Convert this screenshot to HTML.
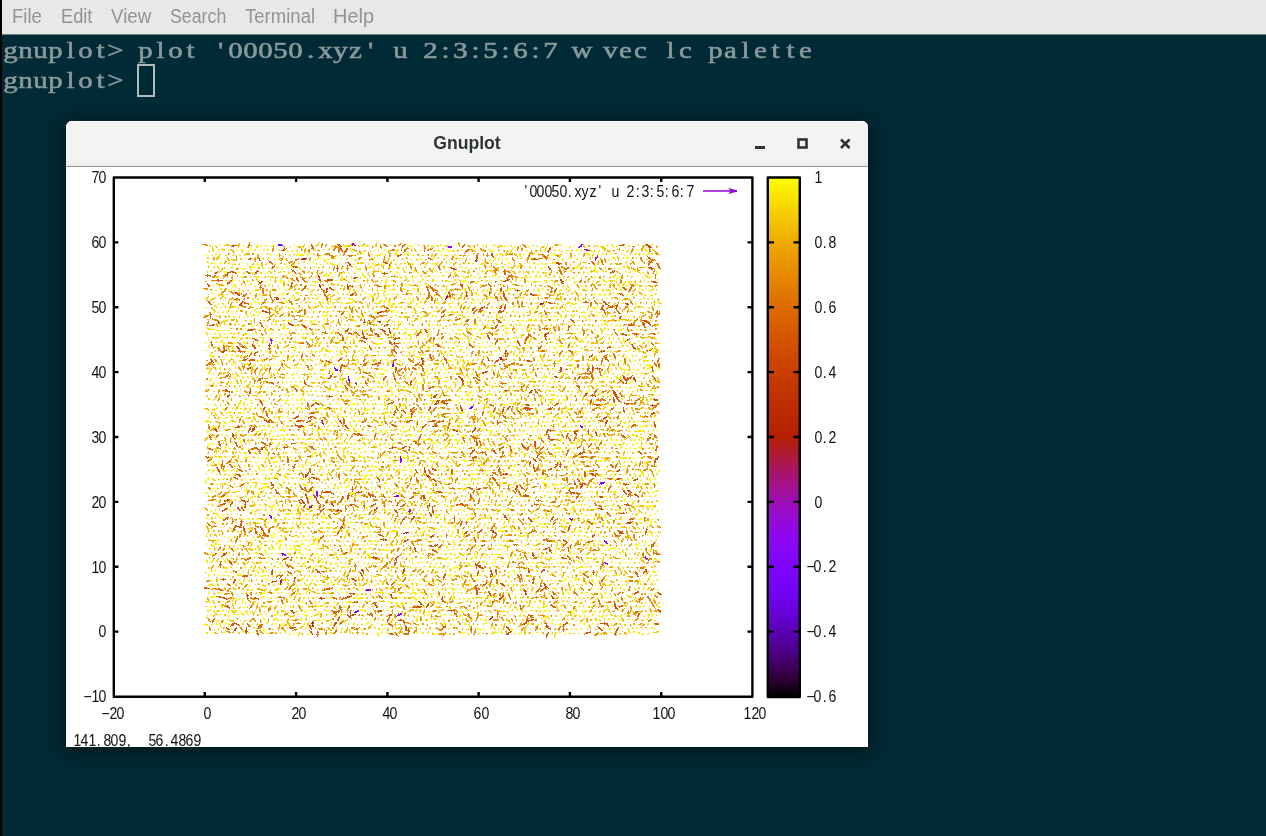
<!DOCTYPE html>
<html><head><meta charset="utf-8">
<style>
html,body{margin:0;padding:0;}
body{width:1266px;height:836px;overflow:hidden;position:relative;background:#002b36;font-family:"Liberation Sans", sans-serif;}
.abs{position:absolute;}
#strip{left:0;top:0;width:2px;height:836px;background:#000;}
#menubar{left:2px;top:0;width:1264px;height:34px;background:#e8e8e7;border-bottom:1px solid #6f8286;}
.mi{position:absolute;top:5px;font-size:20px;color:#939393;line-height:22px;white-space:pre;transform-origin:0 0;}
.term{position:absolute;left:3px;font-family:"Liberation Serif", serif;font-size:24px;line-height:30px;color:#8a999b;white-space:pre;-webkit-text-stroke:0.6px #8a999b;}
.term i{font-style:normal;display:inline-block;width:15px;text-align:center;transform:scaleX(1.2);}
#cursor{left:137px;top:64px;width:14px;height:29px;border:2px solid #b3bcb9;}
#win{left:66px;top:121px;width:802px;height:626px;background:#fff;border-radius:6px 6px 0 0;box-shadow:0 3px 22px 4px rgba(0,0,0,0.45);overflow:hidden;}
#title{position:absolute;left:0;top:0;width:802px;height:45px;background:linear-gradient(#f3f3f3 0,#f3f3f3 40px,#e9e9e8 45px);border-bottom:1px solid #98978f;box-shadow:inset 0 1px #fff;}
#ttext{position:absolute;left:0;top:12px;width:802px;text-align:center;line-height:20px;font-size:17.6px;font-weight:bold;color:#2e3436;}
.pl{position:absolute;font-size:16px;line-height:16px;color:#111;white-space:pre;}
.pl b{font-weight:normal;display:inline-block;width:7.47px;text-align:center;transform:scaleX(0.88);}
</style></head><body>
<div id="root" style="position:absolute;left:0;top:0;width:1266px;height:836px;will-change:transform">
<div id="strip" class="abs"></div>
<div id="menubar" class="abs"><div class="mi" style="left:9.69px;transform:scaleX(0.924)">File</div><div class="mi" style="left:58.52px;transform:scaleX(0.909)">Edit</div><div class="mi" style="left:109.00px;transform:scaleX(0.936)">View</div><div class="mi" style="left:167.73px;transform:scaleX(0.888)">Search</div><div class="mi" style="left:243.00px;transform:scaleX(0.927)">Terminal</div><div class="mi" style="left:331.20px;transform:scaleX(0.997)">Help</div></div>
<div class="term" style="top:35px"><i>g</i><i>n</i><i>u</i><i>p</i><i>l</i><i>o</i><i>t</i><i>&gt;</i><i> </i><i>p</i><i>l</i><i>o</i><i>t</i><i> </i><i>&#39;</i><i>0</i><i>0</i><i>0</i><i>5</i><i>0</i><i>.</i><i>x</i><i>y</i><i>z</i><i>&#39;</i><i> </i><i>u</i><i> </i><i>2</i><i>:</i><i>3</i><i>:</i><i>5</i><i>:</i><i>6</i><i>:</i><i>7</i><i> </i><i>w</i><i> </i><i>v</i><i>e</i><i>c</i><i> </i><i>l</i><i>c</i><i> </i><i>p</i><i>a</i><i>l</i><i>e</i><i>t</i><i>t</i><i>e</i></div>
<div class="term" style="top:65px"><i>g</i><i>n</i><i>u</i><i>p</i><i>l</i><i>o</i><i>t</i><i>&gt;</i><i> </i></div>
<div id="cursor" class="abs"></div>
<div id="win" class="abs">
<div id="title"><div id="ttext">Gnuplot</div>
<svg style="position:absolute;left:0;top:0" width="802" height="45" viewBox="66 121 802 45">
<rect x="755" y="146" width="10" height="3" fill="#2e3436"/>
<rect x="798.5" y="139.5" width="8" height="8" fill="none" stroke="#2e3436" stroke-width="2.6"/>
<path d="M841 139.5L849.5 148M849.5 139.5L841 148" stroke="#2e3436" stroke-width="2.6" fill="none"/>
</svg>
</div>
</div>
<svg class="abs" style="left:66px;top:167px" width="802" height="580" viewBox="66 167 802 580">
<defs><linearGradient id="cb" x1="0" y1="0" x2="0" y2="1"><stop offset="0.0000" stop-color="#ffff00"/><stop offset="0.0312" stop-color="#fbe800"/><stop offset="0.0625" stop-color="#f7d200"/><stop offset="0.0938" stop-color="#f3be00"/><stop offset="0.1250" stop-color="#efab00"/><stop offset="0.1562" stop-color="#ea9900"/><stop offset="0.1875" stop-color="#e68900"/><stop offset="0.2188" stop-color="#e17a00"/><stop offset="0.2500" stop-color="#dd6c00"/><stop offset="0.2812" stop-color="#d85f00"/><stop offset="0.3125" stop-color="#d35300"/><stop offset="0.3438" stop-color="#cf4800"/><stop offset="0.3750" stop-color="#ca3e00"/><stop offset="0.4062" stop-color="#c43500"/><stop offset="0.4375" stop-color="#bf2d00"/><stop offset="0.4688" stop-color="#ba2600"/><stop offset="0.5000" stop-color="#b42000"/><stop offset="0.5312" stop-color="#af1a32"/><stop offset="0.5625" stop-color="#a91562"/><stop offset="0.5938" stop-color="#a3118e"/><stop offset="0.6250" stop-color="#9c0db4"/><stop offset="0.6562" stop-color="#960ad4"/><stop offset="0.6875" stop-color="#8f08ec"/><stop offset="0.7188" stop-color="#8706fa"/><stop offset="0.7500" stop-color="#7f04ff"/><stop offset="0.7812" stop-color="#7703fa"/><stop offset="0.8125" stop-color="#6e02ec"/><stop offset="0.8438" stop-color="#6501d4"/><stop offset="0.8750" stop-color="#5a00b4"/><stop offset="0.9062" stop-color="#4e008e"/><stop offset="0.9375" stop-color="#400062"/><stop offset="0.9688" stop-color="#2d0032"/><stop offset="1.0000" stop-color="#000000"/></linearGradient></defs>
<g fill="none" stroke-width="15" stroke-linecap="butt" shape-rendering="crispEdges" transform="scale(.1)">
<path stroke="#7703fa" d="M3341 3673l29 29l-15 -4m15 4l-3 -15M4693 4092l30 -21l-6 13m6 -13l-14 1M5799 4257l23 18l-11 -1m11 1l-4 -11"/>
<path stroke="#7f04ff" d="M2782 2448l32 6l-11 4m11 -4l-9 -8M3485 3763l5 43l-10 -13m10 13l7 -15M4012 4625l-1 -39l8 12m-8 -12l-8 13M6047 4824l-42 12l11 -12m-11 12l15 4M2717 5193l-13 -33l11 8m-11 -8l-2 13M3587 6108l-29 10l7 -9m-7 9l11 2"/>
<path stroke="#8706fa" d="M3991 4958l-31 4l9 -7m-9 7l11 5M6038 5405l23 23l-12 -3m12 3l-3 -12"/>
<path stroke="#8f08ec" d="M4518 2471l-35 -3l12 -6m-12 6l11 8M3933 3622l-4 35l-6 -12m6 12l8 -10M3170 4911l0 40l-8 -13m8 13l8 -13M2860 5553l-39 -15l16 -3m-16 3l10 13M6082 5644l-31 -15l13 -1m-13 1l7 11"/>
<path stroke="#960ad4" d="M5783 2481l32 -27l-5 15m5 -15l-16 2"/>
<path stroke="#9c0db4" d="M2716 3439l-4 -42l10 13m-10 -13l-7 14M5690 5183l37 18l-16 1m16 -1l-8 -13M6448 5568l27 29l-14 -4m14 4l-3 -15M3706 5898l-38 3l12 -9m-12 9l13 6M4019 6137l-37 14l9 -12m-9 12l15 3"/>
<path stroke="#a3118e" d="M5846 2492l28 11l-11 2m11 -2l-7 -9M3126 5046l-26 28l3 -14m-3 14l14 -4M4103 5085l-10 39l-5 -15m5 15l11 -11"/>
<path stroke="#a91562" d="M3556 2455l-32 -13l13 -2m-13 2l8 11M5948 2606l20 -29l-1 13m1 -13l-12 5M5394 3047l33 -12l-8 10m8 -10l-13 -3M2819 5787l-13 38l-3 -15m3 15l12 -10"/>
<path stroke="#af1a32" d="M3067 2586l-40 7l12 -10m-12 10l14 6M4450 2998l18 -26l-1 12m1 -12l-11 5M3552 3823l18 18M3219 4198l7 29l-8 -8m8 8l4 -11M4091 5324l-35 3l11 -8m-11 8l12 6M4897 6200l21 -22l-2 11m2 -11l-11 3"/>
<path stroke="#b42000" d="M3194 2843l8 26l-8 -7m8 7l3 -10M5038 3605l-34 -26l16 2m-16 -2l6 15M3130 6268l-5 -44l10 13m-10 -13l-7 14"/>
<path stroke="#cf4800" d="M6457 2442l41 27l-16 0m16 0l-7 -14M5478 2523l28 -41l-1 16m1 -16l-15 6M4775 2574l-14 36l-3 -14m3 14l12 -9M3472 2618l33 38l-15 -5m15 5l-3 -16M5554 2625l39 13l-15 4m15 -4l-10 -12M4499 2673l50 21l-16 3m16 -3l-9 -13M3186 2750l12 50l-11 -11m11 11l5 -15M2227 2807l-49 -5l14 -7m-14 7l13 10M2630 2812l-30 17l6 -12m-6 12l13 0M5035 2818l48 -19l-10 13m10 -13l-16 -3M5606 2793l21 37l-14 -8m14 8l1 -16M3476 2844l5 38l-9 -11m9 11l6 -13M3270 2884l-5 32l-5 -11m5 11l8 -9M2398 2955l-42 -26l16 0m-16 0l7 14M5299 2932l33 23l-15 -1m15 1l-6 -14M2744 2969l35 19l-15 1m15 -1l-8 -13M2437 3012l-34 30l5 -15m-5 15l16 -3M6292 3050l-31 -17l13 -1m-13 1l7 12M4848 3072l-38 14l9 -12m-9 12l15 3M6160 3089l16 -35l2 14m-2 -14l-12 8M2619 3107l52 15l-15 4m15 -4l-11 -12M3771 3132l46 -12l-11 12m11 -12l-15 -5M3646 3194l-2 36l-7 -12m7 12l8 -11M3766 3212l33 8l-12 4m12 -4l-9 -9M6477 3223l-39 -18l16 -2m-16 2l9 13M2879 3226l45 29l-16 0m16 0l-7 -14M3807 3289l43 27l-16 0m16 0l-7 -14M3518 3342l-29 -13l12 -1m-12 1l7 10M5492 3329l-41 13l10 -12m-10 12l16 4M3673 3392l-42 -18l16 -2m-16 2l9 13M2364 3459l25 29l-14 -4m14 4l-2 -14M2555 3488l-25 -36l15 6m-15 -6l1 16M2692 3495l3 -46l8 14m-8 -14l-9 13M6316 3444l32 42l-15 -6m15 6l-2 -16M2271 3495l-42 23l8 -14m-8 14l16 1M5892 3572l26 -15l-5 10m5 -10l-11 0M3285 3790l32 -35l-3 16m3 -16l-15 4M4587 3763l39 38l-16 -4m16 4l-4 -16M6258 3807l-18 -37l13 8m-13 -8l-2 16M6240 3831l-32 -32l16 4m-16 -4l4 16M5331 3900l-30 24l5 -14m-5 14l15 -2M6125 3901l26 33l-15 -6m15 6l-2 -16M4399 4004l-30 9l8 -9m-8 9l11 3M2632 4055l-30 -45l15 7m-15 -7l1 16M3110 4062l25 -17l-5 10m5 -10l-11 0M4476 4042l-49 -17l16 -3m-16 3l10 12M6553 4054l-37 0l12 -7m-12 7l12 7M6551 4123l-35 22l7 -14m-7 14l16 0M2943 4186l34 -19l-7 13m7 -13l-15 0M6073 4166l-32 19l6 -13m-6 13l14 0M2952 4246l40 24l-16 0m16 0l-7 -14M2989 4255l37 9l-14 4m14 -4l-10 -10M4324 4264l37 -2l-12 8m12 -8l-12 -7M2175 4317l-30 -35l15 5m-15 -5l3 16M2519 4318l21 -35l0 16m0 -16l-14 7M4723 4325l30 -39l-2 16m2 -16l-15 6M5850 4521l-51 18l10 -12m-10 12l16 3M5305 4607l-8 31l-4 -12m4 12l9 -9M2168 4673l23 42l-14 -8m14 8l1 -16M3088 4721l-27 39l1 -16m-1 16l15 -6M4260 4747l30 21l-14 -1m14 1l-6 -13M5078 4741l-46 3l13 -9m-13 9l14 7M5739 4814l18 32l-12 -7m12 7l0 -14M4811 4886l-30 4l9 -7m-9 7l11 5M5765 4941l-34 -14l14 -2m-14 2l8 11M6320 4928l-32 -22l15 1m-15 -1l6 14M4238 4954l8 39l-10 -11m10 11l5 -14M5988 4964l31 7l-11 4m11 -4l-8 -8M2220 5111l43 -20l-9 13m9 -13l-16 -2M3419 5110l-47 -6l15 -6m-15 6l12 10M6035 5101l-32 -15l13 -2m-13 2l7 11M6264 5234l48 -10l-12 11m12 -11l-15 -5M3401 5301l17 -31l1 14m-1 -14l-12 7M4965 5338l-39 -26l16 1m-16 -1l7 15M6171 5302l38 27l-16 -1m16 1l-6 -15M4304 5374l31 -19l-6 12m6 -12l-14 0M2886 5568l-45 24l8 -14m-8 14l16 1M4835 5690l-43 -28l16 0m-16 0l7 14M4028 5737l18 -43l2 16m-2 -16l-13 9M5411 5722l28 -20l-5 12m5 -12l-13 1M3563 5812l-43 -27l16 0m-16 0l7 14M5261 5952l-8 -43l11 12m-11 -12l-6 15M2478 5988l-4 -38l9 12m-9 -12l-6 13M3246 5985l-43 0l14 -9m-14 9l14 8M3928 5992l-24 -45l14 8m-14 -8l-1 16M5040 5953l-40 37l4 -15m-4 15l16 -3M6140 6046l27 39l-15 -7m15 7l-1 -16M2944 6133l-32 -26l16 2m-16 -2l5 15M3558 6142l-38 13l10 -12m-10 12l15 3M3339 6264l19 -37l1 16m-1 -16l-14 8M2370 6277l-25 22l4 -12m-4 12l13 -2"/>
<path stroke="#d35300" d="M2366 2451l-33 6l10 -9m-10 9l12 5M4652 2443l-21 23l2 -12m-2 12l11 -3M3429 2521l-27 -43l14 7m-14 -7l0 16M3458 2521l10 -37l4 14m-4 -14l-10 10M4915 2527l10 30l-9 -8m9 8l3 -12M2586 2582l20 29l-12 -6m12 6l-1 -13M5381 2593l-49 -1l14 -8m-14 8l13 9M5472 2591l-26 -22l13 2m-13 -2l4 12M3885 2635l-34 -12l13 -3m-13 3l9 11M2979 2672l-48 -7l15 -6m-15 6l12 10M4401 2700l-14 -34l11 8m-11 -8l-2 14M5481 2663l18 29l-12 -6m12 6l0 -13M6476 2674l47 14l-15 4m15 -4l-11 -12M2370 2738l-45 -21l16 -2m-16 2l9 13M2582 2708l-27 22l4 -13m-4 13l13 -2M3879 2733l-40 0l13 -8m-13 8l13 8M6103 2732l35 -19l-7 13m7 -13l-15 -1M3576 2772l-30 8l8 -9m-8 9l11 3M3332 2800l-55 1l13 -9m-13 9l14 8M6515 2813l44 10l-15 5m15 -5l-11 -11M3339 2899l-43 -18l16 -3m-16 3l9 13M5010 2917l4 -33l5 11m-5 -11l-8 10M3496 2957l33 -16l-8 12m8 -12l-14 -1M5459 3020l50 13l-15 5m15 -5l-11 -12M6032 3012l35 33l-16 -3m16 3l-4 -15M4994 3092l21 -28l-1 13m1 -13l-12 5M5046 3096l9 -34l4 13m-4 -13l-10 9M6081 3077l53 -12l-12 11m12 -11l-15 -5M6059 3143l-24 -44l14 8m-14 -8l-1 16M4410 3175l30 -20l-6 12m6 -12l-14 1M6210 3160l-17 26l0 -12m0 12l11 -5M2166 3196l25 36l-15 -6m15 6l-1 -16M2089 3258l45 -7l-12 10m12 -10l-15 -6M3017 3241l40 34l-16 -2m16 2l-5 -15M6277 3248l49 0l-14 8m14 -8l-14 -8M2472 3303l46 -2l-13 9m13 -9l-14 -8M3891 3281l8 45l-11 -12m11 12l6 -15M4246 3286l21 32l-13 -6m13 6l0 -14M3636 3369l-9 -51l11 12m-11 -12l-6 15M3745 3326l38 35l-16 -3m16 3l-4 -15M4898 3396l-20 -43l13 9m-13 -9l-2 16M5460 3397l-10 -37l11 10m-11 -10l-4 14M5203 3457l-23 -41l14 8m-14 -8l-1 16M6068 3482l34 -13l-8 11m8 -11l-13 -2M2583 3515l-32 18l7 -12m-7 12l14 1M5062 3498l-8 48l-6 -15m6 15l11 -12M2103 3588l17 26l-11 -5m11 5l0 -12M3380 3612l32 -22l-6 14m6 -14l-15 1M4237 3630l-16 -47l12 10m-12 -10l-4 16M4990 3598l-30 19l6 -12m-6 12l13 0M5320 3617l-49 -9l15 -6m-15 6l12 11M3412 3647l40 18l-16 2m16 -2l-9 -13M3719 3652l43 -13l-11 12m11 -12l-16 -4M3964 3666l-7 44l-6 -15m6 15l10 -12M5609 3668l-2 46l-8 -14m8 14l9 -13M5927 3728l2 -55l8 14m-8 -14l-9 13M6006 3691l-37 -9l14 -4m-14 4l10 10M4818 3735l46 -15l-10 12m10 -12l-16 -4M5578 3778l-26 -14l11 -1m-11 1l6 10M5806 3758l-21 22l2 -11m-2 11l11 -3M6271 3802l40 -28l-6 15m6 -15l-16 1M6337 3766l10 33l-10 -9m10 9l3 -12M3040 3805l16 34l-12 -8m12 8l1 -14M4116 3802l-15 49l-4 -15m4 15l12 -11M6258 3841l16 -46l3 16m-3 -16l-12 10M2506 3884l-7 50l-7 -15m7 15l10 -12M2973 3914l-19 -25l11 4m-11 -4l1 12M2299 3942l-21 24l2 -12m-2 12l12 -4M4377 3944l-37 26l6 -15m-6 15l16 -1M5958 3959l-40 -7l14 -6m-14 6l12 10M6137 3936l31 32l-15 -4m15 4l-3 -16M6135 3971l7 41l-10 -12m10 12l6 -15M6583 3999l-46 -2l14 -8m-14 8l13 9M4393 4030l-30 7l8 -8m-8 8l11 4M5304 4055l-38 -8l14 -5m-14 5l11 10M2656 4069l-21 25l2 -12m-2 12l12 -4M4600 4054l21 51l-13 -9m13 9l2 -16M5105 4061l-32 34l3 -16m-3 16l15 -4M5286 4080l-40 1l13 -8m-13 8l13 8M5326 4081l-43 14l10 -12m-10 12l16 4M4137 4111l-18 39l-2 -16m2 16l13 -9M3077 4180l31 -8l-9 9m9 -9l-12 -4M2646 4202l40 17l-16 2m16 -2l-9 -13M2964 4213l38 -2l-12 8m12 -8l-12 -7M3417 4237l-17 -29l11 6m-11 -6l0 13M4287 4216l54 -6l-13 10m13 -10l-14 -7M6074 4198l-17 43l-3 -16m3 16l13 -10M2347 4279l49 -13l-11 12m11 -12l-15 -5M3488 4291l-37 -36l16 4m-16 -4l4 16M4585 4314l-48 -16l16 -4m-16 4l10 12M5487 4286l-18 39l-2 -16m2 16l13 -9M5888 4289l-4 36l-6 -12m6 12l8 -11M2325 4329l10 38l-11 -10m11 10l4 -14M5771 4354l-19 -25l11 4m-11 -4l1 12M5969 4359l-8 -33l9 9m-9 -9l-4 12M5544 4390l-38 15l9 -12m-9 12l15 3M5352 4415l-1 55l-8 -14m8 14l9 -13M2590 4499l-41 -26l16 0m-16 0l7 14M2648 4468l-36 21l7 -14m-7 14l16 0M2878 4472l-39 3l12 -9m-12 9l13 7M3973 4473l-53 4l13 -9m-13 9l14 7M4066 4461l-45 23l8 -14m-8 14l16 1M2505 4543l-16 -38l13 9m-13 -9l-2 15M4700 4547l38 -40l-3 16m3 -16l-15 4M4964 4544l-28 -37l15 6m-15 -6l2 16M6423 4545l-39 -30l16 2m-16 -2l6 15M6588 4565l-26 31l2 -15m-2 15l15 -5M5601 4675l5 -34l5 12m-5 -12l-9 10M4246 4675l2 43l-9 -13m9 13l8 -14M4319 4683l40 24l-16 0m16 0l-7 -14M5971 4703l-44 5l13 -10m-13 10l15 7M2411 4767l-30 -20l14 1m-14 -1l6 13M5960 4761l-40 -20l16 -1m-16 1l8 14M3169 4791l-31 -13l13 -2m-13 2l8 10M3801 4814l-25 -39l14 7m-14 -7l0 16M4327 4788l24 20l-12 -2m12 2l-4 -11M6215 4784l-39 9l11 -11m-11 11l15 5M6381 4788l-31 10l8 -10m-8 10l12 3M2709 4820l18 35l-13 -8m13 8l1 -15M6228 4838l38 8l-14 5m14 -5l-11 -10M5173 4853l-10 44l-5 -15m5 15l11 -11M5801 4887l19 -37l1 16m-1 -16l-13 8M3287 4918l-31 0l10 -6m-10 6l10 6M4433 4928l-53 -12l15 -5m-15 5l11 11M6268 4949l-29 -41l15 6m-15 -6l1 16M3055 4935l18 47l-13 -10m13 10l3 -16M3130 4944l28 34l-15 -5m15 5l-2 -16M3476 5001l9 -54l6 15m-6 -15l-11 12M3710 4976l-19 -40l13 9m-13 -9l-2 16M5288 4959l-43 -1l14 -8m-14 8l13 9M6388 4971l-28 -19l13 1m-13 -1l5 12M2240 5012l40 -11l-11 11m11 -11l-15 -4M2410 5001l44 14l-16 4m16 -4l-11 -12M3011 4991l28 42l-15 -7m15 7l-1 -16M2202 5046l37 -5l-11 9m11 -9l-13 -6M2449 5080l7 -37l5 13m-5 -13l-10 10M3340 5064l-22 -29l13 5m-13 -5l1 14M3534 5040l-32 13l8 -11m-8 11l13 2M3969 5059l10 -30l3 12m-3 -12l-9 8M4303 5035l-22 30l1 -14m-1 14l13 -5M2407 5113l-28 -35l15 5m-15 -5l2 16M4324 5081l9 48l-11 -12m11 12l6 -15M4294 5120l13 33l-11 -8m11 8l2 -13M6205 5134l35 -1l-11 7m11 -7l-12 -6M4145 5165l-30 35l3 -16m-3 16l15 -5M5072 5198l-23 -39l14 7m-14 -7l0 16M5277 5175l41 36l-16 -3m16 3l-5 -15M5542 5163l-27 30l3 -15m-3 15l15 -4M4619 5212l-10 37l-4 -14m4 14l11 -10M2361 5260l49 12l-15 5m15 -5l-11 -11M2433 5261l9 46l-11 -12m11 12l6 -15M2605 5262l17 33l-12 -7m12 7l1 -14M4675 5311l-23 26l2 -13m-2 13l13 -4M5952 5343l-24 22l3 -12m-3 12l12 -2M3871 5400l-44 -7l15 -6m-15 6l12 10M4087 5393l-39 19l8 -14m-8 14l16 1M4329 5467l-31 -12l12 -3m-12 3l8 10M4381 5451l-30 5l9 -8m-9 8l11 4M4159 5519l-8 -31l9 8m-9 -8l-3 12M5492 5476l13 39l-12 -10m12 10l4 -15M2274 5526l-43 25l8 -14m-8 14l16 0M5326 5524l10 38l-11 -11m11 11l5 -14M3779 5581l-53 -5l14 -7m-14 7l13 10M3986 5561l-32 33l4 -16m-4 16l16 -4M5666 5587l-45 -9l15 -6m-15 6l12 11M2282 5595l30 43l-15 -6m15 6l-1 -16M2724 5692l-4 53l-7 -14m7 14l9 -13M3641 5734l-19 -35l13 8m-13 -8l-1 15M4905 5699l17 47l-12 -10m12 10l3 -16M5291 5726l-5 -31l8 9m-8 -9l-4 11M6432 5737l31 -37l-2 16m2 -16l-15 5M3625 5768l-18 -39l13 9m-13 -9l-2 16M2263 5796l-38 -1l13 -7m-13 7l12 8M2767 5811l-32 5l9 -8m-9 8l11 5M6052 5776l-38 39l4 -16m-4 16l16 -4M5051 5865l-32 -23l15 1m-15 -1l6 14M5436 5830l31 42l-15 -6m15 6l-1 -16M5927 5856l-22 -26l12 4m-12 -4l2 13M3554 5938l-54 -1l14 -8m-14 8l13 9M4771 5947l-3 -43l9 13m-9 -13l-7 14M6392 5914l-43 23l8 -14m-8 14l16 1M6571 5924l39 23l-16 0m16 0l-8 -14M2279 5995l-44 -19l16 -2m-16 2l9 13M2592 5991l-48 -11l15 -5m-15 5l11 11M3519 5961l-49 14l11 -12m-11 12l15 4M5509 5953l30 29l-16 -3m16 3l-4 -15M3749 6043l22 27l-13 -5m13 5l-2 -13M4150 6074l54 -6l-13 10m13 -10l-14 -7M4264 6076l21 -32l0 15m0 -15l-13 6M3822 6109l-43 5l13 -10m-13 10l14 7M4547 6108l-39 -5l14 -6m-14 6l12 9M6580 6090l21 29l-13 -5m13 5l-1 -14M3468 6145l35 31l-16 -3m16 3l-5 -15M3732 6163l-22 -24l12 3m-12 -3l2 12M3923 6148l-37 8l10 -10m-10 10l13 5M4043 6205l-39 -4l14 -6m-14 6l12 9M5274 6212l53 -12l-11 11m11 -11l-15 -5M2398 6260l-25 -17l12 1m-12 -1l5 10M2633 6243l-35 16l8 -12m-8 12l15 2M5271 6225l-41 18l9 -13m-9 13l16 2M5451 6223l25 39l-14 -7m14 7l0 -16M5996 6236l52 -1l-13 9m13 -9l-14 -8M6087 6269l-16 -30l11 7m-11 -7l-1 13M2464 6271l-2 52l-8 -14m8 14l9 -13M5096 6305l-22 -29l13 5m-13 -5l1 14M6028 6310l-40 -35l16 3m-16 -3l5 15M5116 6312l-45 30l7 -15m-7 15l16 -1M5909 6319l-44 13l11 -12m-11 12l15 4"/>
<path stroke="#d85f00" d="M3112 2437l17 51l-12 -10m12 10l4 -16M3421 2467l-32 -16l13 -1m-13 1l7 11M6194 2458l40 -8l-11 10m11 -10l-14 -5M2813 2508l41 -14l-10 12m10 -12l-16 -3M4016 2546l-39 16l9 -13m-9 13l16 3M2521 2585l-32 8l9 -9m-9 9l12 4M4279 2580l33 14l-13 2m13 -2l-8 -11M6523 2613l-36 -39l15 4m-15 -4l3 16M3378 2647l-5 46l-7 -15m7 15l10 -13M3890 2689l9 -31l3 12m-3 -12l-9 8M2185 2715l-30 16l6 -11m-6 11l13 1M2313 2714l-37 23l7 -14m-7 14l16 0M2113 2760l-43 -8l15 -6m-15 6l12 11M2158 2752l-26 17l5 -11m-5 11l12 0M2320 2802l-41 31l6 -15m-6 15l16 -2M2986 2823l-13 -38l12 10m-12 -10l-3 15M2096 2866l-23 -25l12 4m-12 -4l2 13M2922 2822l-10 48l-5 -15m5 15l11 -12M4631 2884l-19 -38l14 8m-14 -8l-1 16M3018 2908l32 -39l-2 16m2 -16l-15 5M5566 2885l-19 33l0 -14m0 14l13 -7M4490 2915l7 54l-10 -12m10 12l6 -15M4670 2968l-7 -48l10 12m-10 -12l-6 15M5041 2974l-5 -48l10 13m-10 -13l-7 14M6237 2956l-28 -16l12 0m-12 0l6 11M5078 3011l-28 -32l15 5m-15 -5l3 16M2113 3048l-27 -34l15 6m-15 -6l2 16M2487 3040l-36 -10l13 -4m-13 4l10 10M5888 3027l-32 -5l11 -5m-11 5l9 8M4756 3070l-33 30l4 -15m-4 15l16 -3M6004 3100l31 -42l-1 16m1 -16l-15 6M2696 3090l0 45l-8 -14m8 14l8 -14M5005 3097l-21 28l1 -13m-1 13l12 -5M5042 3111l-31 8l8 -9m-8 9l12 4M3698 3144l39 33l-16 -2m16 2l-5 -15M3690 3199l14 36l-12 -9m12 9l3 -15M4652 3218l31 -15l-7 11m7 -11l-13 -1M5706 3191l28 28l-15 -3m15 3l-4 -15M3838 3262l36 -11l-10 11m10 -11l-14 -4M4978 3242l-21 35l0 -15m0 15l14 -7M6451 3278l-19 -46l13 9m-13 -9l-2 16M6506 3258l-23 -37l14 7m-14 -7l0 16M3489 3281l-28 34l2 -16m-2 16l15 -5M4211 3319l-38 32l5 -15m-5 15l16 -2M6268 3352l-46 -11l15 -5m-15 5l11 11M6320 3332l50 14l-15 4m15 -4l-11 -12M2523 3379l46 24l-16 1m16 -1l-8 -14M3430 3414l-3 -44l9 13m-9 -13l-7 14M3996 3379l-47 9l12 -11m-12 11l15 6M5251 3404l28 -35l-2 16m2 -16l-15 5M3987 3433l-46 4l13 -10m-13 10l14 7M4948 3446l26 -43l0 16m0 -16l-14 7M2406 3460l30 15l-12 1m12 -1l-7 -11M4410 3470l-35 -19l15 -1m-15 1l8 13M4733 3479l-39 -38l16 3m-16 -3l4 15M3973 3533l-43 -34l16 2m-16 -2l5 15M6047 3511l-37 5l11 -9m-11 9l13 6M6466 3512l43 -16l-10 13m10 -13l-16 -3M4295 3537l13 43l-12 -11m12 11l4 -15M2418 3608l40 -12l-10 12m10 -12l-15 -4M2548 3598l-45 4l13 -10m-13 10l14 7M4471 3633l-19 -46l13 10m-13 -10l-3 16M4894 3611l-18 -32l12 7m-12 -7l0 14M6088 3615l-32 -36l15 5m-15 -5l3 16M3678 3624l-38 26l7 -15m-7 15l16 -1M2471 3694l35 -15l-8 12m8 -12l-14 -2M6518 3663l12 50l-11 -11m11 11l5 -15M3863 3762l-22 27l2 -13m-2 13l13 -4M2741 3844l-31 -21l14 0m-14 0l6 13M4628 3804l-1 45l-8 -14m8 14l9 -14M5802 3883l-23 -24l12 3m-12 -3l3 12M2299 3919l-47 -16l16 -3m-16 3l10 12M5101 3906l-49 1l13 -9m-13 9l14 8M3333 3966l-42 -2l14 -8m-14 8l13 9M5829 3973l39 -32l-5 15m5 -15l-16 2M5915 3986l-9 46l-6 -15m6 15l11 -12M6161 3977l37 38l-16 -4m16 4l-4 -16M3196 4045l-41 -13l16 -4m-16 4l10 12M3874 4044l51 -18l-10 12m10 -12l-16 -3M5541 4055l33 -13l-8 11m8 -11l-13 -2M6008 4053l-49 -7l15 -6m-15 6l12 10M6243 4028l30 13l-12 2m12 -2l-7 -10M3269 4077l33 10l-13 4m13 -4l-9 -10M4142 4069l-35 41l2 -16m-2 16l15 -5M4280 4107l24 -29l-2 14m2 -14l-14 5M5044 4066l-18 48l-3 -16m3 16l13 -10M5471 4096l45 -12l-11 12m11 -12l-15 -5M6144 4076l-29 17l6 -11m-6 11l13 0M6234 4073l5 36l-9 -11m9 11l5 -13M2660 4107l14 49l-12 -11m12 11l4 -15M3092 4136l52 -10l-12 11m12 -11l-15 -6M3938 4155l19 -42l2 16m-2 -16l-13 9M4060 4131l-26 -19l12 1m-12 -1l5 11M4124 4200l-51 18l10 -12m-10 12l16 3M4977 4196l-1 41l-8 -13m8 13l9 -13M3714 4271l-29 -18l13 0m-13 0l6 12M3915 4242l39 20l-16 1m16 -1l-8 -14M6554 4284l-6 -45l10 12m-10 -12l-6 15M5548 4307l-50 0l14 -8m-14 8l14 8M5735 4319l38 -12l-10 11m10 -11l-15 -4M3629 4357l-43 -17l16 -3m-16 3l10 13M5683 4327l-18 44l-3 -16m3 16l13 -9M6213 4347l37 29l-16 -2m16 2l-5 -15M2186 4407l12 46l-12 -11m12 11l5 -15M2376 4467l-20 -39l14 8m-14 -8l-1 16M4191 4454l-39 -33l16 2m-16 -2l5 15M4768 4463l0 -41l8 13m-8 -13l-8 13M5212 4433l19 30l-12 -6m12 6l0 -14M5041 4463l-43 31l6 -15m-6 15l16 -1M5238 4468l25 26l-13 -3m13 3l-3 -13M5769 4480l29 -11l-7 9m7 -9l-12 -2M3067 4563l47 3l-14 7m14 -7l-13 -9M4717 4585l41 -13l-11 12m11 -12l-16 -4M2223 4601l0 49l-8 -14m8 14l8 -14M5364 4621l-20 -26l12 5m-12 -5l1 12M6543 4650l10 -50l5 15m-5 -15l-11 12M5332 4638l10 53l-11 -12m11 12l6 -15M5551 4680l21 -36l0 16m0 -16l-14 7M2425 4717l-34 -24l16 1m-16 -1l6 15M4152 4692l14 28l-10 -6m10 6l1 -12M5478 4703l32 -12l-8 10m8 -10l-13 -2M6201 4695l-29 16l6 -11m-6 11l13 0M5424 4757l9 -31l3 12m-3 -12l-9 8M5852 4712l-3 49l-8 -14m8 14l9 -13M2381 4793l-30 -17l13 0m-13 0l6 11M4960 4811l-30 -32l15 4m-15 -4l3 16M5771 4779l19 31l-12 -6m12 6l0 -14M5822 4829l31 15l-13 1m13 -1l-7 -11M2993 4847l31 45l-15 -6m15 6l-1 -16M3127 4866l-27 38l1 -16m-1 16l15 -6M4733 4895l-40 -17l16 -2m-16 2l9 13M5196 4853l29 31l-15 -4m15 4l-3 -16M2748 4894l32 39l-15 -5m15 5l-2 -16M3620 4922l-46 4l13 -9m-13 9l14 7M5718 4944l-27 -47l14 8m-14 -8l0 16M2208 4978l41 -33l-5 15m5 -15l-16 2M4098 4990l39 -27l-6 15m6 -15l-16 1M4712 5000l-4 -52l9 13m-9 -13l-7 14M6276 4971l22 -30l-1 14m1 -14l-13 5M2983 4999l22 31l-13 -6m13 6l-1 -14M3072 4994l7 31l-8 -8m8 8l4 -11M3161 4992l23 35l-14 -7m14 7l0 -16M3762 5035l-44 26l7 -14m-7 14l16 0M4004 5072l42 -27l-7 14m7 -14l-16 0M4559 5053l52 -12l-11 11m11 -11l-15 -5M4607 5030l27 27l-14 -3m14 3l-3 -14M5343 5040l29 8l-11 3m11 -3l-8 -8M6021 5074l-27 -17l12 0m-12 0l5 11M6311 5058l-47 -12l15 -5m-15 5l11 12M3248 5079l-40 36l5 -15m-5 15l16 -3M3777 5071l-30 37l2 -16m-2 16l15 -5M3940 5091l24 28l-13 -4m13 4l-2 -14M2233 5204l43 -24l-8 14m8 -14l-16 -1M4066 5166l-36 30l5 -15m-5 15l16 -2M4543 5160l1 34l-7 -11m7 11l6 -11M2410 5258l5 -49l7 14m-7 -14l-10 13M3429 5201l10 52l-11 -12m11 12l6 -15M5555 5216l-20 23l2 -11m-2 11l11 -3M5926 5244l-40 -24l16 0m-16 0l7 14M5702 5249l-18 51l-3 -16m3 16l12 -10M2551 5282l14 52l-12 -11m12 11l5 -15M3399 5303l-24 35l1 -16m-1 16l15 -7M4776 5331l41 -29l-6 15m6 -15l-16 1M6472 5286l-17 47l-3 -16m3 16l12 -10M3238 5359l-30 21l6 -13m-6 13l14 -1M3841 5369l-43 -23l16 -1m-16 1l8 14M5629 5392l29 26l-14 -3m14 3l-4 -14M4850 5450l-33 6l10 -8m-10 8l12 5M4319 5492l36 25l-16 -1m16 1l-6 -15M5434 5497l31 -10l-8 9m8 -9l-12 -3M5681 5471l11 43l-11 -11m11 11l5 -15M2168 5532l-29 18l6 -12m-6 12l13 0M3437 5542l29 -11l-7 9m7 -9l-12 -2M3971 5606l-23 34l1 -15m-1 15l14 -6M4769 5693l-9 -48l11 12m-11 -12l-6 15M3157 5691l34 33l-16 -4m16 4l-4 -16M4787 5703l-11 36l-4 -14m4 14l11 -10M5935 5697l-1 33l-6 -11m6 11l7 -11M2484 5758l-48 5l13 -10m-13 10l14 7M4458 5733l-20 44l-2 -16m2 16l13 -9M5175 5744l14 34l-11 -8m11 8l2 -14M6382 5767l-19 -39l13 9m-13 -9l-2 16M2355 5792l-21 37l-1 -16m1 16l14 -8M2940 5819l11 -42l5 15m-5 -15l-12 11M5329 5839l10 -51l6 15m-6 -15l-11 12M2099 5887l-46 -8l15 -6m-15 6l12 11M4887 5913l23 49l-13 -9m13 9l2 -16M3469 5979l-36 7l10 -9m-10 9l13 5M4428 5959l-7 39l-6 -14m6 14l10 -11M3583 6021l-40 3l12 -9m-12 9l13 7M4182 6011l37 34l-16 -3m16 3l-4 -15M2302 6083l-29 -21l13 1m-13 -1l5 12M3395 6047l11 40l-11 -11m11 11l4 -15M3497 6053l-13 29l-2 -12m2 12l10 -7M5200 6050l13 45l-12 -11m12 11l4 -15M5505 6047l45 25l-16 1m16 -1l-8 -14M6186 6072l45 -17l-10 13m10 -13l-16 -3M3348 6124l43 -14l-10 12m10 -12l-16 -4M5276 6145l39 23l-16 0m16 0l-7 -14M2355 6227l-36 22l7 -14m-7 14l16 0M3928 6262l-39 -27l16 1m-16 -1l6 15M4051 6246l-13 -28l10 6m-10 -6l-1 12M5676 6226l-41 28l7 -15m-7 15l16 -1M6593 6237l-51 6l13 -10m-13 10l14 7M2895 6280l40 -1l-13 8m13 -8l-13 -8M3117 6300l-17 -40l13 9m-13 -9l-2 16M4063 6314l-7 -53l10 13m-10 -13l-7 15M4415 6296l36 -31l-5 15m5 -15l-16 3M5507 6293l-37 -25l16 1m-16 -1l7 15M6187 6272l-20 37l-1 -16m1 16l14 -8M3128 6347l-21 -30l13 6m-13 -6l1 14M4080 6353l7 -51l6 15m-6 -15l-10 12M5485 6325l-15 29l-1 -12m1 12l11 -7"/>
<path stroke="#dd6c00" d="M4052 2441l-23 21l3 -11m-3 11l12 -2M4269 2506l51 -18l-10 12m10 -12l-16 -3M4693 2490l-32 25l6 -15m-6 15l15 -2M6499 2523l-4 -30l7 9m-7 -9l-5 10M4780 2532l-14 32l-2 -13m2 13l11 -8M2733 2645l-36 -31l16 3m-16 -3l5 15M6484 2660l15 -48l4 15m-4 -15l-12 11M2714 2691l24 -24l-3 13m3 -13l-13 3M6601 2690l-22 -41l14 8m-14 -8l-1 16M2461 2714l35 20l-15 1m15 -1l-7 -13M2963 2740l-38 -37l16 4m-16 -4l4 16M5051 2752l-5 -48l10 13m-10 -13l-7 14M2285 2763l-32 -10l12 -3m-12 3l8 10M2177 2802l-32 3l10 -8m-10 8l11 5M4746 2809l-33 16l7 -12m-7 12l14 1M4913 2867l-21 -25l12 4m-12 -4l2 12M4281 2909l-8 -42l11 12m-11 -12l-6 15M4342 2915l-32 -41l15 6m-15 -6l2 16M5202 2906l-32 -1l11 -6m-11 6l10 7M6263 2903l-24 -23l12 3m-12 -3l3 12M6291 2919l21 -44l2 16m-2 -16l-13 9M2471 2939l-36 21l7 -14m-7 14l16 0M3238 2920l16 42l-13 -10m13 10l3 -16M4397 2966l-35 -36l15 4m-15 -4l3 16M4893 2959l7 -34l4 12m-4 -12l-9 10M2403 2999l-41 -6l15 -6m-15 6l12 10M3270 2958l4 39l-9 -12m9 12l7 -14M4318 3012l3 -31l5 11m-5 -11l-7 9M4985 3011l-24 -41l14 8m-14 -8l0 16M3832 3064l44 23l-16 1m16 -1l-8 -14M4833 3104l-39 12l10 -12m-10 12l15 4M2107 3190l-2 -53l9 13m-9 -13l-8 14M4963 3191l37 28l-16 -1m16 1l-6 -15M2601 3221l23 43l-14 -8m14 8l1 -16M3091 3284l27 14l-11 1m11 -1l-6 -10M5476 3289l-36 -4l12 -6m-12 6l11 8M5682 3309l8 -43l6 15m-6 -15l-11 12M3412 3351l-42 -24l16 0m-16 0l8 14M4928 3363l-16 -31l11 7m-11 -7l-1 13M5279 3333l24 25l-13 -3m13 3l-3 -13M6497 3332l52 10l-15 6m15 -6l-12 -11M6303 3385l-32 16l7 -12m-7 12l14 1M2108 3416l12 42l-12 -11m12 11l4 -15M3061 3419l28 29l-15 -4m15 4l-3 -15M3892 3403l16 34l-12 -8m12 8l2 -14M2239 3449l2 32l-7 -10m7 10l6 -11M3690 3457l23 35l-14 -7m14 7l0 -16M3983 3478l-22 -23l12 3m-12 -3l2 12M5418 3457l-28 28l4 -15m-4 15l15 -3M2376 3507l37 8l-13 5m13 -5l-10 -10M5401 3511l37 1l-12 7m12 -7l-12 -8M3026 3535l-9 32l-4 -12m4 12l9 -9M6132 3531l21 46l-13 -9m13 9l2 -16M3253 3603l40 19l-16 2m16 -2l-9 -13M3972 3592l-47 17l10 -12m-10 12l16 3M6594 3579l-18 37l-2 -16m2 16l13 -8M2486 3660l20 -26l-1 12m1 -12l-12 4M3772 3667l28 -45l0 16m0 -16l-14 7M4144 3661l40 -26l-7 14m7 -14l-16 0M4198 3661l37 -32l-5 15m5 -15l-16 3M5781 3640l-4 30l-5 -11m5 11l7 -9M6589 3626l4 43l-10 -13m10 13l7 -14M2576 3675l-23 23l3 -12m-3 12l12 -3M2705 3670l-8 30l-4 -11m4 11l8 -8M3091 3700l-15 -37l12 9m-12 -9l-2 15M3412 3661l-7 51l-7 -15m7 15l10 -12M4121 3675l39 21l-16 1m16 -1l-8 -14M5873 3722l14 -42l4 16m-4 -16l-12 10M5897 3739l-51 -6l15 -7m-15 7l13 10M5930 3756l-23 -33l14 6m-14 -6l1 15M2234 3782l43 -27l-7 14m7 -14l-16 0M2633 3776l-42 24l8 -14m-8 14l16 1M3937 3752l13 43l-12 -11m12 11l4 -15M5939 3797l-20 -35l13 7m-13 -7l0 15M3653 3804l14 41l-12 -10m12 10l3 -16M4047 3808l24 27l-13 -4m13 4l-2 -13M4352 3865l-52 13l11 -11m-11 11l15 5M5345 3891l21 32l-13 -6m13 6l-1 -15M5972 3891l-24 38l0 -16m0 16l14 -7M4466 4005l-42 9l11 -11m-11 11l15 5M4511 3999l-53 6l13 -10m-13 10l15 7M6350 4013l45 -26l-8 14m8 -14l-16 0M4938 4064l-33 -21l15 0m-15 0l7 13M4367 4071l-34 35l3 -16m-3 16l15 -4M4824 4156l7 -32l4 12m-4 -12l-9 9M5177 4104l31 31l-16 -4m16 4l-4 -16M2584 4162l30 10l-12 3m12 -3l-8 -9M5027 4153l25 24l-13 -3m13 3l-3 -13M6480 4171l-32 -9l12 -3m-12 3l9 9M2692 4194l37 30l-16 -2m16 2l-5 -15M3058 4227l47 -21l-9 13m9 -13l-16 -2M3442 4244l-3 -54l9 13m-9 -13l-8 14M4440 4210l-50 9l12 -11m-12 11l15 6M4268 4243l-42 34l5 -15m-5 15l16 -2M6307 4275l42 -27l-7 14m7 -14l-16 0M2478 4325l27 -43l0 16m0 -16l-14 7M3593 4356l-47 -16l16 -3m-16 3l10 12M3762 4330l-14 41l-3 -16m3 16l12 -10M4209 4342l-12 35l-3 -14m3 14l11 -9M4706 4352l23 20l-12 -2m12 2l-3 -11M5480 4338l14 47l-12 -11m12 11l4 -15M2113 4404l-11 -34l10 9m-10 -9l-3 13M4796 4388l-38 -6l13 -6m-13 6l11 9M5684 4372l19 37l-13 -8m13 8l1 -16M6506 4375l-29 25l4 -14m-4 14l15 -2M2611 4416l43 32l-16 -1m16 1l-6 -15M2688 4466l19 -35l1 15m-1 -15l-13 8M2913 4438l31 -2l-10 7m10 -7l-11 -6M5919 4437l-24 22l4 -12m-4 12l12 -2M2133 4500l-37 -12l14 -3m-14 3l10 11M2561 4480l-51 15l11 -12m-11 12l15 4M3154 4501l-45 -29l16 0m-16 0l7 14M5101 4457l10 54l-11 -12m11 12l6 -15M6558 4508l14 -43l4 16m-4 -16l-12 10M4800 4526l32 0l-10 6m10 -6l-10 -6M4848 4516l12 33l-10 -8m10 8l3 -13M5658 4555l26 -47l1 16m-1 -16l-14 8M2052 4565l33 12l-13 3m13 -3l-8 -10M4999 4574l34 -9l-9 9m9 -9l-13 -4M5366 4584l23 -48l2 16m-2 -16l-13 9M5865 4563l-49 10l12 -11m-12 11l15 5M2070 4618l42 -26l-7 14m7 -14l-16 0M2878 4629l1 -44l8 14m-8 -14l-9 13M4694 4607l52 -3l-13 9m13 -9l-14 -8M2215 4642l1 33l-7 -10m7 10l6 -11M2293 4640l27 30l-15 -4m15 4l-3 -15M2954 4638l-21 42l-1 -16m1 16l14 -8M3103 4675l-2 36l-7 -12m7 12l8 -11M4284 4695l20 34l-13 -7m13 7l0 -15M4518 4693l0 34l-7 -11m7 11l7 -11M4982 4723l14 -36l3 14m-3 -14l-12 9M5346 4719l33 -29l-5 15m5 -15l-16 3M6074 4787l42 2l-14 8m14 -8l-13 -9M3525 4864l1 39l-8 -13m8 13l8 -13M4552 4889l-35 -6l13 -5m-13 5l10 9M6113 4854l-27 46l0 -16m0 16l14 -8M3341 4946l-44 -32l16 1m-16 -1l6 15M5181 4904l26 44l-14 -7m14 7l0 -16M3194 4946l22 27l-13 -4m13 4l-2 -13M3764 4976l-42 -24l16 0m-16 0l8 14M3857 4983l-31 -34l15 4m-15 -4l3 16M5795 4942l-27 36l1 -16m-1 16l15 -6M3400 5031l22 -45l2 16m-2 -16l-13 9M2301 5063l21 -36l0 16m0 -16l-14 8M3059 5044l-23 28l2 -13m-2 13l13 -4M2447 5113l-36 -39l15 5m-15 -5l3 16M5082 5091l44 10l-15 5m15 -5l-11 -11M5446 5098l40 15l-16 3m16 -3l-10 -13M6111 5162l-36 -31l16 3m-16 -3l5 15M6291 5193l39 -2l-12 9m12 -9l-13 -7M4666 5253l-2 -35l8 11m-8 -11l-6 12M2356 5255l-16 45l-3 -16m3 16l12 -10M2634 5311l12 36l-11 -9m11 9l3 -14M2686 5335l7 -43l6 15m-6 -15l-11 12M5608 5308l30 16l-13 1m13 -1l-6 -11M6216 5308l13 31l-10 -8m10 8l2 -13M2694 5363l-52 -9l15 -6m-15 6l12 11M4968 5348l-26 23l4 -13m-4 13l13 -2M6150 5335l19 33l-13 -7m13 7l1 -15M4762 5422l-22 -44l14 8m-14 -8l-1 16M5433 5400l35 -6l-10 9m10 -9l-12 -5M5473 5410l54 0l-14 8m14 -8l-14 -8M4423 5447l-32 30l4 -15m-4 15l16 -3M5666 5430l-29 26l4 -14m-4 14l15 -3M6555 5423l-36 39l3 -16m-3 16l15 -4M6609 5547l-51 -13l15 -5m-15 5l11 12M2508 5576l-28 14l6 -10m-6 10l12 1M5674 5553l25 40l-14 -7m14 7l0 -16M2209 5614l-6 41l-6 -14m6 14l10 -12M2886 5676l-15 -27l10 6m-10 -6l0 12M2332 5709l31 11l-12 3m12 -3l-8 -10M2874 5711l26 21l-13 -2m13 2l-4 -12M3209 5716l33 1l-11 6m11 -6l-10 -7M4958 5689l2 37l-8 -12m8 12l7 -12M2831 5744l-25 24l3 -13m-3 13l13 -3M4907 5740l0 30l-6 -10m6 10l6 -10M2269 5836l26 18l-12 0m12 0l-5 -11M3910 5853l43 -34l-5 15m5 -15l-16 2M4877 5823l-44 32l6 -15m-6 15l16 -1M5405 5835l7 31l-8 -9m8 9l4 -11M2183 5886l40 21l-16 1m16 -1l-8 -14M3283 5886l-44 12l11 -12m-11 12l15 4M3331 5880l-42 11l11 -12m-11 12l15 5M4802 5894l-51 -13l15 -5m-15 5l11 12M5404 5883l-33 32l4 -15m-4 15l16 -3M5458 5876l-44 26l8 -14m-8 14l16 0M2911 5949l35 -24l-7 15m7 -15l-16 1M4950 5931l-13 27l-1 -12m1 12l10 -6M2236 5980l-47 -15l16 -4m-16 4l10 12M3369 5990l-35 -14l14 -2m-14 2l9 12M3825 5994l-25 -31l14 5m-14 -5l2 15M6475 5963l30 46l-14 -7m14 7l0 -16M2830 6043l-7 -38l10 11m-10 -11l-5 14M3775 6025l-42 9l12 -11m-12 11l15 5M4951 5996l-22 31l1 -14m-1 14l13 -6M6141 6009l7 32l-9 -9m9 9l4 -12M4117 6076l41 -10l-11 11m11 -11l-15 -5M3309 6101l40 28l-16 -1m16 1l-6 -15M3510 6099l-7 34l-4 -12m4 12l9 -10M4678 6135l17 36l-13 -8m13 8l2 -15M6396 6128l-19 42l-2 -16m2 16l13 -9M2148 6181l-19 35l-1 -15m1 15l13 -8M3374 6211l19 -35l1 15m-1 -15l-13 8M3897 6175l-17 30l0 -13m0 13l11 -6M5271 6219l3 -43l7 14m-7 -14l-9 13M2470 6237l25 25l-13 -3m13 3l-3 -13M2259 6276l28 20l-13 -1m13 1l-5 -12M4709 6259l3 52l-9 -13m9 13l8 -14M5634 6264l0 37l-8 -12m8 12l7 -12M3180 6315l-5 36l-6 -13m6 13l9 -11M3341 6339l22 -34l0 16m0 -16l-14 7M3878 6334l47 9l-15 6m15 -6l-12 -11M4028 6335l50 8l-15 6m15 -6l-12 -10M6167 6304l-15 43l-3 -16m3 16l12 -10"/>
<path stroke="#e17a00" d="M2477 2483l19 -43l2 16m-2 -16l-13 9M3876 2472l-33 -27l16 2m-16 -2l5 15M3950 2501l-31 1l10 -7m-10 7l10 6M4084 2476l-38 34l5 -15m-5 15l16 -3M3285 2546l44 19l-16 2m16 -2l-9 -13M3472 2553l32 7l-12 4m12 -4l-9 -9M5305 2524l-16 37l-2 -15m2 15l13 -9M5550 2550l36 8l-13 5m13 -5l-10 -10M5914 2608l24 33l-14 -6m14 6l-1 -15M6029 2649l-15 -50l12 11m-12 -11l-4 15M4932 2667l35 33l-16 -3m16 3l-4 -15M5700 2672l-46 19l9 -13m-9 13l16 2M5588 2696l28 44l-14 -7m14 7l0 -16M4485 2776l17 -25l-1 12m1 -12l-11 5M5065 2790l36 -30l-5 15m5 -15l-16 2M5124 2796l-4 -39l9 12m-9 -12l-6 14M6550 2785l13 -42l4 16m-4 -16l-12 11M3058 2830l-29 -45l14 7m-14 -7l0 16M6211 2835l-3 -30l7 9m-7 -9l-5 10M2612 2849l-9 30l-3 -11m3 11l9 -8M3493 2857l35 11l-13 3m13 -3l-9 -11M3816 2867l-45 -9l15 -5m-15 5l12 11M2632 2880l-4 54l-7 -14m7 14l9 -13M3207 2885l35 35l-16 -4m16 4l-4 -16M4000 2876l14 31l-11 -7m11 7l2 -13M4378 2914l-30 -21l14 1m-14 -1l5 13M5524 2868l-13 52l-5 -15m5 15l11 -11M4296 2971l-11 -51l11 12m-11 -12l-5 15M4259 2998l36 -31l-5 15m5 -15l-16 3M2656 3021l-29 14l7 -10m-7 10l12 1M5224 3010l-9 39l-5 -14m5 14l11 -11M5910 3016l-2 40l-7 -13m7 13l8 -13M2460 3074l-43 -18l16 -3m-16 3l9 13M3048 3152l4 -53l7 14m-7 -14l-9 13M3445 3110l-28 39l1 -16m-1 16l15 -6M3829 3121l32 -10l-8 10m8 -10l-13 -3M4409 3133l41 -26l-7 14m7 -14l-16 0M4771 3090l-35 42l2 -16m-2 16l15 -5M5445 3105l19 37l-14 -8m14 8l1 -16M6157 3094l39 37l-16 -3m16 3l-4 -15M6549 3146l26 -35l-1 16m1 -16l-15 6M6562 3178l28 -45l0 16m0 -16l-14 7M4547 3202l39 -8l-11 10m11 -10l-14 -5M4753 3191l-4 41l-7 -14m7 14l9 -12M3704 3275l13 34l-11 -9m11 9l3 -14M4964 3286l-50 -2l14 -8m-14 8l13 9M3278 3338l-35 -13l14 -3m-14 3l9 11M3596 3363l-38 -36l16 3m-16 -3l4 15M4712 3349l-37 -32l16 3m-16 -3l5 15M6179 3356l-26 -25l13 3m-13 -3l3 13M4345 3366l-9 32l-4 -12m4 12l9 -9M5953 3383l26 -17l-5 11m5 -11l-12 0M3042 3431l-38 2l12 -8m-12 8l13 7M3659 3427l-43 -19l16 -2m-16 2l9 13M5245 3445l13 -46l4 15m-4 -15l-12 11M5622 3439l-29 -33l15 5m-15 -5l3 16M6512 3420l18 28l-12 -5m12 5l0 -13M2417 3519l33 -3l-10 7m10 -7l-11 -5M5627 3501l-29 46l0 -16m0 16l14 -7M5686 3500l41 31l-16 -1m16 1l-6 -15M2678 3583l-39 18l9 -13m-9 13l16 2M5073 3585l-41 19l9 -13m-9 13l16 2M6030 3583l-13 36l-3 -14m3 14l11 -9M2058 3657l47 -25l-8 14m8 -14l-16 -1M4771 3634l-33 4l10 -8m-10 8l11 5M4858 3672l-19 -33l13 7m-13 -7l0 15M5543 3671l2 -46l8 14m-8 -14l-9 13M6539 3623l23 37l-14 -7m14 7l0 -16M4029 3684l-42 24l8 -14m-8 14l16 0M4221 3661l13 48l-12 -11m12 11l5 -15M5044 3692l31 -25l-5 14m5 -14l-15 2M3631 3718l41 17l-16 3m16 -3l-9 -13M4753 3713l26 47l-14 -8m14 8l1 -16M6011 3762l-11 -47l11 11m-11 -11l-5 15M4752 3770l43 33l-16 -2m16 2l-6 -15M6523 3750l28 45l-14 -7m14 7l0 -16M2698 3830l-33 -11l13 -3m-13 3l9 10M3460 3808l30 43l-15 -6m15 6l-1 -16M5072 3835l-54 -3l14 -8m-14 8l13 9M3448 3852l19 39l-13 -9m13 9l2 -16M5254 3845l-37 33l5 -15m-5 15l16 -3M6074 3903l-48 20l9 -13m-9 13l16 2M6012 4012l-38 -19l16 -1m-16 1l9 14M6064 4008l-51 -16l16 -4m-16 4l11 12M3075 4021l11 48l-11 -11m11 11l5 -15M6282 4033l44 5l-14 7m14 -7l-13 -10M6595 4030l-44 31l6 -15m-6 15l16 -1M2278 4070l-22 21l3 -11m-3 11l11 -2M3982 4111l-25 -46l14 8m-14 -8l-1 16M4173 4084l-42 27l7 -14m-7 14l16 0M4958 4071l-18 43l-3 -16m3 16l13 -9M5825 4073l-18 41l-2 -16m2 16l13 -9M6553 4067l-22 21l3 -11m-3 11l11 -3M4451 4180l-25 -28l14 4m-14 -4l2 14M3618 4229l39 -29l-6 15m6 -15l-16 2M3842 4197l18 35l-13 -8m13 8l1 -15M4174 4213l-1 31l-6 -10m6 10l6 -10M6044 4216l-42 -11l15 -5m-15 5l11 11M2188 4341l-19 25l1 -12m-1 12l11 -4M6537 4344l23 29l-13 -5m13 5l-2 -14M4646 4425l-14 -47l12 11m-12 -11l-4 15M4749 4421l-9 -51l11 12m-11 -12l-6 15M5409 4381l16 30l-11 -7m11 7l1 -13M4815 4464l-15 -52l12 11m-12 -11l-4 15M5991 4454l22 -26l-2 13m2 -13l-12 4M4102 4466l-12 32l-3 -13m3 13l10 -8M5289 4462l-15 33l-2 -14m2 14l11 -8M5439 4463l-35 37l3 -16m-3 16l15 -4M5837 4468l-1 37l-7 -12m7 12l8 -12M5996 4504l-25 -26l13 3m-13 -3l3 13M2598 4543l-2 -38l8 12m-8 -12l-7 13M5025 4549l6 -31l4 11m-4 -11l-8 9M5480 4514l32 27l-16 -3m16 3l-5 -15M5776 4550l-39 24l7 -14m-7 14l16 0M5956 4561l-44 16l10 -13m-10 13l16 3M6475 4558l28 22l-13 -1m13 1l-5 -13M2266 4638l37 -28l-6 15m6 -15l-16 2M4873 4601l-35 40l3 -16m-3 16l15 -5M5907 4665l-38 -5l13 -6m-13 6l11 9M5997 4680l-25 -31l14 5m-14 -5l2 15M6137 4677l-26 -27l14 4m-14 -4l3 14M6175 4633l-16 33l-1 -14m1 14l12 -7M4795 4702l37 2l-12 7m12 -7l-12 -8M3393 4727l-1 50l-8 -14m8 14l9 -14M4981 4757l-41 -29l16 1m-16 -1l6 15M4163 4773l14 45l-12 -11m12 11l4 -15M5668 4770l5 40l-9 -12m9 12l6 -14M5941 4781l-42 28l7 -15m-7 15l16 -1M2446 4833l-37 22l8 -14m-8 14l16 0M2860 4873l41 29l-16 -1m16 1l-6 -15M3044 4866l18 44l-13 -10m13 10l3 -16M4125 4926l35 10l-13 4m13 -4l-9 -10M5806 4934l-42 0l14 -8m-14 8l14 8M4042 4979l-39 -34l16 3m-16 -3l5 15M4222 4948l-10 39l-5 -15m5 15l11 -11M2082 5006l55 -6l-13 10m13 -10l-14 -7M3277 4996l-15 29l-1 -12m1 12l11 -6M4779 5042l13 -42l4 16m-4 -16l-12 10M5358 5003l31 3l-10 5m10 -5l-9 -7M5505 5026l47 -10l-12 11m12 -11l-15 -5M3207 5036l-13 44l-4 -15m4 15l12 -11M3648 5034l-6 30l-4 -11m4 11l8 -9M4359 5052l-27 15l6 -10m-6 10l12 1M6008 5171l16 26l-10 -5m10 5l0 -12M2322 5239l6 -31l4 11m-4 -11l-8 9M6130 5235l10 -29l3 12m-3 -12l-9 7M2550 5261l32 9l-12 4m12 -4l-9 -9M4910 5292l35 -41l-3 16m3 -16l-15 5M5286 5337l47 -28l-7 14m7 -14l-16 0M4697 5346l-35 17l8 -12m-8 12l15 2M2353 5427l21 -46l2 16m-2 -16l-13 9M4866 5421l-40 -16l16 -3m-16 3l10 13M5140 5417l-43 -12l15 -5m-15 5l11 12M5927 5411l-52 13l11 -11m-11 11l15 5M5135 5448l31 -1l-10 6m10 -6l-10 -6M2339 5512l-25 -25l13 3m-13 -3l3 13M2920 5570l-9 32l-3 -12m3 12l9 -9M5041 5588l-29 -10l11 -3m-11 3l8 9M5329 5588l37 -11l-10 11m10 -11l-14 -4M4764 5648l25 -25l-3 13m3 -13l-13 3M6032 5615l-5 40l-6 -14m6 14l9 -12M3554 5699l1 -46l8 14m-8 -14l-9 13M5208 5667l42 17l-16 3m16 -3l-10 -13M6400 5680l43 -3l-13 9m13 -9l-14 -8M2804 5744l-36 23l7 -14m-7 14l16 0M5210 5741l7 53l-10 -13m10 13l7 -15M5886 5774l-43 -32l16 1m-16 -1l6 15M4030 5820l20 -32l0 14m0 -14l-13 6M4716 5782l32 29l-16 -3m16 3l-4 -15M4973 5788l-4 42l-7 -14m7 14l10 -13M3886 5853l-17 -30l11 6m-11 -6l-1 13M4280 5835l36 16l-15 2m15 -2l-8 -12M4782 5847l-29 16l6 -11m-6 11l13 1M2883 5901l25 -29l-2 15m2 -15l-14 5M4016 5871l-31 30l4 -15m-4 15l16 -3M2685 5918l28 12l-12 2m12 -2l-7 -10M5524 5914l27 31l-15 -5m15 5l-3 -15M5781 5953l-33 -25l16 2m-16 -2l6 15M6207 5923l-25 17l5 -11m-5 11l11 -1M2833 5978l-41 -6l14 -6m-14 6l12 10M5110 5994l-24 -49l14 9m-14 -9l-1 16M6213 5962l9 31l-9 -8m9 8l3 -12M6406 5966l-11 42l-5 -15m5 15l12 -11M3092 6005l23 28l-13 -5m13 5l-2 -14M4419 6003l39 21l-16 1m16 -1l-8 -14M6004 6050l-15 -43l12 10m-12 -10l-3 16M2534 6043l-29 30l3 -15m-3 15l15 -4M4372 6105l-34 6l10 -9m-10 9l12 5M6386 6111l-35 18l8 -13m-8 13l15 1M3672 6140l31 7l-11 4m11 -4l-8 -8M4573 6171l-21 -37l14 8m-14 -8l-1 16M4973 6181l6 -49l7 14m-7 -14l-10 13M3014 6236l-30 -3l10 -5m-10 5l9 7M3392 6244l29 -23l-5 13m5 -13l-14 2M3544 6298l32 -11l-8 10m8 -10l-13 -3M5353 6313l16 -42l3 16m-3 -16l-13 10M5608 6263l-23 34l1 -15m-1 15l14 -6M2568 6299l10 43l-11 -11m11 11l5 -15"/>
<path stroke="#e68900" d="M2077 2456l-27 -9l10 -2m-10 2l7 8M3214 2478l7 -32l4 12m-4 -12l-9 9M3940 2463l20 -4M5225 2442l27 25l-14 -3m14 3l-4 -13M6327 2472l24 -7M3091 2490l3 29l-7 -9m7 9l5 -10M3335 2510l15 -31l1 13m-1 -13l-11 7M3386 2529l6 -53l7 15m-7 -15l-10 13M4246 2523l3 -52l8 14m-8 -14l-9 13M4859 2514l-29 -13l12 -1m-12 1l7 10M5173 2510l9 -31l3 12m-3 -12l-9 8M5223 2484l-11 24M6332 2487l-19 30l0 -13m0 13l12 -6M2283 2527l9 18M3174 2527l13 38l-12 -10m12 10l3 -15M3245 2539l36 1l-12 7m12 -7l-12 -7M3436 2556l12 -35l3 14m-3 -14l-11 9M3683 2525l7 27l-7 -7m7 7l3 -10M4192 2553l-17 -11M4268 2544l20 6M4615 2550l-21 11M4873 2530l2 29l-6 -9m6 9l5 -10M5132 2538l-37 0l12 -8m-12 8l12 7M5449 2556l-27 -11l11 -2m-11 2l7 9M2987 2588l-30 15l7 -11m-7 11l13 1M3691 2600l31 -10l-8 9m8 -9l-12 -3M5119 2576l14 22l-9 -4m9 4l0 -10M5427 2581l-32 5l10 -8m-10 8l11 5M5525 2597l20 0M6407 2572l8 25l-8 -7m8 7l2 -10M2887 2632l26 -11l-6 9m6 -9l-11 -2M4254 2623l-33 10l9 -10m-9 10l13 3M6304 2647l6 -18M6437 2632l16 -9M6590 2649l-13 -16M3105 2669l2 19M3349 2664l-14 28l-1 -12m1 12l10 -6M3476 2651l-3 39l-7 -13m7 13l9 -12M4118 2698l-8 -30l8 8m-8 -8l-3 11M5581 2659l23 45l-14 -8m14 8l1 -16M6077 2690l27 -2l-8 6m8 -6l-9 -5M3048 2742l-14 -26l10 5m-10 -5l0 11M4091 2729l24 -5M4227 2710l25 21l-12 -2m12 2l-4 -12M4732 2707l15 13M4964 2742l-16 -28l11 6m-11 -6l-1 12M5113 2728l-35 -15l14 -2m-14 2l8 12M3745 2774l-7 -25l7 7m-7 -7l-3 10M2534 2814l-9 -21M3283 2825l-28 -19l13 1m-13 -1l5 12M4970 2813l-18 11M5795 2826l18 -20l-2 10m2 -10l-10 3M3012 2843l0 19M4870 2851l-48 13l11 -12m-11 12l15 5M4946 2846l-2 23M5029 2856l18 10M5185 2861l-31 -14l13 -2m-13 2l7 11M5507 2873l-25 -18l12 1m-12 -1l5 11M6303 2842l34 16l-14 2m14 -2l-8 -12M4546 2889l33 7l-12 4m12 -4l-9 -9M5920 2908l7 -24M2339 2944l-26 -23l13 2m-13 -2l4 13M2864 2953l17 -21l-2 10m2 -10l-10 3M3077 2953l-23 0M4090 2933l-27 8l7 -8m-7 8l10 3M4554 2949l-39 -4l14 -7m-14 7l12 9M5381 2959l-31 -15l13 -1m-13 1l7 11M2450 2988l-14 16M2490 2975l-18 8M2725 3002l-15 -30l11 7m-11 -7l-1 13M5445 2982l34 -7l-10 9m10 -9l-13 -4M5651 2977l1 24M2713 3030l23 -20l-3 11m3 -11l-11 2M2929 3051l-28 -37l15 6m-15 -6l2 16M5132 3015l0 33l-6 -11m6 11l7 -11M5543 3019l9 19M5945 3005l21 30l-13 -6m13 6l-1 -14M6328 3051l-25 -40l14 7m-14 -7l0 16M2483 3091l15 -21M4868 3072l5 18M6061 3096l25 -25l-3 13m3 -13l-13 3M6234 3102l37 -35l-4 15m4 -15l-16 3M3023 3099l-36 20l8 -14m-8 14l16 1M3517 3132l6 -44l6 15m-6 -15l-10 12M2089 3155l-42 13l11 -12m-11 12l15 4M2791 3168l29 -17l-6 11m6 -11l-13 0M3523 3172l17 -11M3787 3157l39 3l-13 7m13 -7l-12 -9M4816 3152l24 4M5107 3175l1 -25M5272 3154l24 -1M2119 3190l46 14l-15 4m15 -4l-11 -12M2944 3202l20 -11M3384 3190l4 40l-9 -12m9 12l7 -14M3596 3198l26 0M4079 3214l-6 -28l8 8m-8 -8l-4 10M5484 3194l23 8M5818 3204l16 18M5970 3219l-16 -14M6381 3188l-31 21l6 -13m-6 13l14 -1M2477 3242l26 -5l-8 7m8 -7l-9 -4M3607 3257l-35 7l10 -9m-10 9l13 5M4219 3236l8 20M6268 3243l-26 7l7 -8m-7 8l10 3M6522 3261l27 -10l-7 9m7 -9l-11 -2M2377 3287l-19 6M4832 3300l18 -30l0 13m0 -13l-12 6M5400 3306l-4 -33l8 10m-8 -10l-5 11M5558 3315l-19 -41l13 9m-13 -9l-2 16M6137 3291l14 11M6270 3274l15 35l-12 -8m12 8l2 -14M2610 3339l22 12M3841 3329l41 27l-16 -1m16 1l-7 -15M4368 3358l14 -24l0 11m0 -11l-9 5M5832 3355l10 -37l4 14m-4 -14l-10 10M4316 3370l-23 45l-1 -16m1 16l14 -8M4439 3362l-23 22l3 -12m-3 12l12 -3M2377 3420l28 25l-14 -3m14 3l-4 -14M3304 3439l15 -35l2 14m-2 -14l-12 8M4270 3412l-10 21M4592 3430l2 -21M5420 3413l-7 18M3434 3469l0 23M5681 3479l15 -33l2 14m-2 -14l-11 8M2222 3523l-33 -33l16 4m-16 -4l4 16M2363 3520l-35 -9l13 -4m-13 4l10 10M3685 3505l-19 3M3918 3490l1 29l-6 -9m6 9l6 -10M4017 3515l-14 17M4249 3514l32 -5l-9 8m9 -8l-11 -5M6210 3503l-26 9l7 -8m-7 8l10 2M2197 3577l-11 -18M2491 3563l21 -26l-2 12m2 -12l-12 4M2538 3545l21 13M2596 3547l3 19M3057 3553l16 19M3152 3568l-23 -21l11 2m-11 -2l3 11M3735 3552l20 5M5068 3570l10 -36l4 14m-4 -14l-10 10M2150 3589l13 24l-9 -5m9 5l1 -10M2498 3614l-10 -16M2838 3599l8 20M2930 3612l19 -11M3640 3617l6 -32l5 12m-5 -12l-8 9M4081 3582l35 33l-16 -3m16 3l-4 -15M4831 3591l-12 28l-2 -11m2 11l9 -7M4908 3600l22 12M5237 3609l14 -14M6248 3579l2 53l-9 -13m9 13l8 -14M2817 3625l7 30l-8 -8m8 8l4 -11M5039 3632l12 36l-11 -9m11 9l3 -14M5059 3662l40 -15l-10 13m10 -13l-16 -3M5116 3648l31 -17l-7 11m7 -11l-13 -1M5233 3645l-26 8l7 -8m-7 8l10 3M2431 3694l12 -28l2 11m-2 -11l-9 7M3790 3694l-32 -8l12 -4m-12 4l9 9M4053 3660l-1 41l-8 -14m8 14l9 -13M5368 3695l17 -14M5655 3698l20 -10M6024 3709l-7 -22M3290 3744l5 -28l4 10m-4 -10l-7 8M3699 3721l-2 21M3928 3726l10 35l-10 -9m10 9l4 -13M4935 3708l7 36l-9 -10m9 10l5 -13M5356 3721l3 32l-7 -10m7 10l5 -11M2057 3785l20 6M2737 3787l20 -12M3362 3761l-19 15M4751 3776l-21 9M5115 3792l-16 -25l10 5m-10 -5l0 11M5754 3802l-6 -27l7 8m-7 -8l-3 10M5814 3775l31 9l-12 3m12 -3l-8 -9M2598 3834l17 -11M2787 3816l-17 14M5598 3815l-18 -3M2134 3865l-25 -7l10 -3m-10 3l7 7M2220 3854l-23 4M2782 3876l23 -7M4229 3840l-1 52l-8 -14m8 14l9 -13M6494 3873l-18 -27l11 5m-11 -5l1 12M2310 3914l22 13M3905 3907l-28 4l8 -7m-8 7l10 4M4247 3917l27 -3l-8 6m8 -6l-9 -4M5621 3911l24 -21l-4 12m4 -12l-12 2M2809 3953l-22 7M3276 3967l-14 -14M3408 3951l3 18M3611 3945l34 5l-12 5m12 -5l-10 -8M4219 3964l3 -21M4318 3941l-3 32l-5 -11m5 11l7 -10M4971 3957l-18 -7M5281 3971l8 -22M5750 3970l8 -18M6197 3927l31 36l-15 -5m15 5l-2 -16M6437 3947l-5 27l-4 -10m4 10l7 -8M2732 4005l16 -12M3613 3995l-18 -3M3984 3982l7 24M4170 4016l1 -29l5 10m-5 -10l-6 9M4255 3986l-15 20M5760 4007l8 -24M6096 4010l3 -21M6275 4007l24 -7M6307 4004l16 -11M3235 4061l-21 -19l11 2m-11 -2l3 10M3437 4035l26 5l-9 3m9 -3l-7 -7M4129 4042l17 -6M4185 4059l-21 -14M4802 4039l-19 -11M5398 4059l-19 -14M6351 4052l5 -36l6 12m-6 -12l-9 11M4216 4108l-16 -30l11 7m-11 -7l-1 13M5580 4106l17 -26l0 12m0 -12l-11 5M5971 4076l-41 26l7 -14m-7 14l16 0M6346 4087l36 6l-13 5m13 -5l-11 -9M2341 4134l9 -16M3596 4150l-3 -34l8 10m-8 -10l-6 12M4488 4134l-47 5l13 -10m-13 10l14 7M5155 4153l-22 -30l13 5m-13 -5l1 14M5336 4139l-26 -3l9 -4m-9 4l8 6M5739 4115l22 22l-12 -3m12 3l-3 -12M3129 4167l27 17l-12 0m12 0l-5 -11M5829 4172l-32 1l10 -7m-10 7l10 6M6188 4154l-15 31l-1 -13m1 13l11 -7M2805 4208l17 25l-10 -5m10 5l0 -11M4377 4213l-26 33l2 -16m-2 16l15 -5M4498 4191l-3 48l-8 -14m8 14l9 -13M4743 4226l-10 -36l10 10m-10 -10l-4 14M2082 4246l12 39l-12 -10m12 10l4 -15M3155 4267l-11 -18M4490 4239l-14 45l-4 -16m4 16l12 -10M6172 4261l23 -15l-4 10m4 -10l-11 0M6353 4260l22 -6M2307 4296l-36 2l11 -8m-11 8l12 6M2892 4302l19 -8M4397 4299l16 14M6228 4303l-47 9l12 -11m-12 11l15 6M3052 4358l-7 -25l7 7m-7 -7l-3 10M5298 4362l14 -13M5616 4343l13 24l-9 -5m9 5l1 -10M6051 4367l-9 -25l8 6m-8 -6l-2 10M2436 4386l9 34l-10 -9m10 9l4 -13M4187 4380l-3 28l-5 -10m5 10l6 -9M4372 4409l2 -19M5079 4419l-24 -37l14 7m-14 -7l0 16M5737 4414l21 -42l1 16m-1 -16l-14 9M3346 4482l18 -16M4271 4497l25 -27l-3 14m3 -14l-13 4M4684 4488l32 -9l-9 9m9 -9l-12 -4M6120 4469l-2 24M2351 4523l19 4M2755 4544l-24 -13l10 0m-10 0l5 9M3854 4510l-22 24l2 -12m-2 12l12 -3M4085 4534l-43 -26l16 0m-16 0l7 14M4546 4520l-26 10l7 -8m-7 8l10 2M4644 4549l-25 -30l14 5m-14 -5l2 15M5918 4542l-18 -27l11 5m-11 -5l0 12M6166 4513l21 20l-11 -2m11 2l-3 -11M3162 4573l6 -20M3375 4554l36 36l-16 -4m16 4l-4 -16M3806 4579l0 -31l6 10m-6 -10l-6 10M4189 4582l-19 -4M4616 4574l-21 -2M6171 4558l-2 19M2990 4606l-37 6l11 -9m-11 9l13 5M3310 4607l28 12l-12 2m12 -2l-7 -9M3575 4602l-33 5l10 -8m-10 8l12 5M3842 4621l-19 3M4971 4629l22 -19l-3 11m3 -11l-11 2M5206 4609l32 -1l-10 7m10 -7l-10 -6M5417 4617l-18 -21l10 3m-10 -3l2 10M5948 4635l17 -25l-1 12m1 -12l-11 5M2248 4647l-13 34l-3 -14m3 14l11 -9M3176 4646l2 20M3837 4668l-25 1M4384 4669l-19 -33l13 7m-13 -7l0 14M5639 4673l32 -7l-9 9m9 -9l-12 -4M6289 4667l1 -20M6392 4669l11 -33l3 13m-3 -13l-10 9M6509 4662l42 1l-14 8m14 -8l-13 -9M4940 4711l7 -20M6268 4729l8 -35l4 13m-4 -13l-10 10M6473 4688l-28 13l7 -10m-7 10l12 1M6500 4689l20 30l-13 -6m13 6l0 -14M2987 4748l17 -19M3040 4774l-15 -33l11 8m-11 -8l-2 14M4298 4729l28 15l-12 1m12 -1l-6 -11M4702 4745l-18 10M5012 4761l-11 -40l12 11m-12 -11l-4 15M5484 4771l-22 -26l12 4m-12 -4l2 13M5657 4751l16 -18M5999 4755l-35 -14l14 -2m-14 2l9 12M3201 4807l-23 -22l12 3m-12 -3l3 12M4117 4765l-11 32l-3 -13m3 13l10 -8M4579 4776l-18 28l0 -13m0 13l11 -6M5217 4785l1 19M3946 4831l22 30l-13 -6m13 6l-1 -14M4360 4834l0 21M4522 4834l-41 6l12 -10m-12 10l14 6M4983 4857l-13 -27l9 6m-9 -6l-1 11M5787 4845l26 -9l-7 8m7 -8l-10 -2M3811 4883l-24 -29l14 5m-14 -5l2 14M4059 4884l22 -23l-2 12m2 -12l-12 3M4828 4882l31 -1l-10 6m10 -6l-10 -6M5083 4852l3 44l-9 -13m9 13l8 -14M5366 4865l-35 7l10 -9m-10 9l13 5M6545 4885l3 -29l5 10m-5 -10l-7 9M4743 4904l-13 29l-1 -12m1 12l10 -7M5160 4934l-19 -21l10 3m-10 -3l2 11M2122 4974l29 -12l-7 10m7 -10l-12 -2M2862 4965l37 6l-13 6m13 -6l-11 -9M3433 4986l1 -24M3523 4973l-10 -29l9 7m-9 -7l-2 11M3677 4972l-47 -19l16 -3m-16 3l10 13M4451 4974l-30 -13l12 -2m-12 2l7 10M6413 4973l13 -23l1 10m-1 -10l-9 5M2487 4992l-3 24M3550 5023l-1 -33l7 10m-7 -10l-6 11M3780 5009l-34 -14l14 -2m-14 2l8 11M3922 5020l-27 -9l10 -2m-10 2l7 8M4956 5019l11 -20M5406 5016l18 -5M5551 5027l9 -35l4 13m-4 -13l-10 10M6395 5001l-20 20l3 -10m-3 10l10 -2M3241 5047l-10 23M3847 5028l-4 35l-6 -12m6 12l8 -11M4685 5048l-37 7l11 -10m-11 10l13 5M5963 5060l-8 -33l9 9m-9 -9l-4 12M6178 5052l21 27l-12 -5m12 5l-1 -13M3325 5117l-28 -16l12 0m-12 0l6 11M3454 5120l5 -34l5 12m-5 -12l-8 10M3984 5096l21 -2M4748 5099l-35 -8l13 -4m-13 4l10 10M5278 5096l20 18l-10 -2m10 2l-3 -10M2639 5164l1 -23M3353 5148l-19 -16M3689 5149l18 -24l-1 12m1 -12l-11 4M3723 5146l27 -17l-6 11m6 -11l-12 0M3975 5132l1 37l-7 -12m7 12l7 -12M4757 5165l-11 -35l10 9m-10 -9l-3 13M5231 5134l-31 17l7 -11m-7 11l13 1M2343 5191l23 12M3446 5161l-7 45l-6 -15m6 15l11 -12M3962 5183l-18 29l0 -13m0 13l12 -6M5237 5186l-10 20M5582 5187l-30 15l7 -11m-7 11l13 1M6451 5170l-5 35l-5 -12m5 12l8 -10M2072 5227l27 26l-14 -3m14 3l-4 -14M4547 5218l-31 14l7 -11m-7 11l13 2M4566 5243l25 -20l-4 11m4 -11l-12 1M6011 5221l-19 1M2168 5267l-31 -4l11 -5m-11 5l9 7M2697 5283l37 -15l-9 12m9 -12l-15 -3M3747 5263l26 9l-10 2m10 -2l-7 -8M4629 5289l14 -21M2483 5327l28 -17l-6 11m6 -11l-12 0M3172 5317l-33 9l9 -10m-9 10l12 3M4757 5307l-19 4M5083 5318l-26 -8l10 -3m-10 3l7 8M5214 5339l-10 -20M5429 5321l25 -6M6060 5317l-20 15M2395 5378l6 -28l4 10m-4 -10l-8 8M2589 5346l40 37l-16 -3m16 3l-4 -15M3496 5369l-11 -33l10 9m-10 -9l-3 13M4370 5370l15 -11M4465 5376l0 -26l5 9m-5 -9l-5 8M5153 5344l-1 20M6214 5357l-28 1l9 -6m-9 6l9 5M6342 5341l-2 34l-6 -11m6 11l7 -11M2866 5412l-7 -29l8 8m-8 -8l-3 11M4220 5401l-28 -6l10 -4m-10 4l8 7M2423 5452l24 14l-11 0m11 0l-5 -9M3350 5459l-5 -19M4919 5438l-12 18M5510 5445l7 22M5715 5443l-12 32l-3 -13m3 13l10 -8M5808 5442l-32 2l10 -7m-10 7l11 6M2178 5507l23 -29l-2 14m2 -14l-13 5M3377 5515l9 -21M3752 5479l-12 22M4726 5469l-17 30l0 -13m0 13l11 -6M4881 5488l27 1l-9 5m9 -5l-9 -6M5986 5504l-46 -3l14 -7m-14 7l13 9M2043 5525l29 19l-13 0m13 0l-6 -12M4289 5529l-6 31l-4 -11m4 11l8 -9M4297 5541l37 5l-13 6m13 -6l-11 -9M5126 5522l-22 32l1 -15m-1 15l13 -6M5470 5539l-4 -20M6429 5525l1 38l-8 -12m8 12l7 -12M6536 5552l3 -31l5 11m-5 -11l-7 10M2436 5582l27 23l-13 -2m13 2l-4 -13M2583 5570l27 15l-12 1m12 -1l-6 -10M2732 5592l-17 -9M4168 5583l-11 -20M4664 5578l0 25M5275 5605l-24 -48l14 8m-14 -8l-1 16M5795 5589l-27 -24l13 2m-13 -2l4 13M3869 5616l-2 37l-7 -13m7 13l8 -12M4044 5606l1 21M5157 5628l-31 -8l12 -4m-12 4l8 9M5203 5617l-14 22l0 -10m0 10l9 -5M2641 5670l18 11M2942 5687l-44 -28l16 0m-16 0l7 14M3810 5691l42 -30l-6 15m6 -15l-16 1M4841 5672l22 -3M5159 5673l40 5l-14 6m14 -6l-12 -10M3295 5704l20 8M3486 5735l17 -31l1 14m-1 -14l-12 7M3956 5726l4 -20M4125 5719l27 -15l-6 10m6 -10l-12 0M3283 5777l-13 -22M2058 5816l34 -9l-9 10m9 -10l-13 -4M2999 5821l-17 -20l10 3m-10 -3l2 10M4574 5785l-51 15l11 -12m-11 12l15 4M4663 5796l-17 32l-1 -14m1 14l12 -7M4870 5797l-5 24M4922 5789l-16 42l-3 -16m3 16l13 -10M5200 5780l1 32l-7 -10m7 10l6 -11M6327 5811l-36 -4l12 -6m-12 6l11 8M2907 5864l35 -22l-7 14m7 -14l-16 0M6464 5850l-21 -15M2136 5882l27 13l-11 1m11 -1l-6 -10M2402 5884l-22 -9M3505 5895l-22 -6M5110 5875l7 30l-8 -8m8 8l4 -11M5877 5904l26 -8l-7 8m7 -8l-10 -3M6302 5865l-12 36l-3 -14m3 14l11 -9M2305 5935l-44 3l13 -9m-13 9l14 7M4387 5912l2 31l-7 -10m7 10l6 -10M4998 5927l2 30l-7 -9m7 9l5 -10M6141 5934l15 21M6231 5918l-6 19M2284 5992l30 -15l-7 11m7 -11l-13 -1M2846 5995l-9 -24M5393 5973l-34 1l11 -7m-11 7l11 6M5482 5987l-34 -11l13 -3m-13 3l9 10M6581 5979l-20 -16l10 1m-10 -1l3 9M2298 6011l-26 10l6 -8m-6 8l10 2M2674 6014l32 6l-11 4m11 -4l-9 -8M4534 6008l-26 9l7 -8m-7 8l10 2M5532 6039l35 -24l-7 15m7 -15l-16 1M6115 6018l-35 4l11 -8m-11 8l12 6M2986 6054l18 30l-12 -6m12 6l0 -13M4476 6071l-13 -14M4666 6084l-25 -15l11 0m-11 0l5 10M5754 6059l-17 24l1 -11m-1 11l10 -4M6043 6059l-37 6l11 -9m-11 9l13 5M6525 6044l14 24l-9 -5m9 5l0 -11M2681 6115l17 -30l0 13m0 -13l-12 6M4581 6123l-32 -23l15 1m-15 -1l6 14M4953 6111l-10 -17M2838 6155l26 -15l-6 10m6 -10l-11 0M4037 6164l16 -29l1 12m-1 -12l-11 6M5449 6161l-33 -8l12 -4m-12 4l9 9M2236 6199l-20 21l2 -11m-2 11l11 -3M2987 6195l-34 5l10 -8m-10 8l12 5M3319 6194l18 -6M5366 6201l-23 2M6514 6193l-25 15l5 -10m-5 10l11 0M4958 6241l7 21M2092 6266l10 34l-10 -9m10 9l4 -13M2572 6286l35 -11l-9 11m9 -11l-14 -3M2708 6290l-24 -4M2811 6269l18 23l-10 -4m10 4l-1 -11M2985 6295l-34 2l11 -7m-11 7l11 6M3507 6280l31 -2l-9 7m9 -7l-10 -5M4164 6287l-7 -21M4356 6276l48 23l-16 2m16 -2l-9 -13M2312 6329l-28 -13l12 -1m-12 1l6 10M2759 6339l-3 -23M3947 6318l19 30l-12 -6m12 6l0 -14M4461 6330l-24 18l4 -11m-4 11l11 -1M4737 6352l15 -34l2 14m-2 -14l-12 8M4856 6340l19 1M5994 6326l-44 27l7 -14m-7 14l16 0M6075 6345l-27 -19l12 1m-12 -1l5 11"/>
<path stroke="#ea9900" d="M2830 2463l19 7M3274 2444l-21 16l4 -9m-4 9l10 -1M3382 2470l-37 -2l13 -7m-13 7l12 8M3723 2476l11 -18M3805 2445l7 36l-10 -10m10 10l5 -13M3980 2458l29 -18l-6 12m6 -12l-13 0M4236 2463l0 -18M6563 2474l15 -10M2727 2516l7 -35l5 13m-5 -13l-9 10M3013 2505l10 -19M3195 2503l-21 6M3570 2512l-31 -17l14 -1m-14 1l7 12M4587 2504l-19 11M4814 2507l-6 -23M5051 2511l-18 -10M6132 2519l11 -16M2543 2533l-22 13M2793 2533l3 30l-7 -9m7 9l5 -10M3903 2566l-9 -33l9 9m-9 -9l-4 12M4370 2540l-20 17l3 -10m-3 10l10 -1M4633 2560l23 -7M5711 2533l-3 31l-5 -11m5 11l7 -9M5856 2528l-21 30l1 -14m-1 14l13 -5M6067 2553l0 -26M6146 2530l20 13M6596 2550l-32 -18l14 -1m-14 1l7 12M2367 2608l-3 -34l8 10m-8 -10l-6 12M2806 2612l21 -30l-1 14m1 -14l-13 6M3346 2584l-29 -5l10 -4m-10 4l8 7M3622 2572l-32 16l7 -12m-7 12l14 1M3851 2567l-12 33l-3 -13m3 13l11 -8M4056 2581l19 -2M4514 2602l15 -32l2 13m-2 -13l-11 7M5278 2568l-4 33l-5 -11m5 11l8 -10M6045 2578l5 30l-8 -9m8 9l4 -11M6338 2591l-20 -15M6562 2605l-32 -8l12 -4m-12 4l9 9M2820 2625l-14 12M3459 2635l-5 -19M4643 2641l-14 -13M4889 2634l-28 -7l11 -3m-11 3l8 8M5616 2629l-4 21M5659 2621l5 29l-7 -8m7 8l4 -10M5903 2635l-22 -1M6216 2637l-21 4M6348 2643l-23 -28l13 4m-13 -4l2 14M6521 2634l-2 -18M2363 2688l22 3M3064 2679l-25 -6M3655 2654l6 37l-9 -11m9 11l6 -13M4150 2676l7 25l-7 -7m7 7l3 -10M4294 2676l12 25l-9 -6m9 6l1 -10M4773 2690l-19 -8M4861 2683l-11 -28l9 7m-9 -7l-2 11M5209 2691l3 -27l4 9m-4 -9l-6 8M5613 2665l29 21l-14 -1m14 1l-5 -13M5989 2678l23 18l-11 -1m11 1l-4 -11M6312 2678l25 13l-11 1m11 -1l-5 -9M6435 2678l-27 -2l9 -5m-9 5l8 6M2991 2740l9 -16M3180 2700l-6 36l-5 -13m5 13l9 -11M3196 2740l25 -16l-5 10m5 -10l-11 0M5666 2711l-24 10M5753 2734l-18 -15M5791 2722l-8 17M6181 2721l-22 -9M6530 2738l14 -28l1 12m-1 -12l-10 6M2843 2753l-19 20l2 -10m-2 10l10 -3M2849 2760l28 21l-13 -1m13 1l-5 -12M3380 2766l17 -20l-2 10m2 -10l-10 3M3910 2766l37 -2l-11 8m11 -8l-12 -7M5185 2780l-33 -15l14 -2m-14 2l8 11M6051 2765l-25 3M6217 2788l6 -27l3 10m-3 -10l-7 7M2068 2817l-22 -2M2128 2820l-15 -21M2947 2814l-27 -23l13 2m-13 -2l4 13M3636 2817l3 -21M5250 2828l-1 -36l7 11m-7 -11l-7 12M5583 2806l-28 9l7 -8m-7 8l11 3M5847 2827l7 -18M2659 2860l-18 -4M2886 2836l-6 18M3070 2868l-17 -15M3221 2848l23 1M3847 2848l4 33l-8 -10m8 10l5 -12M4178 2860l-29 -6l11 -4m-11 4l8 8M5074 2847l2 29l-6 -9m6 9l5 -10M5908 2862l23 -25l-3 12m3 -12l-12 3M6146 2877l-13 -33l11 8m-11 -8l-2 13M6545 2867l28 -18l-6 11m6 -11l-13 0M2079 2893l-30 -6l11 -4m-11 4l8 8M2106 2890l13 16M2262 2881l-19 26l1 -12m-1 12l11 -5M2768 2904l-34 -5l12 -5m-12 5l10 8M3167 2908l24 -8M4699 2908l-11 -32l10 8m-10 -8l-3 12M5293 2894l-25 18l5 -11m-5 11l12 -1M3563 2959l-6 -31l8 9m-8 -9l-4 11M5083 2948l11 -16M5217 2926l-18 27l1 -12m-1 12l11 -5M5468 2937l33 15l-14 2m14 -2l-8 -11M5917 2958l3 -20M2667 2984l-20 20l2 -11m-2 11l10 -3M2834 2986l18 -1M2996 2986l-28 11l7 -9m-7 9l11 2M3040 3008l9 -25l2 10m-2 -10l-8 6M3625 2996l23 -15l-4 9m4 -9l-10 0M3932 2999l25 -22l-4 12m4 -12l-13 2M4187 3013l-12 -32l10 8m-10 -8l-3 13M4691 2987l-24 -5M4870 2994l-8 -32l9 9m-9 -9l-4 12M5752 2968l3 31l-7 -10m7 10l5 -11M6178 2991l-23 -14l10 0m-10 0l5 9M2322 3023l-15 25l0 -11m0 11l10 -5M2846 3034l-36 -10l14 -4m-14 4l10 11M4036 3024l-36 7l10 -9m-10 9l13 5M4341 3036l12 -28l2 12m-2 -12l-10 7M4900 3023l-19 22l2 -11m-2 11l10 -3M5175 3005l9 34l-10 -9m10 9l4 -13M5306 3048l13 -21M6082 3030l19 -5M6467 3020l-1 25M2113 3073l1 18M3338 3070l23 3M3493 3054l6 31l-8 -9m8 9l4 -11M4071 3066l33 6l-12 5m12 -5l-10 -9M4224 3085l20 -3M4315 3057l3 20M4429 3075l-22 6M4599 3096l18 -31l0 14m0 -14l-12 6M4649 3061l-13 23l0 -10m0 10l9 -5M5181 3072l22 0M5255 3066l-33 1l11 -7m-11 7l11 6M6519 3065l8 27l-8 -7m8 7l3 -10M2396 3109l28 3l-10 5m10 -5l-9 -6M2923 3128l-9 -22M3204 3111l-16 15M3367 3116l33 1l-11 6m11 -6l-11 -7M3614 3103l6 37l-9 -11m9 11l5 -13M3863 3130l24 -20l-4 11m4 -11l-12 2M4026 3140l-13 -22M4274 3139l-30 -20l14 0m-14 0l6 12M4902 3140l-1 -24M5374 3113l-24 13l5 -9m-5 9l10 1M5574 3107l10 27l-9 -7m9 7l2 -11M6139 3119l16 11M6224 3125l-1 -24M6518 3129l-33 -14l13 -2m-13 2l8 11M2734 3143l-31 22l6 -13m-6 13l14 -1M2887 3167l3 -30l5 10m-5 -10l-7 9M2952 3177l-29 -21l14 1m-14 -1l5 13M3005 3159l-29 -3l10 -5m-10 5l9 7M3851 3157l20 -4M4482 3153l37 -3l-11 8m11 -8l-13 -6M5192 3179l10 -24M5798 3184l-4 -23M6149 3152l10 19M6458 3150l-32 7l9 -8m-9 8l12 4M2547 3182l-2 32l-6 -11m6 11l7 -10M2597 3202l18 3M2702 3188l-20 17l3 -9m-3 9l10 -2M2984 3218l32 -13l-8 11m8 -11l-13 -2M3867 3226l23 -21l-3 11m3 -11l-12 2M4255 3222l15 -17M4477 3212l21 -16l-4 9m4 -9l-10 1M6165 3212l-35 -12l14 -3m-14 3l9 11M6548 3208l23 0M2069 3257l13 -28l1 12m-1 -12l-10 6M2311 3251l-18 -18M2810 3242l-9 20M3287 3242l-35 -4l12 -6m-12 6l11 8M4139 3256l-23 -9M5294 3243l-18 29l0 -13m0 13l11 -6M6340 3260l3 -34l6 12m-6 -12l-8 11M2419 3285l-16 9M2552 3301l-10 -15M3178 3304l21 -12M4399 3305l-19 -7M5125 3308l11 -32l3 13m-3 -13l-10 8M5588 3309l1 -32l6 11m-6 -11l-7 10M5824 3273l7 36l-9 -10m9 10l5 -13M6304 3303l21 -1M6406 3301l8 -16M6449 3299l17 11M6548 3293l24 -2M2654 3335l20 -8M2955 3329l-32 1l10 -7m-10 7l11 6M3525 3355l21 -24l-2 12m2 -12l-12 4M3735 3347l-37 4l11 -9m-11 9l13 6M3996 3324l-9 19M4429 3342l-23 -8M5345 3339l-4 -20M5724 3340l-36 -8l13 -5m-13 5l10 10M5933 3340l-12 -24l9 5m-9 -5l-1 10M2886 3388l-17 -13M2926 3367l-20 25l2 -12m-2 12l12 -4M3169 3370l-20 13M3938 3376l-27 -4l10 -4m-10 4l8 7M4532 3392l-28 -10l11 -2m-11 2l7 9M4954 3397l-7 -19M4975 3382l32 9l-12 4m12 -4l-9 -9M5363 3402l-25 -23l13 3m-13 -3l4 13M5669 3388l27 -14l-6 10m6 -10l-11 -1M5750 3368l22 26l-12 -4m12 4l-2 -13M6500 3367l22 14l-10 0m10 0l-4 -9M2278 3427l36 5l-13 6m13 -6l-11 -9M2466 3425l17 9M2888 3424l26 -2M3456 3437l-9 -18M4184 3401l0 32l-6 -10m6 10l6 -10M2258 3457l34 11l-13 3m13 -3l-9 -10M2778 3491l1 -27l5 9m-5 -9l-6 8M2916 3481l18 -13M3084 3474l32 -17l-7 12m7 -12l-14 -1M3478 3481l-32 -16l13 -1m-13 1l7 11M3796 3487l-10 -20M3944 3461l-6 23M5299 3480l19 -1M5992 3493l0 -24M6431 3487l-20 -24l11 4m-11 -4l2 12M4202 3531l-21 -13M4233 3534l-17 -28l11 6m-11 -6l0 13M4367 3513l19 -2M4734 3508l-16 27l0 -12m0 12l11 -6M4790 3496l-3 38l-6 -13m6 13l9 -12M5935 3505l-24 -2M2477 3559l-31 13l7 -10m-7 10l13 2M2883 3546l-8 34l-4 -13m4 13l9 -9M3455 3552l14 14M4342 3556l-13 16M4385 3566l11 -24l1 10m-1 -10l-8 5M4762 3538l-4 22M5548 3540l-12 20M5831 3569l-8 -22M6038 3568l25 -15l-5 10m5 -10l-11 0M2074 3613l-11 -16M2688 3603l30 -15l-7 11m7 -11l-13 -1M3197 3596l26 16l-11 0m11 0l-5 -10M3481 3592l11 23M4347 3583l-33 18l7 -12m-7 12l14 1M4354 3607l26 -2l-8 6m8 -6l-9 -4M5200 3612l-2 -27l6 9m-6 -9l-5 9M5339 3610l-1 -26l6 8m-6 -8l-5 9M5797 3606l-29 4l8 -7m-8 7l10 4M5829 3610l4 -35l6 12m-6 -12l-8 11M6519 3618l12 -13M2230 3655l-10 -34l10 9m-10 -9l-4 13M3119 3665l-14 -17M3469 3660l14 -26l1 11m-1 -11l-10 6M3621 3645l-20 1M4390 3632l-11 17M4665 3666l18 -27l0 12m0 -12l-11 5M5000 3653l-6 -21M5185 3640l-23 0M6185 3625l-2 28l-5 -10m5 10l6 -9M2237 3691l24 5M2670 3680l-16 22l1 -10m-1 10l10 -4M2809 3676l-24 26l3 -13m-3 13l13 -4M3587 3673l15 34l-12 -8m12 8l2 -14M4318 3688l14 16M4596 3674l14 33l-11 -8m11 8l2 -14M4698 3681l-33 19l7 -13m-7 13l14 0M5168 3701l-29 -3l10 -5m-10 5l9 7M5337 3666l-3 32l-5 -11m5 11l7 -10M6076 3708l8 -28l3 11m-3 -11l-8 8M2179 3752l22 -22l-3 11m3 -11l-11 3M2560 3744l-11 -29l9 7m-9 -7l-2 11M2850 3747l-27 -4l10 -4m-10 4l8 7M3595 3742l13 -18M3970 3730l29 21l-14 -1m14 1l-5 -13M4131 3717l-18 20l2 -10m-2 10l10 -3M4200 3731l25 18l-12 -1m12 1l-5 -11M5108 3742l16 -15M5582 3725l23 2M2196 3778l23 5M2285 3794l16 -33l1 14m-1 -14l-12 7M2676 3787l-29 -1l10 -5m-10 5l9 6M3621 3770l24 -2M3681 3775l0 28l-6 -9m6 9l5 -9M3739 3780l-31 -18l14 0m-14 0l6 12M3996 3778l21 13M4345 3757l27 23l-13 -2m13 2l-4 -13M4507 3756l6 29l-8 -8m8 8l4 -11M4936 3776l-21 9M4960 3779l25 -18l-5 11m5 -11l-12 1M5673 3780l-23 7M5896 3787l-25 -15l11 0m-11 0l5 10M2244 3825l-33 1l10 -7m-10 7l11 6M2547 3837l1 -31l6 10m-6 -10l-6 10M4390 3800l-2 37l-7 -12m7 12l8 -12M4749 3807l28 23l-14 -2m14 2l-5 -13M6591 3829l-6 -30l8 8m-8 -8l-4 11M2301 3855l-7 17M3073 3851l24 12l-10 1m10 -1l-6 -9M3280 3890l-24 -26l13 4m-13 -4l2 13M3539 3864l11 22M3637 3880l-14 -14M3953 3868l5 -22M4676 3853l24 18l-11 -1m11 1l-4 -11M4989 3856l32 17l-14 1m14 -1l-7 -12M5133 3853l13 17M5512 3877l27 -10l-7 8m7 -8l-11 -2M6550 3859l-24 24l3 -13m-3 13l13 -3M6587 3869l-33 9l9 -9m-9 9l12 4M2183 3932l12 -26l1 11m-1 -11l-9 6M2440 3903l24 20l-12 -2m12 2l-4 -11M2752 3909l-15 11M2776 3912l18 3M2837 3894l-20 15M2884 3929l-12 -33l10 8m-10 -8l-3 13M3003 3887l21 26l-12 -4m12 4l-2 -13M3505 3900l20 22l-11 -3m11 3l-2 -11M3684 3907l26 -8l-7 8m7 -8l-10 -3M4423 3899l6 33l-9 -9m9 9l4 -12M5187 3910l-32 -4l11 -5m-11 5l9 8M5239 3920l-23 -21l12 2m-12 -2l3 11M5415 3921l-24 -20l12 2m-12 -2l4 11M6105 3902l-23 24l3 -12m-3 12l12 -3M6425 3906l-21 -9M2401 3973l-5 -21M2475 3944l16 17M4187 3972l5 -32l5 11m-5 -11l-8 10M4476 3956l-35 0l11 -7m-11 7l11 7M4773 3952l31 20l-14 0m14 0l-6 -12M5377 3945l27 15l-12 1m12 -1l-6 -10M2570 3994l-18 0M3445 4008l38 1l-12 7m12 -7l-12 -8M3789 4003l-1 -30l6 9m-6 -9l-5 10M3901 3983l-25 16l5 -10m-5 10l11 0M3932 4008l-17 -6M4030 3983l-5 23M4837 4004l34 -14l-8 11m8 -11l-14 -2M5216 4004l-1 -28l6 9m-6 -9l-5 9M5353 4014l-7 -36l9 10m-9 -10l-5 13M5459 3994l-5 21M2297 4051l-19 -26l11 5m-11 -5l1 12M2570 4055l15 -13M5203 4021l-24 25l3 -13m-3 13l13 -3M6446 4049l-22 -29l13 5m-13 -5l1 14M2796 4077l-10 34l-4 -13m4 13l10 -9M4446 4083l-27 -7l10 -3m-10 3l7 8M4745 4099l23 -10M5133 4061l-15 34l-2 -14m2 14l12 -8M2827 4115l-33 9l9 -10m-9 10l13 4M2921 4125l25 6M4318 4146l-13 -30l10 7m-10 -7l-2 12M4488 4136l22 -3M5372 4141l-2 -36l8 11m-8 -11l-6 12M5517 4119l-12 23M5778 4150l18 -33l1 14m-1 -14l-12 7M6189 4131l20 -15M6403 4124l-29 0l9 -6m-9 6l9 6M3225 4167l29 23l-14 -2m14 2l-5 -13M4006 4178l11 -27l2 11m-2 -11l-9 7M4364 4162l-23 10M4694 4185l33 -14l-8 11m8 -11l-13 -2M4750 4202l0 -36l7 12m-7 -12l-7 12M5665 4178l14 -17M5976 4171l-22 2M6148 4172l-11 16M6325 4191l-15 -11M2390 4226l11 -32l3 13m-3 -13l-10 8M3023 4216l19 -15M3962 4215l-15 17M4815 4204l24 19l-12 -1m12 1l-4 -11M4907 4210l23 23l-12 -3m12 3l-3 -12M5025 4229l-30 -8l11 -3m-11 3l8 9M2404 4258l21 9M2495 4253l30 11l-12 2m12 -2l-8 -10M2538 4243l19 23l-11 -4m11 4l-2 -11M3094 4262l30 -16l-7 11m7 -11l-13 -1M3179 4256l14 27l-10 -6m10 6l1 -11M3421 4257l16 12M2975 4295l19 7M3356 4296l-12 25l-1 -10m1 10l9 -6M3388 4302l18 1M4343 4324l28 -16l-6 11m6 -11l-12 0M4767 4313l27 -19l-5 12m5 -12l-12 1M6066 4309l19 -19l-2 10m2 -10l-10 2M6093 4309l36 -8l-10 10m10 -10l-13 -4M2434 4372l-25 -26l13 3m-13 -3l3 13M2579 4358l25 -18l-5 11m5 -11l-12 1M3348 4332l-13 17M3367 4357l9 -33l4 12m-4 -12l-9 9M3480 4351l-16 -11M4464 4331l22 28l-13 -5m13 5l-2 -14M4575 4350l18 -7M5079 4358l-19 2M5832 4365l-14 -18M6148 4341l-35 8l10 -9m-10 9l13 4M2308 4384l-1 31l-6 -10m6 10l7 -10M2668 4382l12 22M2926 4390l14 17M3233 4407l-30 -23l14 2m-14 -2l5 13M3269 4409l-24 -28l13 4m-13 -4l2 14M3571 4406l31 -2l-10 7m10 -7l-10 -6M3855 4391l11 22M4480 4380l-30 18l6 -12m-6 12l13 0M5231 4402l19 -9M5858 4413l-23 -20l11 2m-11 -2l4 11M6563 4403l18 4M2557 4424l5 20M2853 4438l19 20l-10 -3m10 3l-2 -10M3012 4438l11 -20M3976 4421l10 16M4027 4448l-27 -16l12 0m-12 0l6 10M4210 4446l-27 -14l12 -1m-12 1l6 10M5642 4425l-15 14M6491 4436l32 5l-11 5m11 -5l-9 -8M2211 4493l-30 -13l12 -2m-12 2l7 10M2378 4478l28 -10l-7 9m7 -9l-11 -2M4931 4480l-15 27l-1 -12m1 12l10 -6M5403 4466l-28 16l6 -11m-6 11l12 1M5476 4481l-8 16M6175 4482l-26 2M6421 4489l18 0M2788 4516l-5 34l-5 -12m5 12l8 -10M4318 4516l34 14l-14 2m14 -2l-8 -11M4376 4536l25 -4M5182 4533l-36 1l12 -7m-12 7l12 7M5351 4508l21 23l-12 -3m12 3l-2 -12M5391 4534l31 -8l-8 9m8 -9l-12 -3M6443 4526l22 10M6495 4528l17 -7M3790 4567l-20 15M4536 4562l23 15l-10 0m10 0l-4 -9M5443 4590l-26 -22l13 2m-13 -2l4 12M2460 4624l4 -35l5 12m-5 -12l-8 10M2834 4598l-14 21M3241 4591l-4 28l-4 -10m4 10l7 -8M3987 4606l-35 -2l12 -6m-12 6l11 8M4211 4603l-11 29l-2 -12m2 12l9 -7M5494 4626l20 -12M5846 4620l-36 -3l12 -6m-12 6l11 8M6421 4614l5 23M2720 4669l-14 -12M3620 4671l17 -7M4607 4638l-27 22l4 -12m-4 12l13 -2M5195 4653l-21 -7M5388 4642l-9 34l-4 -13m4 13l10 -9M2453 4699l14 15M2505 4701l-16 -13M2929 4696l-1 19M3793 4684l17 20l-9 -3m9 3l-2 -10M4639 4705l-23 10M5388 4704l19 -8M5462 4710l-35 -2l12 -7m-12 7l11 7M6351 4692l37 7l-13 5m13 -5l-11 -10M2580 4741l-21 1M2808 4754l-27 -15l12 0m-12 0l6 10M3150 4747l-27 -3l9 -5m-9 5l8 6M3437 4730l25 21l-12 -2m12 2l-4 -12M3900 4744l17 21l-10 -3m10 3l-1 -10M4417 4755l-4 -21M4663 4744l-24 -3M4928 4750l-23 9M5260 4767l-17 -21l10 3m-10 -3l1 10M5568 4728l-5 27l-4 -10m4 10l7 -8M5591 4752l31 6l-11 4m11 -4l-9 -8M2278 4783l-11 17M2785 4793l-27 -9l10 -2m-10 2l7 8M3100 4775l-6 26l-3 -10m3 10l7 -7M3335 4785l-18 -6M3587 4793l-33 0l11 -7m-11 7l11 6M3994 4792l-12 -20M4530 4815l-12 -35l11 9m-11 -9l-3 14M4906 4766l-9 36l-4 -13m4 13l10 -10M5048 4786l-18 -13M5305 4805l20 -14M5618 4782l26 16l-12 0m12 0l-5 -10M2099 4837l28 5l-10 4m10 -4l-8 -7M3539 4853l9 -35l4 13m-4 -13l-10 10M4420 4845l-25 -27l13 4m-13 -4l3 14M5373 4843l12 -14M5721 4835l-26 8l7 -8m-7 8l10 3M5899 4820l-18 30l0 -13m0 13l12 -6M6495 4836l-37 6l11 -9m-11 9l13 5M2111 4895l-25 -13l11 -1m-11 1l6 9M2336 4881l-22 -18l11 2m-11 -2l4 10M2741 4864l-19 18l3 -10m-3 10l10 -2M3599 4883l16 -18M4177 4883l-25 5M4773 4864l-17 12M4892 4852l10 36l-10 -10m10 10l4 -14M4997 4887l-1 -28l6 9m-6 -9l-5 9M5034 4883l18 2M5277 4872l-16 31l-1 -13m1 13l11 -7M5735 4882l-30 0l10 -6m-10 6l10 6M5766 4893l5 -31l5 11m-5 -11l-8 9M2221 4920l-31 19l6 -12m-6 12l14 0M2490 4899l-13 30l-2 -12m2 12l10 -7M2538 4944l-16 -29l11 6m-11 -6l0 13M2888 4901l1 31l-7 -10m7 10l6 -10M2933 4916l8 26l-8 -7m8 7l3 -10M3089 4917l-22 5M3226 4902l-11 29l-2 -11m2 11l9 -7M4557 4936l-17 -12M5029 4916l-25 -3M5334 4936l16 -19M5649 4934l28 -5l-8 7m8 -7l-10 -4M6024 4910l9 20M6406 4905l-12 20M2578 4958l16 21l-9 -4m9 4l-1 -10M2945 4956l23 5M4903 4964l-13 19M6185 4958l-21 18l3 -10m-3 10l10 -2M6334 4958l-31 -3l11 -5m-11 5l10 7M2787 5014l31 0l-10 6m10 -6l-10 -6M2876 4991l23 29l-13 -5m13 5l-2 -14M3303 5016l35 9l-13 4m13 -4l-9 -10M3350 5025l2 -22M3866 4995l-25 25l3 -13m-3 13l13 -3M3955 5017l-1 -22M4153 5026l-18 -15M4688 5010l23 -20l-3 11m3 -11l-11 2M4745 5022l-11 -32l10 8m-10 -8l-3 13M5114 5004l-12 32l-3 -13m3 13l10 -8M5292 5015l-3 -19M5752 5019l-29 3l9 -7m-9 7l10 5M5804 5006l-21 14M2175 5059l30 2l-10 5m10 -5l-9 -7M2820 5048l12 16M2914 5041l9 24M3543 5046l28 22l-13 -2m13 2l-5 -13M4166 5061l-21 -14M4750 5058l1 -19M5075 5059l20 -18l-3 10m3 -10l-10 2M5331 5060l-24 3M5565 5074l30 -18l-6 12m6 -12l-13 0M2911 5110l-26 -17l12 0m-12 0l5 11M3170 5094l18 1M3368 5116l-33 -17l14 -1m-14 1l7 12M3540 5113l-5 -27l7 8m-7 -8l-4 10M4907 5092l28 12l-11 2m11 -2l-7 -9M5354 5106l31 -18l-6 12m6 -12l-14 0M5870 5106l17 -19M6255 5085l2 23M2071 5152l22 -6M2773 5144l22 13M3199 5142l-27 4l8 -7m-8 7l9 4M3305 5142l-20 17l3 -10m-3 10l10 -2M3575 5145l-23 16l4 -10m-4 10l11 -1M3849 5124l-3 20M4128 5132l-27 6l7 -7m-7 7l10 3M5662 5129l27 11l-11 2m11 -2l-6 -9M2671 5184l-25 27l3 -14m-3 14l13 -4M3314 5193l-16 -25l10 5m-10 -5l0 11M4752 5171l-32 20l6 -13m-6 13l14 0M5180 5183l19 25l-11 -4m11 4l-1 -12M5789 5211l-4 -30l7 9m-7 -9l-5 10M6588 5207l-14 -20M2280 5235l-21 5M2796 5231l-19 22l2 -11m-2 11l10 -3M2818 5237l32 -9l-9 9m9 -9l-12 -3M3344 5210l-11 21M3576 5228l-20 -6M3609 5231l19 -13M4023 5207l-20 32l0 -14m0 14l13 -6M4302 5213l6 19M4371 5228l22 1M5206 5213l23 26l-13 -4m13 4l-2 -13M6354 5216l15 28l-10 -6m10 6l1 -12M2812 5279l-21 0M2992 5284l-14 -27l10 6m-10 -6l-1 12M4348 5293l-34 -16l14 -1m-14 1l8 12M5182 5257l11 34l-10 -9m10 9l3 -13M5795 5279l19 -14M6003 5275l-29 0l9 -6m-9 6l9 6M6035 5274l-17 -18M6437 5271l0 23M6538 5277l-27 -18l12 0m-12 0l5 11M6570 5260l24 15l-11 0m11 0l-5 -10M2192 5320l-10 -17M2457 5310l-12 34l-3 -13m3 13l10 -9M3185 5301l27 21l-13 -2m13 2l-4 -12M4577 5291l5 37l-9 -11m9 11l6 -13M5371 5325l-23 -19l11 2m-11 -2l4 11M6265 5304l7 29l-8 -8m8 8l4 -11M3420 5367l-19 3M5122 5352l-37 0l12 -7m-12 7l12 7M5560 5363l-13 -15M6126 5348l-3 22M6395 5357l3 18M3210 5388l-22 24l2 -12m-2 12l12 -4M3649 5399l-1 21M3940 5406l-26 23l4 -12m-4 12l13 -2M4119 5429l6 -25M4190 5410l-36 0l12 -7m-12 7l12 7M5567 5403l29 1l-9 5m9 -5l-9 -6M6305 5385l14 22l-9 -5m9 5l0 -10M2255 5467l-19 -11M2477 5458l21 -31l-1 14m1 -14l-13 6M2645 5451l25 3M3533 5429l-6 28l-4 -10m4 10l7 -8M3811 5462l8 -25M4144 5464l-22 -31l13 6m-13 -6l1 14M4511 5450l-24 -16l11 0m-11 0l5 10M4759 5446l-28 23l5 -13m-5 13l14 -2M5286 5434l-9 20M5739 5466l21 -26l-2 13m2 -13l-12 4M5863 5435l-26 16l5 -10m-5 10l11 0M6120 5457l-23 -11M6319 5433l-20 25l1 -12m-1 12l11 -4M2226 5511l19 -29l-1 13m1 -13l-12 6M2429 5502l-17 -18M3411 5481l7 30l-8 -8m8 8l4 -11M3946 5490l-27 24l4 -13m-4 13l14 -2M3976 5516l11 -33l3 13m-3 -13l-10 9M4103 5514l3 -33l6 12m-6 -12l-8 10M4662 5509l23 -17l-4 10m4 -10l-11 1M5157 5494l31 16l-13 1m13 -1l-7 -11M5226 5496l-11 15M5834 5488l-26 25l3 -13m-3 13l13 -3M6464 5472l-4 30l-5 -10m5 10l7 -9M2397 5519l-7 27l-3 -10m3 10l8 -7M2638 5560l-29 -21l14 1m-14 -1l5 12M2946 5550l6 -28l4 10m-4 -10l-8 8M3133 5537l-22 19l3 -10m-3 10l11 -2M3290 5550l36 0l-12 7m12 -7l-12 -7M3575 5550l11 -18M4017 5535l-19 24l2 -11m-2 11l11 -4M5198 5558l10 -22M5268 5538l-31 -15l13 -1m-13 1l7 11M6064 5537l-9 24M6469 5521l19 24l-11 -4m11 4l-1 -12M2146 5582l-15 10M2424 5576l-11 21M2765 5594l25 -4M3010 5568l11 23M3803 5593l-30 -2l10 -5m-10 5l9 7M5810 5569l12 31l-10 -8m10 8l2 -12M6130 5568l29 15l-12 1m12 -1l-7 -11M6521 5589l-30 3l9 -7m-9 7l10 5M2329 5621l27 -2l-8 6m8 -6l-9 -5M3090 5619l-21 1M3502 5609l-10 27l-2 -11m2 11l9 -7M3903 5614l-11 22M6466 5641l16 -20M6600 5622l-34 -8l12 -4m-12 4l9 9M2137 5654l-16 23l1 -11m-1 11l10 -4M2418 5678l-22 2M3110 5667l-34 10l9 -10m-9 10l13 3M3731 5661l30 3l-10 5m10 -5l-9 -7M3867 5684l22 -8M4623 5652l-19 23l2 -11m-2 11l11 -4M5075 5684l9 -31l3 12m-3 -12l-9 8M5636 5678l-12 -18M6013 5657l-6 31l-4 -11m4 11l8 -9M6271 5664l11 15M3689 5720l-17 -28l11 6m-11 -6l0 12M3778 5709l-21 9M4209 5736l23 -23l-3 12m3 -12l-12 3M5064 5702l-24 8M5657 5727l-23 -5M5893 5711l-30 10l8 -9m-8 9l12 3M6307 5725l-14 -20M2874 5738l5 23M3020 5762l-10 -20M3481 5740l-7 35l-5 -13m5 13l9 -10M4240 5773l26 -19l-5 11m5 -11l-12 1M4394 5778l-20 -17l10 2m-10 -2l3 9M4677 5770l-28 -10l11 -2m-11 2l7 9M4707 5732l3 36l-8 -11m8 11l6 -12M5400 5780l-8 -20M5558 5770l-31 -21l14 1m-14 -1l6 13M6332 5770l-28 -2l9 -5m-9 5l9 6M2511 5797l14 22M2630 5811l-22 0M4219 5783l22 24l-12 -3m12 3l-2 -12M4331 5785l-2 27l-5 -9m5 9l6 -8M4417 5824l-26 -22l13 2m-13 -2l4 12M5298 5823l-8 -22M6340 5814l33 -7l-9 9m9 -9l-12 -4M2475 5840l-22 20l3 -11m-3 11l11 -2M2693 5829l-5 22M3488 5855l-36 0l12 -7m-12 7l12 7M3564 5862l-15 -24l10 5m-10 -5l0 11M4049 5846l29 22l-14 -1m14 1l-5 -13M4419 5860l22 -15l-4 9m4 -9l-10 0M4819 5844l-19 6M5586 5834l-18 12M6009 5858l-7 -31l8 8m-8 -8l-4 11M2305 5884l-26 25l4 -13m-4 13l14 -3M2845 5905l23 -26l-2 13m2 -13l-13 4M4225 5890l24 9M4703 5891l-26 16l5 -10m-5 10l12 0M4869 5873l3 21M5245 5902l-23 -7M5472 5888l-19 12M5618 5867l6 32l-8 -9m8 9l4 -11M5843 5904l-26 -22l13 2m-13 -2l4 12M6007 5898l19 -28l-1 13m1 -13l-12 5M6547 5885l-35 14l8 -11m-8 11l14 2M2331 5952l-15 -25l10 5m-10 -5l0 11M2506 5916l5 29l-7 -8m7 8l4 -10M2616 5930l-22 -3M3094 5938l0 -20M3926 5930l19 -7M4246 5911l18 33l-12 -7m12 7l1 -14M5445 5924l2 37l-8 -12m8 12l7 -12M5589 5935l-17 -14M5978 5942l-29 -2l10 -5m-10 5l9 6M6422 5948l-3 -19M2503 5977l31 16l-13 1m13 -1l-7 -11M3977 5983l-32 -4l11 -5m-11 5l10 8M4229 5978l20 10M5338 5984l-22 -5M5942 5965l-23 14l5 -9m-5 9l10 0M6441 5970l-29 23l5 -13m-5 13l14 -2M2201 6021l-21 2M2510 6022l-19 -17l10 2m-10 -2l3 9M2637 6019l4 24M3058 6044l8 -23M3655 6006l17 30l-11 -7m11 7l1 -13M4825 6019l-20 28l1 -13m-1 13l12 -5M4998 6019l-34 -12l13 -3m-13 3l9 11M5035 6038l3 -33l6 11m-6 -11l-7 10M5087 6028l-25 3M5161 6036l3 -24M5492 6024l15 -13M5857 6022l-5 -18M5959 6012l-29 11l7 -9m-7 9l12 2M6226 6026l29 3l-10 5m10 -5l-9 -7M6356 6009l26 11l-11 1m11 -1l-6 -9M6505 6003l19 33l-13 -7m13 7l0 -14M6539 5997l15 34l-12 -8m12 8l2 -14M3152 6068l-31 -6l11 -4m-11 4l9 8M4029 6058l15 30l-11 -7m11 7l1 -13M4308 6069l25 -21l-4 12m4 -12l-12 2M4687 6062l21 -10M4860 6055l29 8l-11 3m11 -3l-8 -8M4897 6056l24 4M5248 6051l-17 21l1 -10m-1 10l9 -3M5659 6090l-13 -27l9 6m-9 -6l-1 11M6306 6055l4 27l-7 -8m7 8l4 -9M3761 6134l-16 -30l11 6m-11 -6l-1 13M5565 6105l25 5M6127 6120l21 -8M6216 6120l19 -21l-2 11m2 -11l-10 3M6284 6103l-3 29l-5 -10m5 10l7 -9M2729 6159l-23 -1M3344 6171l16 -23l-1 10m1 -10l-10 4M3581 6156l17 -7M4316 6137l1 29l-6 -9m6 9l6 -10M4349 6158l36 8l-13 5m13 -5l-10 -10M4633 6138l28 19l-13 -1m13 1l-5 -12M4777 6170l5 -34l5 12m-5 -12l-8 10M4834 6154l-30 -4l10 -5m-10 5l9 7M5159 6169l-21 -12M5337 6147l-18 23l1 -11m-1 11l11 -4M5503 6149l14 17M2106 6223l-21 -31l13 6m-13 -6l1 14M2498 6220l21 -24l-2 12m2 -12l-12 4M2555 6216l-20 -29l12 6m-12 -6l1 14M2607 6185l0 35l-7 -12m7 12l7 -11M2691 6217l-11 -20M3741 6208l16 -30l1 13m-1 -13l-11 6M4208 6209l3 -31l5 11m-5 -11l-7 10M4501 6197l-16 20M4762 6208l9 -31l3 12m-3 -12l-9 8M4934 6201l30 0l-10 6m10 -6l-10 -6M5039 6202l-27 -26l14 3m-14 -3l3 14M5131 6215l-13 -23l9 5m-9 -5l0 10M5622 6209l20 -26l-1 12m1 -12l-12 4M6388 6184l-28 16l6 -11m-6 11l12 0M4110 6243l-33 -15l14 -2m-14 2l8 11M4129 6229l31 15l-13 1m13 -1l-7 -11M4233 6248l-7 -19M5740 6241l4 24M6181 6234l-30 11l7 -10m-7 10l12 2M6439 6241l-10 18M2427 6305l-20 -25l12 4m-12 -4l2 12M3163 6288l-17 -12M3220 6280l-33 7l9 -9m-9 9l12 4M3249 6301l-30 -8l11 -3m-11 3l8 8M3337 6290l-11 -17M3635 6284l22 7M4023 6276l-13 23l-1 -10m1 10l9 -5M4549 6279l-20 5M4573 6290l-15 -18M4625 6278l-2 20M5235 6274l-19 31l0 -14m0 14l13 -6M5557 6281l-10 17M5681 6299l-21 -14M2342 6314l-17 13M2739 6326l-32 4l10 -8m-10 8l11 5M3257 6351l6 -31l4 11m-4 -11l-8 9M3577 6355l-1 -37l8 12m-8 -12l-7 12M4136 6334l24 -26l-3 13m3 -13l-13 4M4427 6339l-29 0l9 -6m-9 6l9 6M5062 6313l6 22"/>
<path stroke="#efab00" d="M2167 2480l-9 -22M3615 2461l23 -14l-5 9m5 -9l-10 0M4597 2470l-8 -35l9 10m-9 -10l-4 13M4747 2476l-8 -21M5543 2453l27 -1l-9 6m9 -6l-9 -5M5879 2462l23 0M6447 2453l-25 26l3 -13m-3 13l13 -3M3054 2483l-7 35l-5 -13m5 13l9 -10M3594 2500l12 27l-9 -6m9 6l1 -11M4009 2485l11 22M4129 2505l-18 -7M4704 2490l29 19l-13 0m13 0l-6 -12M5314 2496l4 32l-8 -10m8 10l5 -11M6167 2494l35 1l-12 6m12 -6l-11 -7M6415 2515l15 -34l2 14m-2 -14l-12 8M2500 2540l-27 -1l9 -5m-9 5l9 6M2582 2541l-5 32l-5 -11m5 11l8 -9M2676 2535l-4 18M3564 2552l-30 4l9 -7m-9 7l11 5M4832 2535l2 22M5488 2545l-16 24l0 -11m0 11l10 -5M6307 2552l-5 -22M2142 2568l-5 31l-5 -11m5 11l8 -9M2554 2572l-4 30l-5 -10m5 10l7 -9M3105 2571l-8 30l-3 -11m3 11l9 -8M4668 2584l-9 25l-2 -10m2 10l8 -6M4854 2576l-2 32l-6 -11m6 11l7 -10M2244 2641l14 -32l2 13m-2 -13l-11 8M2526 2648l14 -13M2951 2621l-28 22l5 -13m-5 13l13 -1M4071 2619l23 22l-12 -2m12 2l-3 -12M4391 2652l25 -21l-4 12m4 -12l-12 2M6151 2633l26 9l-10 2m10 -2l-7 -8M3225 2681l13 -16M3842 2686l-19 -30l12 6m-12 -6l0 13M6051 2667l7 24M6368 2676l19 24l-11 -4m11 4l-1 -12M3390 2734l26 -8l-7 8m7 -8l-10 -2M3793 2718l-27 -5l10 -4m-10 4l8 7M4326 2705l-1 21M4885 2704l-24 25l3 -13m-3 13l13 -3M5519 2716l-19 26l1 -12m-1 12l11 -5M5570 2720l6 21M6477 2713l5 26l-7 -8m7 8l4 -9M2328 2750l-6 32l-4 -12m4 12l8 -9M2376 2774l-4 -25M2469 2772l-27 0l9 -6m-9 6l9 5M3091 2781l20 -17l-3 9m3 -9l-10 1M3474 2764l-14 12M4533 2762l1 23M4587 2771l-30 -21l14 1m-14 -1l5 13M5538 2769l10 -20M5692 2767l-19 8M5851 2780l13 -19M5922 2781l-14 -20M5999 2764l-1 23M2436 2803l8 28l-8 -7m8 7l3 -11M3199 2821l19 -5M3467 2810l-28 -19l13 1m-13 -1l5 12M3739 2826l-19 -25l11 4m-11 -4l1 12M3784 2804l-23 13l5 -9m-5 9l10 1M3963 2825l-30 -19l13 0m-13 0l6 12M4425 2799l0 25M5881 2821l10 -30l3 12m-3 -12l-9 8M2242 2859l-27 -10l11 -2m-11 2l7 9M3600 2844l7 28l-8 -8m8 8l3 -10M3763 2841l-21 16l4 -9m-4 9l10 -1M3943 2842l-12 14M4021 2873l-4 -37l9 11m-9 -11l-6 13M4357 2846l-11 15M4417 2868l29 -9l-8 8m8 -8l-11 -3M4511 2854l34 -14l-8 11m8 -11l-14 -2M5362 2857l-16 9M5418 2858l-23 -3M5770 2839l17 33l-12 -7m12 7l1 -14M5938 2845l13 29l-10 -7m10 7l2 -12M6006 2850l-26 1M2486 2902l-18 7M2685 2905l-22 -7M2879 2896l34 -14l-8 11m8 -11l-14 -2M2940 2901l19 -10M3720 2885l9 20M4500 2902l27 1l-9 5m9 -5l-8 -6M4913 2926l-1 -34l7 11m-7 -11l-6 11M5974 2881l-13 18M6172 2894l-21 -11M6326 2921l23 -23l-3 12m3 -12l-12 3M2214 2956l12 -30l2 12m-2 -12l-10 7M2422 2942l-34 -16l14 -1m-14 1l8 12M2566 2935l-13 32l-2 -13m2 13l11 -8M2669 2951l-33 3l10 -8m-10 8l11 6M2688 2941l20 8M4719 2957l-2 -37l8 11m-8 -11l-7 12M4944 2952l9 -24M5276 2953l-28 -9l11 -3m-11 3l7 9M5606 2935l-28 21l5 -12m-5 12l13 -1M5790 2966l-21 -31l13 6m-13 -6l1 14M6425 2950l-26 -25l13 3m-13 -3l4 13M2291 3001l27 -14l-6 10m6 -10l-11 -1M3123 2992l11 -15M3729 2975l-1 32l-6 -11m6 11l7 -10M4381 3004l-10 -21M4637 2997l16 -27l0 12m0 -12l-10 6M5023 3006l-16 -34l12 8m-12 -8l-2 14M5138 2988l34 -13l-8 11m8 -11l-14 -2M5387 2997l-8 -24M5550 2993l29 -2l-9 7m9 -7l-10 -5M5944 2968l-14 17M6281 2988l-35 6l10 -9m-10 9l12 5M6349 2982l-18 -12M2284 3014l-1 24M2977 3027l-13 15M3625 3042l-26 -26l13 3m-13 -3l3 14M3701 3045l-10 -20M4427 3040l27 -21l-5 12m5 -12l-13 1M4667 3032l-16 -16M5993 3032l21 8M6189 3036l-5 -22M6399 3036l17 -12M2690 3094l-30 -22l14 1m-14 -1l5 13M2692 3076l26 15l-11 0m11 0l-5 -10M3000 3076l-13 -21M3590 3092l3 -20M3800 3075l32 -11l-8 10m8 -10l-13 -3M5362 3091l24 -28l-2 14m2 -14l-13 4M5595 3092l28 -26l-4 14m4 -14l-14 3M2788 3140l-22 -22l11 3m-11 -3l3 11M3576 3128l-14 -25l10 5m-10 -5l0 11M4368 3122l26 -16l-5 10m5 -10l-11 0M5504 3129l-27 -3l9 -4m-9 4l8 6M6105 3137l-35 -14l14 -2m-14 2l9 11M6272 3130l13 -31l2 13m-2 -13l-10 7M2192 3156l12 20M3173 3157l14 17M3365 3151l-6 18M3755 3171l28 0l-9 5m9 -5l-9 -6M4097 3179l-13 -12M4169 3160l19 9M4286 3147l-29 11l7 -9m-7 9l12 2M4556 3179l10 -17M5950 3169l-23 -22l12 3m-12 -3l3 12M6485 3161l17 21l-10 -3m10 3l-1 -10M6524 3140l-7 28l-3 -10m3 10l8 -8M2309 3203l28 -4l-8 7m8 -7l-10 -4M3525 3207l-28 -14l12 -1m-12 1l6 10M4370 3220l30 -16l-7 11m7 -11l-13 -1M4930 3203l10 25l-8 -6m8 6l2 -10M5407 3195l9 29l-9 -7m9 7l3 -11M5641 3205l-14 12M6407 3221l8 -27l3 10m-3 -10l-8 7M3116 3239l31 7l-12 4m12 -4l-9 -9M3411 3256l-22 -24l12 3m-12 -3l2 12M4634 3256l24 -15l-5 10m5 -10l-11 0M4688 3263l-8 -20M5476 3257l-23 5M5606 3250l23 -12l-5 9m5 -9l-10 -1M5714 3251l-13 20M2743 3304l-35 -14l14 -3m-14 3l9 11M4992 3294l-25 12l6 -9m-6 9l10 1M2457 3337l-25 15l5 -10m-5 10l11 0M2895 3323l12 25l-9 -6m9 6l1 -11M3065 3344l17 -13M3656 3336l25 5M4869 3347l23 -20l-3 11m3 -11l-12 2M5870 3349l22 -3M6223 3338l-20 -4M6441 3347l-19 1M3238 3386l5 -19M4594 3394l-29 -21l14 1m-14 -1l5 13M4811 3384l-28 -14l12 -1m-12 1l6 10M5067 3391l22 -2M5596 3411l-1 -37l8 12m-8 -12l-7 12M6403 3371l29 8l-11 3m11 -3l-8 -8M2999 3434l-22 0M3380 3433l-28 -7l11 -3m-11 3l8 8M4223 3421l18 29l-12 -6m12 6l0 -13M5059 3424l-18 -13M5973 3440l-7 -36l9 10m-9 -10l-5 13M6003 3441l27 -18l-5 11m5 -11l-12 1M2132 3478l23 -4M3283 3474l-9 -20M4132 3462l-35 14l9 -12m-9 12l14 2M4195 3486l26 -22l-4 12m4 -12l-13 2M4984 3463l8 25l-8 -6m8 6l2 -10M5156 3463l24 24l-13 -3m13 3l-3 -13M5233 3467l-7 22M6447 3479l17 -22l-1 10m1 -10l-10 4M2752 3498l8 28l-8 -8m8 8l3 -11M3559 3530l-17 -20l10 3m-10 -3l2 10M4858 3528l20 -6M4910 3508l7 23M5232 3526l11 -31l3 12m-3 -12l-10 8M5327 3528l11 -16M3680 3545l-29 17l6 -11m-6 11l13 0M3948 3561l-33 -11l13 -3m-13 3l8 10M4107 3564l27 -9l-7 8m7 -8l-10 -2M4618 3558l11 18M4784 3554l22 1M5434 3584l9 -36l4 13m-4 -13l-10 10M6543 3571l7 -32l4 12m-4 -12l-9 9M3555 3598l-29 4l9 -7m-9 7l10 4M4122 3626l13 -25l1 11m-1 -11l-9 6M5966 3583l7 25M2144 3653l-29 -17l13 0m-13 0l6 11M2281 3635l-25 4M3247 3666l8 -25l2 10m-2 -10l-8 7M3500 3645l33 -3l-10 7m10 -7l-11 -5M3966 3631l21 16l-10 -1m10 1l-4 -9M4489 3666l-3 -27l6 8m-6 -8l-4 9M5673 3654l31 -1l-10 6m10 -6l-10 -6M5877 3633l-6 21M2380 3666l21 31l-13 -6m13 6l-1 -14M3712 3675l4 19M4083 3667l10 34l-10 -9m10 9l3 -13M4527 3684l-28 -4l10 -4m-10 4l8 7M5004 3676l20 18l-10 -2m10 2l-3 -10M2267 3733l23 -15l-5 9m5 -9l-10 0M2465 3730l-24 5M2511 3746l5 -27l4 10m-4 -10l-7 8M2749 3752l-17 -15M3077 3744l-38 1l12 -8m-12 8l12 7M4032 3722l-7 22M5493 3742l2 -24M5720 3736l13 -20M5830 3739l-37 6l11 -9m-11 9l13 5M2828 3781l-26 -10l10 -2m-10 2l6 8M3069 3801l11 -36l4 14m-4 -14l-11 9M4159 3778l-22 20l3 -11m-3 11l11 -2M4561 3777l-2 23M4867 3777l7 24M5594 3789l30 -19l-6 12m6 -12l-14 0M3189 3818l3 22M3256 3810l-26 17l5 -11m-5 11l12 0M3751 3807l-24 15l5 -9m-5 9l11 0M4706 3801l0 31l-6 -10m6 10l6 -10M4840 3818l27 24l-14 -2m14 2l-4 -13M5388 3806l9 18M5993 3817l33 -1l-10 7m10 -7l-11 -6M6494 3801l18 29l-12 -6m12 6l0 -13M2615 3847l-10 27l-2 -11m2 11l9 -7M2954 3855l-34 15l8 -12m-8 12l14 2M3303 3855l1 31l-6 -10m6 10l6 -10M4790 3856l2 27l-6 -8m6 8l5 -9M5289 3843l-19 33l0 -14m0 14l13 -7M5912 3858l24 24l-12 -3m12 3l-3 -12M6127 3889l-18 -24l10 4m-10 -4l1 11M6192 3875l17 -13M6384 3857l27 7l-10 3m10 -3l-8 -8M2099 3896l-36 11l10 -11m-10 11l14 4M2218 3915l14 -12M2622 3914l-33 13l8 -11m-8 11l13 2M2630 3924l27 -10l-7 8m7 -8l-11 -2M3255 3910l-21 12M3422 3918l19 2M3582 3893l-30 21l5 -13m-5 13l14 -1M3598 3903l13 19M3664 3903l-33 15l8 -12m-8 12l14 2M4117 3927l-24 -11l10 -1m-10 1l6 8M4509 3895l18 22l-10 -4m10 4l-1 -11M4823 3895l-25 17l5 -10m-5 10l11 0M5819 3925l-22 -24l12 3m-12 -3l2 12M2078 3968l-21 -12M2175 3949l-18 22l2 -11m-2 11l10 -3M2244 3960l13 -29l1 12m-1 -12l-10 7M2663 3962l6 -21M2712 3963l6 -26l3 10m-3 -10l-7 7M3525 3965l11 -28l2 11m-2 -11l-9 7M3692 3978l-19 -29l12 5m-12 -5l1 13M4556 3940l5 20M5116 3962l-9 -27l8 7m-8 -7l-3 11M5340 3939l4 24M6321 3957l33 -2l-10 7m10 -7l-11 -6M2176 4010l15 -25l0 11m0 -11l-10 5M2228 4014l7 -18M2311 4005l6 -20M2596 4016l-5 -24M2776 4018l24 -24l-3 12m3 -12l-12 3M4720 3983l1 22M4978 3998l27 -20l-5 12m5 -12l-13 1M5081 3995l-14 -12M5265 4007l-16 -26l10 5m-10 -5l0 12M5664 4012l9 -32l4 12m-4 -12l-9 9M2744 4035l26 12l-11 1m11 -1l-6 -9M4003 4031l-6 36l-5 -13m5 13l9 -11M4242 4050l-6 -24M5029 4037l-20 16l3 -9m-3 9l10 -1M5419 4048l1 -25M5706 4058l-1 -23M5940 4017l-17 31l-1 -13m1 13l12 -7M6088 4029l-29 8l8 -8m-8 8l11 3M6395 4059l13 -33l2 13m-2 -13l-11 8M3052 4079l30 16l-13 1m13 -1l-7 -11M3146 4095l22 -8M3743 4076l-10 21M4472 4092l24 0M4587 4107l-17 -26l11 5m-11 -5l0 12M5169 4066l2 33l-7 -10m7 10l6 -11M5545 4082l-10 16M5626 4089l26 -12l-6 9m6 -9l-11 -1M5772 4078l2 19M6010 4093l-24 -13l10 -1m-10 1l5 9M6258 4088l20 6M6515 4098l-28 -16l12 -1m-12 1l6 11M2546 4142l-22 -5M2566 4115l3 28l-6 -8m6 8l5 -10M2722 4112l-3 25M3194 4121l-38 -2l13 -7m-13 7l12 8M3270 4124l0 27l-6 -9m6 9l5 -9M3455 4141l-6 -30l8 9m-8 -9l-4 11M3614 4145l30 -17l-7 11m7 -11l-13 -1M4962 4124l28 23l-14 -2m14 2l-4 -13M5007 4111l-1 30l-6 -10m6 10l6 -10M5581 4131l-18 20l2 -10m-2 10l10 -3M6595 4135l-24 -18l11 1m-11 -1l4 11M2139 4151l13 27l-10 -6m10 6l1 -12M2628 4178l23 14l-10 0m10 0l-5 -9M2917 4185l18 0M4799 4193l7 -21M4862 4187l-10 -17M4946 4162l-6 25M5189 4184l-24 4M5454 4169l-22 4M5781 4163l-17 15M2155 4211l23 12l-10 1m10 -1l-5 -9M2444 4237l-11 -25l9 6m-9 -6l-2 10M2606 4213l17 6M3784 4227l-27 -16l12 0m-12 0l6 11M3896 4237l23 -20l-3 11m3 -11l-11 2M3978 4214l34 1l-11 6m11 -6l-11 -7M4281 4232l7 -25M4550 4221l19 -21l-2 11m2 -11l-11 3M4688 4215l7 19M4776 4228l3 -30l5 10m-5 -10l-7 9M5070 4225l-23 -17l11 1m-11 -1l4 10M5379 4245l8 -30l3 11m-3 -11l-9 8M5748 4225l-16 -26l10 5m-10 -5l0 12M5799 4212l-24 4M6458 4219l-26 -6l10 -3m-10 3l7 7M2179 4284l12 -30l2 12m-2 -12l-10 7M2769 4262l9 -16M2908 4263l20 -4M3399 4265l-24 -5M3602 4250l5 23M3786 4259l19 -6M4300 4252l-23 6M4643 4255l30 3l-10 5m10 -5l-9 -7M4858 4270l-12 -26l9 6m-9 -6l-1 11M5222 4265l-6 -22M5541 4239l-8 27l-3 -10m3 10l8 -7M6094 4246l9 32l-9 -8m9 8l3 -12M2104 4305l34 -15l-8 12m8 -12l-14 -2M3637 4291l-14 16M4145 4314l-3 -29l7 9m-7 -9l-5 10M4709 4312l-32 5l9 -8m-9 8l11 5M5104 4330l-13 -28l10 6m-10 -6l-1 12M6262 4286l2 20M2144 4360l-30 -15l13 -1m-13 1l7 11M2470 4346l-26 7l7 -8m-7 8l10 3M2537 4362l28 -24l-4 13m4 -13l-14 2M3089 4355l32 -14l-7 11m7 -11l-13 -2M3532 4345l-19 23l2 -11m-2 11l11 -4M3946 4340l-29 14l7 -10m-7 10l12 1M6104 4361l-24 -18l11 1m-11 -1l4 11M6528 4333l-31 18l6 -12m-6 12l14 0M2363 4398l-18 -10M2705 4401l21 -8M3353 4396l21 -15l-4 9m4 -9l-10 1M3901 4371l24 28l-13 -4m13 4l-2 -14M4890 4418l-10 -28l9 7m-9 -7l-2 11M5283 4385l17 18M5555 4387l30 15l-13 1m13 -1l-7 -11M6532 4380l-3 23M2272 4438l-15 15M3699 4426l-16 10M4110 4449l6 -20M4260 4443l-21 -24l11 3m-11 -3l2 12M4927 4414l14 34l-11 -8m11 8l2 -14M4977 4453l34 -10l-9 10m9 -10l-13 -4M5302 4428l12 27l-9 -6m9 6l2 -11M5402 4429l2 21M2070 4486l16 -26l0 12m0 -12l-10 5M2355 4498l-15 -23l9 5m-9 -5l0 10M2729 4500l-13 -14M2927 4475l29 15l-12 1m12 -1l-6 -11M3317 4491l-21 -6M3715 4480l29 -12l-7 10m7 -10l-12 -2M2151 4511l-10 22M2692 4518l-9 34l-4 -13m4 13l10 -9M3040 4525l28 -18l-5 11m5 -11l-13 0M3106 4532l-7 -24M3875 4509l33 18l-14 1m14 -1l-7 -13M3958 4528l16 -11M4192 4512l25 24l-13 -3m13 3l-3 -13M4583 4515l-27 15l6 -10m-6 10l12 1M4754 4510l27 21l-13 -2m13 2l-4 -12M5941 4530l28 -7l-8 8m8 -8l-10 -3M2353 4559l-29 16l6 -11m-6 11l13 1M2533 4561l7 20M2705 4579l24 2M3001 4594l-6 -36l9 11m-9 -11l-5 13M3520 4559l21 30l-13 -6m13 6l-1 -14M3964 4572l-25 -2M4395 4564l30 19l-14 0m14 0l-6 -12M4460 4593l20 -24l-2 12m2 -12l-11 4M4690 4575l15 -20M4793 4591l-8 -21M5562 4574l-16 -9M6095 4579l-36 2l11 -8m-11 8l12 7M2382 4623l-23 -24l12 3m-12 -3l3 13M3510 4615l28 -13l-6 10m6 -10l-12 -1M4137 4599l-27 10l7 -9m-7 9l11 2M4262 4626l-23 -14l10 0m-10 0l5 9M4569 4609l-7 32l-4 -12m4 12l9 -9M5562 4603l-24 5M5732 4604l6 29l-8 -8m8 8l4 -11M2172 4650l-27 0l9 -6m-9 6l9 5M2404 4680l-15 -27l10 6m-10 -6l-1 12M2491 4669l0 -25M2615 4639l20 26l-12 -4m12 4l-1 -12M2878 4654l22 -11M3353 4645l8 18M3550 4659l-23 20l4 -11m-4 11l11 -2M3856 4678l24 -23l-3 12m3 -12l-12 3M4783 4644l14 23l-9 -5m9 5l0 -10M4964 4676l22 -18l-4 10m4 -10l-11 2M5114 4653l-23 26l2 -13m-2 13l13 -4M6484 4642l-11 31l-3 -12m3 12l10 -8M3312 4721l25 -19l-4 11m4 -11l-12 1M3505 4720l5 -19M4486 4698l-24 6M5596 4710l-24 -10l10 -2m-10 2l6 8M5767 4680l18 28l-11 -6m11 6l0 -13M5810 4688l18 12M5890 4711l35 -1l-11 7m11 -7l-12 -6M6114 4701l-36 13l9 -11m-9 11l14 3M6332 4683l-6 22M2186 4743l23 -1M4138 4766l11 -27l2 11m-2 -11l-9 6M5298 4744l-31 -13l12 -2m-12 2l7 10M6543 4768l-20 -30l12 6m-12 -6l0 14M2316 4771l-11 28l-2 -11m2 11l9 -7M3288 4814l-9 -32l9 8m-9 -8l-3 12M3498 4798l20 3M3617 4794l-23 -7M3831 4785l1 26M3912 4781l-34 14l8 -11m-8 11l14 2M4291 4772l17 32l-12 -7m12 7l1 -14M5268 4778l1 38l-8 -12m8 12l7 -13M5362 4784l2 19M3601 4846l-27 -24l14 2m-14 -2l4 13M4089 4844l15 -13M4931 4853l-19 -28l12 5m-12 -5l1 13M5299 4841l-33 10l9 -10m-9 10l13 3M5471 4833l-20 17l3 -9m-3 9l10 -1M3548 4892l15 -25l0 11m0 -11l-10 5M3644 4871l24 19l-12 -1m12 1l-4 -11M5403 4885l3 -20M5550 4895l-6 -23M5879 4865l-17 12M5968 4860l-10 21M6459 4868l21 12M2246 4932l33 -5l-10 8m10 -8l-12 -5M2640 4913l-31 8l8 -9m-8 9l12 3M2702 4939l10 -18M4687 4916l-2 21M4769 4912l9 33l-10 -9m10 9l4 -13M5565 4934l12 -18M5617 4899l-20 26l1 -12m-1 12l12 -4M6419 4924l31 13l-13 2m13 -2l-8 -10M2396 4981l28 -7l-8 8m8 -8l-10 -3M3336 4970l-21 7M4581 4964l-21 25l2 -12m-2 12l12 -4M4998 4965l-18 -18M5079 4958l-7 19M5111 4986l15 -21M5826 4960l-22 18l4 -10m-4 10l11 -2M5922 4980l-15 -16M2188 5030l15 -24l0 11m0 -11l-10 5M2394 5024l12 -17M3822 4991l2 36l-8 -11m8 11l6 -12M3979 5033l28 -25l-4 14m4 -14l-14 2M4049 5028l-18 -26l11 5m-11 -5l1 12M4827 5005l19 4M5667 5016l-10 -27l8 7m-8 -7l-2 11M5714 5014l-28 -13l12 -1m-12 1l7 10M5977 5012l22 15l-10 -1m10 1l-4 -9M3375 5061l9 -26l2 10m-2 -10l-8 7M4069 5056l18 9M4955 5060l-4 -25M5173 5052l7 -17M5432 5052l21 4M6310 5053l21 18l-10 -2m10 2l-3 -10M2080 5108l-20 -23l11 4m-11 -4l2 12M2593 5100l-28 6l8 -8m-8 8l10 4M2862 5095l-36 11l9 -11m-9 11l14 4M3043 5121l-19 -26l11 4m-11 -4l1 12M3629 5101l16 8M4459 5094l15 29l-11 -6m11 6l1 -12M4824 5096l16 -12M4879 5114l-14 -23l9 5m-9 -5l0 10M5416 5102l34 5l-12 5m12 -5l-10 -8M5636 5078l25 22l-13 -2m13 2l-4 -12M5799 5114l5 -24M2419 5154l-18 -2M2517 5128l-24 8M3358 5145l32 -15l-7 11m7 -11l-13 -1M3873 5150l28 -18l-6 11m6 -11l-13 0M4588 5129l-9 17M5305 5126l11 18M5633 5157l-14 -12M5961 5127l-5 31l-5 -11m5 11l8 -9M6160 5139l29 -8l-8 9m8 -9l-11 -3M2964 5183l36 2l-12 7m12 -7l-11 -8M3385 5185l26 14l-11 1m11 -1l-6 -10M4096 5187l-18 -11M4212 5181l-34 -2l11 -6m-11 6l11 7M4916 5206l-9 -35l10 10m-10 -10l-4 13M4980 5192l-22 -10M6331 5167l8 17M6482 5184l-4 24M2158 5240l-29 -19l13 0m-13 0l6 12M2240 5247l-19 -12M2526 5227l37 8l-13 5m13 -5l-10 -10M3202 5246l-19 -10M3375 5222l3 20M3677 5240l-31 -2l10 -6m-10 6l10 7M3698 5222l15 34l-12 -8m12 8l2 -14M3838 5223l2 33l-7 -10m7 10l6 -11M4214 5231l-23 -18l11 1m-11 -1l4 11M3489 5280l-3 -25M3807 5270l-2 28l-5 -9m5 9l6 -9M4176 5272l21 20l-11 -2m11 2l-3 -10M4742 5290l3 -25M4969 5282l-23 -6M5160 5292l-24 -26l13 4m-13 -4l3 13M5480 5274l-19 -10M6268 5279l-29 -4l10 -4m-10 4l8 7M6325 5263l22 24l-12 -4m12 4l-2 -12M2134 5316l14 -16M2232 5343l-12 -31l10 8m-10 -8l-2 12M2271 5315l19 -9M2413 5348l1 -37l7 12m-7 -12l-8 12M2919 5310l-19 14M3116 5303l-10 16M3762 5313l-19 8M3809 5321l-27 0l9 -5m-9 5l9 5M3835 5307l-14 13M3889 5308l-11 32l-3 -13m3 13l10 -8M3970 5310l0 31l-6 -10m6 10l6 -10M6111 5315l-18 -4M6146 5308l0 32l-6 -10m6 10l6 -10M6309 5309l20 13M6386 5324l-28 1l9 -6m-9 6l9 5M2568 5370l33 -3l-10 8m10 -8l-11 -5M2889 5348l18 9M3366 5349l-23 11M3656 5359l-29 20l5 -12m-5 12l13 -1M3676 5353l-8 17M3974 5352l-23 24l3 -12m-3 12l12 -3M4928 5346l-12 30l-2 -12m2 12l10 -7M6248 5364l30 13l-12 2m12 -2l-7 -10M6428 5350l-2 22M2153 5399l-21 17l3 -10m-3 10l10 -1M3237 5400l18 13M3485 5413l-19 4M5782 5398l-4 34l-5 -12m5 12l8 -10M6137 5399l14 25l-10 -5m10 5l0 -11M6234 5384l-14 32l-2 -13m2 13l11 -8M6271 5412l8 -27l3 10m-3 -10l-8 7M6360 5388l-2 20M3241 5453l25 15l-11 0m11 0l-5 -10M3589 5455l-26 -8l10 -3m-10 3l7 8M4045 5457l-18 2M4191 5446l-19 -7M4607 5449l-22 6M5418 5447l19 -3M6172 5449l-6 20M2479 5514l-25 -28l14 4m-14 -4l2 14M3514 5470l-5 37l-6 -13m6 13l9 -11M3589 5489l21 2M3786 5502l22 -8M4220 5507l-5 -23M5384 5499l17 -11M5649 5495l-31 9l8 -9m-8 9l12 3M6532 5500l28 10l-11 2m11 -2l-7 -9M3739 5537l-26 0M4709 5541l-28 0l9 -5m-9 5l9 6M5930 5537l18 8M6256 5519l2 28l-6 -9m6 9l5 -10M6364 5533l-21 7M2189 5582l-16 24l0 -11m0 11l10 -5M2318 5580l20 15M2367 5567l0 29l-6 -9m6 9l6 -9M2656 5589l-22 -13M3651 5566l7 22M3888 5574l-21 7M3941 5575l-21 20l3 -11m-3 11l11 -2M4067 5575l-7 23M4373 5577l32 7l-12 4m12 -4l-9 -9M4996 5576l-22 1M2422 5622l22 17l-11 -1m11 1l-4 -10M4613 5618l-12 29l-2 -12m2 12l10 -7M5242 5649l-17 -22l10 4m-10 -4l1 11M5405 5618l29 12l-12 2m12 -2l-7 -9M5683 5613l16 25l-10 -5m10 5l0 -11M5745 5633l-6 -30l8 8m-8 -8l-4 11M2245 5680l-17 -14M3720 5657l-24 12l5 -8m-5 8l10 1M4005 5658l33 9l-13 4m13 -4l-9 -10M4641 5666l36 -9l-10 10m10 -10l-13 -4M4995 5690l-23 -18l11 1m-11 -1l4 10M5557 5664l-22 8M6090 5675l26 -7l-7 7m7 -7l-10 -3M6359 5672l24 10M6557 5664l-19 -3M2941 5728l17 -18M3116 5729l16 -26l0 12m0 -12l-10 5M3591 5734l3 -22M4173 5723l29 -23l-5 13m5 -13l-14 2M4335 5688l-15 33l-2 -14m2 14l11 -8M5470 5709l16 15M5550 5720l19 7M6151 5699l7 34l-9 -10m9 10l4 -12M6222 5710l-10 30l-3 -12m3 12l9 -8M6487 5707l-19 27l1 -13m-1 13l12 -5M2323 5773l16 -11M2508 5762l4 -24M4208 5761l-8 -19M4600 5771l-33 -17l14 -1m-14 1l7 12M5083 5754l8 25M5257 5759l31 -1l-10 6m10 -6l-10 -6M5758 5782l10 -30l3 12m-3 -12l-9 8M3618 5812l16 -23l0 11m0 -11l-10 4M3715 5790l0 30l-6 -10m6 10l6 -10M3916 5791l-14 15M5422 5795l-5 34l-5 -12m5 12l8 -10M5840 5818l-2 -33l7 10m-7 -10l-6 11M6183 5808l-21 -8M2597 5845l-20 -6M4690 5853l-31 -7l12 -4m-12 4l9 9M4901 5868l-7 -29l8 8m-8 -8l-3 11M5215 5860l18 -12M5508 5842l-21 4M5681 5826l11 33l-10 -9m10 9l3 -13M6197 5841l-21 15M2130 5885l-18 11M2596 5888l-23 0M2596 5894l31 10l-12 3m12 -3l-8 -9M3028 5889l33 1l-11 6m11 -6l-11 -7M3899 5892l31 -20l-6 13m6 -13l-14 0M4747 5874l-33 18l7 -12m-7 12l14 1M5664 5890l-18 15M6126 5870l-7 36l-5 -13m5 13l10 -10M6380 5882l20 1M2139 5946l6 -18M3344 5930l-29 0l10 -6m-10 6l10 6M4035 5922l-30 9l8 -9m-8 9l11 3M4796 5931l18 -10M5037 5919l-13 28l-1 -12m1 12l10 -7M5729 5937l13 -24l1 10m-1 -10l-9 5M6441 5945l18 -9M2071 5968l10 25l-8 -6m8 6l2 -10M2937 5999l18 -28l0 13m0 -13l-11 6M3001 5971l-15 31l-2 -13m2 13l11 -7M3141 5981l-22 7M3408 5959l-12 25l-1 -10m1 10l9 -6M3762 5969l21 -1M5445 5981l-33 -17l14 -1m-14 1l7 12M3294 6026l-31 9l8 -9m-8 9l12 3M4069 6019l-9 23M5136 6041l-2 -23M5776 6015l-26 6l7 -7m-7 7l10 3M6188 6033l-8 -28l8 8m-8 -8l-3 11M6424 6019l-17 15M2160 6077l-14 -19M2260 6065l-27 -14l11 -1m-11 1l6 10M2579 6044l-10 34l-4 -13m4 13l10 -9M2769 6056l-21 26l2 -13m-2 13l12 -4M2937 6075l-3 -20M3258 6077l15 -15M3898 6073l29 -7l-8 8m8 -8l-11 -3M4424 6078l-30 -5l11 -4m-11 4l9 8M4605 6088l6 -24M5913 6076l30 -16l-7 11m7 -11l-13 -1M2604 6135l-3 -38l8 12m-8 -12l-7 13M2984 6113l-20 3M3146 6089l6 23M3474 6127l7 -36l5 13m-5 -13l-9 10M3924 6094l-2 27l-5 -9m5 9l6 -8M4138 6098l-36 9l10 -10m-10 10l13 4M4247 6093l-10 32l-3 -12m3 12l9 -8M4433 6092l-15 18M4870 6114l-21 3M5671 6117l29 3l-10 5m10 -5l-9 -7M5890 6126l23 -21l-3 12m3 -12l-12 2M6321 6094l-18 25l1 -12m-1 12l11 -4M6430 6112l-33 3l10 -7m-10 7l11 6M6498 6084l12 33l-10 -8m10 8l3 -13M6543 6107l30 7l-11 4m11 -4l-8 -8M3639 6160l-22 -11M3824 6138l-18 19M3951 6143l2 36l-8 -11m8 11l6 -12M6315 6164l-36 -5l13 -6m-13 6l11 9M6357 6159l-16 -28l11 6m-11 -6l-1 12M2378 6199l-12 -15M3135 6197l19 14M3783 6203l1 -19M4657 6186l23 29l-13 -5m13 5l-2 -14M4980 6209l8 -17M5168 6204l-12 -19M5735 6189l-22 -2M5868 6180l1 33l-7 -10m7 10l6 -11M6435 6209l-22 -5M3228 6230l-21 9M4606 6249l-20 -30l12 6m-12 -6l0 14M4926 6221l-7 32l-4 -12m4 12l9 -9M5151 6239l-23 -4M5192 6267l22 -29l-2 14m2 -14l-13 5M6297 6244l17 19M6337 6227l6 25M6383 6247l32 -8l-9 9m9 -9l-12 -4M2240 6271l-11 15M2784 6305l10 -34l3 13m-3 -13l-10 9M3684 6286l19 -19l-2 10m2 -10l-10 2M4312 6275l-16 12M2177 6341l-27 -16l12 0m-12 0l6 11M2634 6337l-25 -24l13 3m-13 -3l3 13M3033 6334l-17 7M3506 6344l-3 -28l6 8m-6 -8l-5 10M4624 6326l-33 -8l12 -4m-12 4l9 9M5288 6340l14 -21M6271 6343l-24 -19l12 1m-12 -1l4 11"/>
<path stroke="#f3be00" d="M2314 2457l-35 -6l12 -5m-12 5l10 9M2396 2434l-12 29l-2 -12m2 12l10 -7M2973 2463l31 12l-12 2m12 -2l-8 -10M4710 2474l-25 -13l11 -1m-11 1l5 9M5020 2460l-27 6l7 -7m-7 7l10 3M5451 2463l-31 10l8 -10m-8 10l12 3M2306 2493l25 24l-13 -3m13 3l-3 -13M3278 2499l23 -10M4162 2521l-10 -25l8 6m-8 -6l-2 10M4355 2515l-22 -10M4994 2495l-12 17M5377 2505l-23 7M5406 2481l0 26l-5 -9m5 9l5 -9M5951 2517l-12 -14M6057 2506l-26 -21l13 2m-13 -2l4 12M6113 2515l-32 -6l12 -4m-12 4l9 8M6221 2507l19 -5M6558 2522l-23 -20l11 2m-11 -2l4 11M5061 2563l7 -31l4 12m-4 -12l-9 9M5143 2535l18 20l-10 -3m10 3l-2 -10M5400 2555l-19 -16M2191 2570l-23 20l3 -11m-3 11l11 -2M2272 2577l14 23l-9 -5m9 5l0 -10M2315 2590l30 11l-12 3m12 -3l-8 -9M2419 2597l-23 -10M2858 2587l15 20M3545 2597l21 8M4267 2591l-16 11M5896 2572l13 21M2618 2624l5 34l-9 -10m9 10l5 -12M3566 2627l21 5M3795 2637l-32 14l8 -11m-8 11l13 2M3903 2659l9 -30l3 12m-3 -12l-9 8M4566 2620l-27 25l4 -14m-4 14l14 -3M5027 2641l-19 -16M5145 2656l1 -28l5 9m-5 -9l-6 9M5194 2632l22 24l-12 -3m12 3l-2 -12M5751 2628l-20 -8M5979 2647l8 -29l3 11m-3 -11l-8 8M2093 2659l-11 21M2248 2675l-28 21l5 -12m-5 12l13 -1M2590 2666l0 23M3432 2655l-14 27l-1 -11m1 11l10 -6M5106 2686l33 -16l-7 12m7 -12l-14 -1M5748 2672l-25 24l4 -13m-4 13l13 -3M5797 2696l24 -15l-5 10m5 -10l-11 0M5871 2682l-18 -14M3125 2743l-9 -23M3690 2730l-19 7M3725 2746l16 -33l1 14m-1 -14l-12 8M4621 2709l26 10l-11 2m11 -2l-7 -8M4690 2701l-7 26l-3 -10m3 10l7 -7M5157 2746l-23 -29l13 5m-13 -5l2 14M5294 2738l-21 -19l11 2m-11 -2l3 10M5443 2732l-23 -11M5948 2710l-37 5l11 -9m-11 9l13 6M6375 2704l20 23l-11 -3m11 3l-2 -11M2231 2793l12 -30l2 12m-2 -12l-10 7M2640 2776l21 -6M3008 2775l-2 -33l7 10m-7 -10l-6 11M4206 2769l17 -16M4701 2765l16 -13M4874 2762l-27 6l8 -7m-8 7l10 3M6273 2748l5 25M2750 2825l7 -28l3 11m-3 -11l-8 8M3080 2824l-17 -11M4037 2807l28 -12l-6 10m6 -10l-11 -1M4832 2802l-20 2M5118 2825l-10 -17M6001 2812l-30 14l7 -10m-7 10l12 1M6396 2825l13 -18M2207 2854l-29 -16l13 -1m-13 1l6 11M2725 2869l3 -20M2835 2871l6 -36l5 13m-5 -13l-9 11M2972 2841l-22 25l2 -12m-2 12l12 -4M3345 2853l-31 -18l14 0m-14 0l6 12M3426 2865l-10 -15M4296 2864l-12 -22M4393 2861l-20 4M5318 2854l-9 -19M6103 2833l-4 34l-6 -12m6 12l8 -10M6417 2859l-25 4M6529 2870l-33 -10l13 -3m-13 3l9 10M3434 2913l10 -26l2 10m-2 -10l-8 6M4096 2897l-27 18l5 -11m-5 11l12 0M4181 2883l-2 30l-5 -10m5 10l6 -9M5474 2888l12 22M5862 2912l-24 -16l11 0m-11 0l5 10M3351 2946l-30 14l7 -10m-7 10l12 1M3784 2956l-2 -26M4113 2925l-3 23M4609 2963l17 -28l0 13m0 -13l-11 6M4855 2952l-25 -2M5129 2958l18 -18M5736 2940l-23 -8M5871 2955l-16 -11M6341 2944l-21 -6M2102 2999l30 -10l-8 9m8 -9l-12 -3M2203 2993l25 -22l-4 12m4 -12l-12 2M3405 2974l-28 16l6 -11m-6 11l12 0M4620 2969l-31 16l7 -11m-7 11l13 1M5173 2978l32 -2l-10 7m10 -7l-11 -5M5826 2998l22 -14l-4 9m4 -9l-10 0M6015 2987l14 16M6119 2970l6 20M6577 2985l15 23l-9 -5m9 5l0 -10M3064 3020l-13 17M3577 3028l-25 -12l10 -1m-10 1l6 9M4242 3036l15 -28l1 12m-1 -12l-10 6M4584 3010l0 31l-6 -10m6 10l6 -10M5087 3023l-20 5M5434 3019l28 5l-10 4m10 -4l-8 -7M2291 3081l31 -9l-8 9m8 -9l-12 -3M2536 3080l-30 -14l12 -2m-12 2l7 10M2777 3054l-18 31l0 -14m0 14l12 -7M2826 3066l-27 26l4 -14m-4 14l14 -3M3080 3057l22 27l-12 -4m12 4l-2 -13M3189 3061l-34 7l10 -9m-10 9l12 5M3227 3079l-7 -21M3441 3078l25 1M3624 3080l11 -19M6193 3086l18 -6M2459 3144l6 -33l4 12m-4 -12l-9 9M4614 3115l15 14M5423 3122l-24 15l5 -9m-5 9l11 0M5745 3107l-19 10M6324 3108l-20 10M6402 3124l26 6l-10 3m10 -3l-7 -7M2263 3172l-20 -11M3313 3149l-8 24M3445 3160l24 19l-12 -2m12 2l-4 -11M3674 3147l28 20l-13 -1m13 1l-5 -12M4036 3168l32 3l-11 5m11 -5l-10 -7M5028 3171l-31 4l9 -8m-9 8l11 5M5882 3154l18 11M2847 3207l-22 -2M3276 3179l0 36l-7 -12m7 12l7 -12M3477 3216l-13 -13M4141 3213l29 -23l-5 13m5 -13l-14 2M4342 3224l5 -17M6116 3203l-31 9l8 -9m-8 9l12 3M6249 3196l-33 1l11 -7m-11 7l11 6M6251 3199l35 6l-12 5m12 -5l-10 -9M2162 3232l12 24l-9 -5m9 5l1 -10M3676 3261l1 -34l6 11m-6 -11l-7 11M3714 3244l29 6l-11 4m11 -4l-8 -8M3819 3240l-3 22M4529 3238l25 7l-10 3m10 -3l-7 -7M5379 3264l18 -17M5570 3248l-16 23l1 -11m-1 11l10 -4M6402 3260l-20 -2M6594 3236l-30 18l6 -12m-6 12l13 0M2299 3287l22 -3M2585 3299l20 7M2653 3283l-4 28l-4 -10m4 10l7 -8M5623 3276l3 24M3132 3352l-8 -37l10 10m-10 -10l-5 14M3954 3334l-19 21l2 -10m-2 10l10 -3M4627 3332l21 26l-12 -4m12 4l-1 -13M5152 3339l-14 -21M5249 3342l-26 12l6 -9m-6 9l11 1M5379 3355l16 -12M2266 3373l17 10M2455 3378l25 1M3203 3383l-31 14l7 -11m-7 11l13 1M3354 3366l-26 22l4 -12m-4 12l13 -2M5050 3398l-25 -15l11 0m-11 0l5 10M6454 3377l35 -7l-10 9m10 -9l-13 -5M2538 3408l-4 27l-4 -9m4 9l6 -8M2857 3438l-3 -28l6 9m-6 -9l-5 10M3126 3433l-4 -32l7 9m-7 -9l-5 11M3710 3413l28 17l-13 0m13 0l-6 -11M5397 3441l-17 -9M5478 3428l-16 12M5885 3414l-11 18M5908 3426l26 8l-10 3m10 -3l-7 -8M6355 3437l-24 -4M6551 3426l29 10l-11 3m11 -3l-7 -9M2438 3456l23 23l-12 -3m12 3l-3 -12M2848 3473l32 -18l-7 12m7 -12l-14 -1M3140 3454l20 13M3572 3470l-20 -14M3857 3478l-23 -5M5866 3462l-23 9M6371 3466l17 31l-12 -7m12 7l1 -13M2111 3532l13 -16M2697 3543l8 -36l4 13m-4 -13l-10 10M2885 3525l2 -20M5371 3506l30 4l-10 5m10 -5l-9 -7M5893 3513l-30 -18l13 0m-13 0l6 12M6421 3516l33 13l-13 2m13 -2l-8 -11M6583 3496l-22 30l1 -14m-1 14l13 -6M2720 3556l34 11l-13 3m13 -3l-9 -10M3521 3585l12 -34l3 13m-3 -13l-11 8M3879 3549l22 16l-10 -1m10 1l-4 -10M4023 3560l4 -22M4560 3558l27 14l-12 1m12 -1l-6 -10M4718 3569l-13 -13M5704 3568l26 -20l-5 12m5 -12l-13 1M6244 3542l-17 26l0 -12m0 12l11 -5M6470 3559l-26 17l5 -11m-5 11l12 -1M2286 3620l20 -19l-3 10m3 -10l-10 2M3047 3620l-22 -20l11 2m-11 -2l3 11M3715 3596l32 12l-13 2m13 -2l-8 -10M5955 3587l-31 11l8 -10m-8 10l12 2M2422 3629l3 38l-8 -12m8 12l7 -13M2943 3657l29 -13l-7 10m7 -10l-12 -2M4335 3640l31 -3l-9 7m9 -7l-10 -5M4728 3625l-28 24l4 -13m-4 13l14 -2M4920 3653l33 8l-12 4m12 -4l-9 -9M5327 3648l-24 10l6 -8m-6 8l10 1M5477 3663l-35 -11l13 -3m-13 3l9 10M6117 3635l25 13l-11 1m11 -1l-6 -9M6273 3638l20 32l-13 -7m13 7l0 -14M2057 3697l29 -22l-5 13m5 -13l-14 1M2162 3701l-19 -24l11 4m-11 -4l1 11M2518 3713l3 -31l5 11m-5 -11l-7 9M2906 3691l-24 -18l11 1m-11 -1l4 10M5260 3703l-34 -6l12 -5m-12 5l10 9M5481 3705l1 -26M6280 3703l23 -7M3433 3737l-22 12M3556 3719l12 17M4401 3725l-18 9M4562 3743l29 -4l-9 7m9 -7l-10 -5M4610 3720l13 23l-9 -5m9 5l0 -10M4808 3731l-19 20l2 -10m-2 10l10 -3M4973 3754l11 -32l3 12m-3 -12l-10 8M5255 3721l8 26l-8 -7m8 7l3 -10M6434 3736l32 4l-11 5m11 -5l-9 -8M2534 3803l-10 -29l9 7m-9 -7l-2 11M3200 3764l28 18l-13 0m13 0l-6 -12M3455 3781l-32 11l8 -10m-8 10l13 3M4040 3755l9 33l-9 -9m9 9l4 -12M4477 3776l-23 -2M5068 3778l-16 -20M5713 3787l-33 -15l14 -2m-14 2l8 11M6446 3768l-5 25M2292 3816l-25 26l3 -14m-3 14l13 -4M2381 3838l-16 -33l12 7m-12 -7l-1 14M2660 3806l-22 19l3 -10m-3 10l11 -2M4247 3835l-7 -25l7 7m-7 -7l-3 10M5205 3816l17 24l-10 -4m10 4l-1 -11M5339 3819l-37 -5l13 -6m-13 6l11 9M5347 3830l3 -22M5773 3834l-20 -19l10 2m-10 -2l3 10M5845 3832l26 -14l-6 9m6 -9l-11 -1M5901 3834l17 -22l-1 11m1 -11l-10 4M6087 3820l34 7l-12 4m12 -4l-10 -9M6147 3825l-9 -23M6171 3835l31 -13l-7 10m7 -10l-13 -2M6411 3814l11 29l-9 -7m9 7l2 -12M2407 3850l-17 19M2462 3850l20 24l-11 -4m11 4l-2 -12M2753 3868l18 -18M3488 3851l29 21l-13 -1m13 1l-5 -13M4177 3875l-6 -17M4423 3885l-29 -15l12 -1m-12 1l6 11M4621 3864l-27 22l4 -12m-4 12l13 -2M5847 3881l0 -22M6059 3848l14 17M3979 3888l12 25l-9 -6m9 6l1 -11M4029 3899l-28 3l8 -7m-8 7l10 4M4090 3909l-31 -6l11 -4m-11 4l9 8M4668 3914l-18 5M5585 3892l25 22l-12 -2m12 2l-4 -12M6188 3903l-22 4M6230 3911l-21 7M6380 3892l-6 25M2572 3961l-14 -11M3118 3961l9 -21M3594 3958l-31 7l9 -8m-9 8l11 4M3727 3972l-19 -14M4151 3973l-9 -29l8 8m-8 -8l-3 11M6039 3969l-18 -11M6292 3981l20 -32l0 14m0 -14l-13 6M6544 3954l-35 -9l13 -4m-13 4l9 10M2693 4001l5 -21M3275 3989l17 8M3410 3982l20 26l-12 -4m12 4l-1 -13M4214 4008l-13 -28l10 7m-10 -7l-2 12M6416 4019l14 -35l2 14m-2 -14l-11 8M2360 4053l-19 -5M4561 4037l2 24M4857 4053l15 -35l2 14m-2 -14l-12 8M6041 4053l-27 -11l11 -2m-11 2l7 9M6463 4043l22 -2M2098 4105l-31 -16l13 -1m-13 1l7 11M2353 4103l23 -28l-2 14m2 -14l-13 4M2440 4107l19 -29l-1 13m1 -13l-12 5M5229 4085l-22 18l3 -10m-3 10l11 -2M5731 4088l-30 4l9 -7m-9 7l10 5M5858 4070l-3 23M6317 4071l9 28l-8 -7m8 7l3 -11M6394 4087l26 -6l-7 7m7 -7l-10 -3M2125 4123l-16 20M2202 4114l18 28l-11 -5m11 5l0 -12M5683 4124l19 27l-12 -5m12 5l-1 -13M5999 4132l-23 17l4 -10m-4 10l11 -1M6055 4122l29 21l-14 -1m14 1l-5 -13M2434 4164l-21 4M3698 4171l17 7M3805 4164l-9 24M3846 4154l-2 36l-6 -12m6 12l8 -11M4596 4189l-23 -29l13 5m-13 -5l2 14M4996 4194l1 -27l5 9m-5 -9l-6 9M5077 4173l16 19M5146 4195l-27 -23l13 2m-13 -2l4 13M6004 4161l-16 13M6072 4156l27 23l-13 -2m13 2l-4 -13M6403 4159l31 15l-13 1m13 -1l-7 -11M6511 4182l1 -25M2360 4222l-35 -14l14 -3m-14 3l9 11M3278 4200l-15 27l-1 -12m1 12l10 -6M4042 4220l21 -12M5530 4222l-3 -20M2587 4254l17 10M4422 4264l34 -6l-10 9m10 -9l-12 -5M4572 4259l25 4M5625 4280l28 -26l-4 14m4 -14l-14 3M6047 4273l12 -15M3444 4297l18 -1M4662 4296l-25 5M4864 4289l8 22M5199 4312l-2 -23M5942 4289l-20 21l3 -11m-3 11l11 -3M5997 4293l34 7l-12 5m12 -5l-10 -9M2266 4347l10 15M2643 4365l13 -30l2 12m-2 -12l-10 7M2910 4349l27 3l-9 4m9 -4l-8 -6M3852 4329l-22 24l3 -12m-3 12l12 -3M4258 4342l-14 19M4429 4362l24 -29l-2 14m2 -14l-14 5M4767 4347l4 29l-7 -9m7 9l4 -10M4815 4346l-23 3M4951 4349l-14 12M5006 4333l-31 13l7 -10m-7 10l13 2M5020 4361l24 2M5105 4357l37 -3l-11 8m11 -8l-12 -6M5447 4338l7 23M5930 4370l-25 -19l12 1m-12 -1l4 11M6197 4330l-19 29l1 -13m-1 13l12 -5M6284 4337l3 34l-8 -10m8 10l6 -11M6372 4351l0 18M2046 4411l22 -24l-2 12m2 -12l-12 3M2249 4373l6 32l-8 -9m8 9l4 -12M2535 4399l-26 4l8 -7m-8 7l9 4M2617 4389l20 -3M2765 4400l-20 -6M3169 4413l2 -25M3816 4383l-8 22M4091 4401l-14 -12M4523 4394l-35 12l9 -11m-9 11l14 3M5099 4410l-3 -26M5884 4412l21 -23l-2 11m2 -11l-11 3M6064 4408l18 -12M3340 4447l-17 -19M4475 4452l18 -24l-1 11m1 -11l-11 4M4846 4455l-12 -28l9 7m-9 -7l-2 11M5504 4427l-1 19M5556 4449l-22 -1M5811 4448l13 -33l2 13m-2 -13l-11 8M2657 4466l10 34l-10 -9m10 9l3 -13M2770 4458l-8 30l-3 -11m3 11l9 -8M3060 4471l23 29l-13 -5m13 5l-2 -14M4018 4491l-33 -3l12 -6m-12 6l10 8M5181 4477l22 27l-12 -5m12 5l-2 -13M2090 4526l-13 16M2279 4524l-25 -14l11 0m-11 0l5 10M2327 4506l7 36l-9 -10m9 10l5 -13M3204 4524l-3 26l-4 -9m4 9l6 -8M3233 4516l15 22l-9 -4m9 4l0 -10M3382 4549l-12 -32l10 8m-10 -8l-3 13M3785 4520l0 36l-7 -12m7 12l7 -12M4107 4521l31 4l-11 5m11 -5l-9 -7M5131 4512l-20 26l1 -12m-1 12l12 -4M6247 4509l-12 32l-3 -13m3 13l10 -8M3304 4571l31 16l-13 1m13 -1l-7 -11M3704 4569l25 16l-11 0m11 0l-5 -10M4653 4571l-23 -13l10 0m-10 0l5 9M4892 4577l-23 8M5900 4580l-26 -7l10 -3m-10 3l7 7M6452 4565l-30 13l7 -10m-7 10l12 2M2703 4636l-14 -35l11 8m-11 -8l-2 14M3018 4613l-9 -18M3444 4630l-16 -33l12 7m-12 -7l-1 14M3457 4627l20 -15M4906 4617l-23 -15l10 0m-10 0l4 9M5286 4605l-20 21l2 -11m-2 11l11 -3M5654 4612l-24 -3M6098 4614l-27 -17l12 0m-12 0l5 11M6189 4606l11 31l-10 -8m10 8l3 -12M6324 4630l-13 -16M6509 4616l-26 9l7 -8m-7 8l10 2M2834 4658l12 -19M3109 4661l36 -12l-9 11m9 -11l-14 -3M3695 4664l-21 -5M4672 4660l33 -13l-8 11m8 -11l-13 -2M5236 4671l17 -20l-1 10m1 -10l-10 3M5951 4657l-23 -12M2774 4720l24 -19l-4 11m4 -11l-11 1M3149 4712l-4 -18M3569 4718l-2 -22M3884 4691l13 19M4673 4702l-8 20M5730 4698l-6 30l-4 -11m4 11l8 -9M3314 4756l-18 -21l10 3m-10 -3l2 10M3365 4722l-1 31l-6 -10m6 10l6 -10M3604 4762l-15 -33l12 8m-12 -8l-2 14M3988 4754l4 -28l4 10m-4 -10l-7 8M4215 4760l33 -17l-7 12m7 -12l-14 -1M4446 4740l24 0M4765 4746l27 -8l-7 8m7 -8l-10 -3M5387 4762l-18 -22l10 3m-10 -3l2 11M5511 4742l18 15M6296 4757l11 -20M2551 4799l-23 -9M2700 4801l-15 -19M6472 4775l-2 20M3112 4853l7 -26l3 10m-3 -10l-8 7M3779 4823l-18 4M4038 4836l32 -10l-8 10m8 -10l-12 -3M4172 4833l18 -6M5069 4830l-33 2l10 -7m-10 7l11 6M5241 4826l-4 21M2223 4890l5 -28l4 10m-4 -10l-7 8M4212 4888l-1 -35l7 11m-7 -11l-7 11M4337 4871l-3 37l-6 -13m6 13l8 -11M4570 4886l27 1l-9 5m9 -5l-9 -6M5617 4886l22 -5M6006 4865l-9 19M6357 4887l23 -19l-4 11m4 -11l-11 2M6421 4893l-12 -26l9 6m-9 -6l-1 11M3966 4922l-25 10l6 -8m-6 8l10 2M4060 4924l-28 -20l13 1m-13 -1l5 12M4176 4909l16 22l-10 -4m10 4l-1 -10M4383 4938l-36 -11l14 -4m-14 4l9 11M4931 4937l0 -27l5 9m-5 -9l-5 9M2640 4971l5 -23M2803 4958l32 18l-14 1m14 -1l-7 -12M2904 4962l31 6l-11 4m11 -4l-9 -8M3017 4977l6 -17M4541 4983l-10 -15M4950 4974l4 -27l4 10m-4 -10l-7 8M5227 4968l-21 -9M5366 4965l-16 17M5493 4981l17 -13M5590 4981l-2 -23M5937 4969l18 3M6141 4976l6 -37l6 13m-6 -13l-9 11M2284 5032l24 -26l-3 13m3 -13l-13 3M2756 4998l16 33l-12 -8m12 8l1 -14M2854 4988l2 36l-8 -11m8 11l6 -12M2935 5003l23 13l-10 0m10 0l-5 -9M3583 4996l-6 20M3653 5003l-30 19l6 -12m-6 12l14 0M3741 5006l-22 12M4241 4991l-1 19M4321 4996l21 18l-11 -2m11 2l-3 -10M4545 5021l-4 -23M2487 5055l34 5l-12 5m12 -5l-10 -8M3478 5056l-24 -4M3919 5052l23 7M4222 5032l-13 26l-1 -11m1 11l9 -6M4891 5038l-7 17M5215 5041l-5 24M5253 5060l6 -23M6437 5060l-35 4l11 -8m-11 8l12 6M6556 5054l-17 17M2708 5104l15 -12M2819 5117l-28 -20l13 1m-13 -1l5 12M2979 5078l4 36l-9 -11m9 11l6 -12M3058 5092l31 -1l-10 6m10 -6l-10 -6M4125 5114l16 -24l-1 11m1 -11l-10 4M4280 5114l5 -32l5 11m-5 -11l-8 9M4568 5100l-15 11M4696 5104l-14 -29l11 7m-11 -7l-1 12M4965 5089l19 22l-11 -3m11 3l-2 -11M5510 5089l4 27l-7 -8m7 8l4 -10M5736 5074l12 34l-11 -8m11 8l3 -13M5940 5098l-37 5l11 -9m-11 9l13 6M6108 5094l17 -7M6289 5078l13 26l-9 -6m9 6l1 -11M6381 5092l18 21l-10 -3m10 3l-2 -10M6471 5089l17 12M3011 5157l-20 -32l13 6m-13 -6l0 14M3487 5144l-21 11M4853 5135l-3 33l-6 -11m6 11l7 -10M2639 5195l-36 -8l13 -4m-13 4l10 10M2739 5178l19 30l-12 -6m12 6l0 -14M3636 5172l-22 12M4003 5193l-24 4M4780 5202l24 -15l-5 10m5 -10l-11 0M5972 5203l16 -28l0 12m0 -12l-11 6M2663 5214l-20 32l0 -14m0 14l13 -6M4267 5227l-34 6l10 -9m-10 9l12 5M4941 5225l-1 24M5267 5240l-15 -18M5608 5235l-22 -4M5813 5236l27 -20l-5 12m5 -12l-13 1M6098 5241l-18 -27l11 5m-11 -5l1 12M6167 5240l28 3l-10 5m10 -5l-8 -6M2082 5297l-9 -28l8 7m-8 -7l-3 11M2663 5276l-11 -25l8 6m-8 -6l-2 10M2866 5279l-36 9l10 -10m-10 10l14 4M3091 5289l-15 -21M3334 5293l30 -18l-6 12m6 -12l-13 0M3438 5288l9 -35l4 13m-4 -13l-10 10M3551 5293l-15 -16M4767 5277l19 -20l-2 10m2 -10l-10 3M5548 5274l14 21M5877 5297l13 -33l2 13m-2 -13l-11 8M2080 5329l12 -22M2332 5308l-13 13M2855 5321l-35 -13l14 -3m-14 3l9 11M2886 5314l-33 10l9 -10m-9 10l13 3M3614 5322l-23 15l5 -9m-5 9l11 0M5396 5329l21 1M5547 5338l2 -19M5673 5305l13 16M5872 5330l-16 -14M6581 5315l21 15M2171 5365l-22 -19l11 2m-11 -2l3 11M3588 5363l-15 16M4211 5367l20 -19l-2 10m2 -10l-10 2M4781 5385l1 -33l6 11m-6 -11l-7 10M5000 5382l17 -20l-2 10m2 -10l-10 3M5282 5381l-4 -36l8 11m-8 -11l-6 12M6308 5382l-22 -22l11 3m-11 -3l3 11M2078 5398l27 8l-10 3m10 -3l-7 -8M2589 5402l16 22l-9 -4m9 4l-1 -10M2741 5417l-23 -4M3363 5399l26 14l-11 1m11 -1l-6 -10M3965 5391l8 31l-9 -8m9 8l4 -11M4274 5415l29 4l-10 5m10 -5l-9 -7M4954 5415l-14 -16M5218 5425l-3 -20M2966 5450l24 17l-11 -1m11 1l-4 -10M3227 5439l3 27l-6 -8m6 8l4 -9M3415 5459l-23 3M5081 5466l-32 -11l12 -3m-12 3l8 10M5361 5452l34 -10l-9 10m9 -10l-13 -3M6000 5451l27 6l-10 3m10 -3l-8 -8M2150 5506l-6 -31l8 9m-8 -9l-4 11M2528 5504l-34 -14l14 -2m-14 2l8 11M3185 5486l32 2l-11 6m11 -6l-10 -7M4017 5508l29 -11l-7 9m7 -9l-12 -2M4062 5497l11 -21M5070 5506l11 -36l4 14m-4 -14l-11 9M5765 5493l34 -3l-11 8m11 -8l-12 -6M5898 5508l11 -32l3 12m-3 -12l-10 8M5998 5513l-12 -29l10 7m-10 -7l-2 12M6272 5484l-7 18M2330 5542l14 14M3629 5547l19 -26l-1 12m1 -12l-11 5M3870 5536l3 27l-6 -8m6 8l5 -9M4592 5525l25 22l-12 -2m12 2l-4 -12M4783 5546l-18 -27l11 5m-11 -5l0 12M4838 5530l-20 25l1 -12m-1 12l11 -4M5444 5544l-26 -19l12 1m-12 -1l5 11M5865 5545l25 -16l-5 10m5 -10l-11 0M3529 5586l-32 13l8 -11m-8 11l13 2M4026 5573l-4 18M5201 5586l31 -12l-8 10m8 -10l-13 -2M6184 5579l23 12M2557 5635l30 -8l-8 9m8 -9l-11 -3M3138 5631l-7 -29l8 8m-8 -8l-4 11M3261 5638l9 -22M3806 5635l15 -29l1 12m-1 -12l-10 6M4004 5617l3 30l-7 -9m7 9l5 -10M5101 5631l-13 -15M5464 5627l1 22M5985 5620l-25 0M6444 5631l-22 -29l13 5m-13 -5l1 14M2586 5670l15 12M3005 5660l21 5M3177 5666l33 -4l-10 8m10 -8l-12 -5M3236 5666l27 14l-11 1m11 -1l-6 -10M3673 5679l-25 -6M4445 5654l-19 25l1 -12m-1 12l11 -4M4910 5676l-21 9M5355 5654l23 24l-12 -3m12 3l-3 -12M5431 5678l32 -4l-10 8m10 -8l-11 -5M5918 5660l-17 13M6177 5665l21 31l-13 -6m13 6l-1 -14M2485 5691l-3 36l-6 -12m6 12l8 -11M2521 5711l25 -5M3007 5724l-27 -15l12 0m-12 0l6 10M3457 5703l-11 35l-3 -14m3 14l11 -9M3521 5711l30 2l-10 5m10 -5l-9 -7M3810 5693l-7 24M4381 5721l-31 4l9 -8m-9 8l11 5M4999 5709l3 18M5752 5713l-20 -14M6243 5704l17 27l-11 -5m11 5l0 -12M6342 5736l-11 -20M3817 5756l-35 -11l13 -3m-13 3l9 11M3971 5755l16 27l-11 -6m11 6l0 -12M4362 5767l-25 -1M4843 5750l21 18l-10 -2m10 2l-3 -10M5019 5760l28 -8l-7 8m7 -8l-11 -3M5335 5767l22 -2M5621 5773l13 -25l1 11m-1 -11l-9 5M5799 5754l25 -1M5967 5734l-6 28l-3 -10m3 10l8 -8M6068 5750l-27 22l4 -12m-4 12l13 -2M6241 5741l0 19M2170 5824l-1 -30l6 9m-6 -9l-6 10M2824 5798l37 -1l-12 8m12 -8l-12 -7M2877 5807l25 -2M3205 5800l31 18l-14 0m14 0l-6 -12M3237 5798l35 -6l-10 9m10 -9l-13 -5M3343 5805l25 -12l-5 9m5 -9l-10 -1M3420 5786l-26 23l4 -13m-4 13l13 -2M3463 5821l-30 -21l14 1m-14 -1l6 13M3802 5800l9 21M3866 5784l-20 26l1 -13m-1 13l12 -4M4841 5814l-22 0M5153 5782l-7 21M5626 5820l-30 -17l13 0m-13 0l6 11M6101 5806l24 15l-11 0m11 0l-5 -10M3671 5830l-32 16l7 -11m-7 11l13 1M4264 5848l-8 16M4514 5832l18 18M4631 5833l-1 27l-5 -9m5 9l6 -9M6066 5856l-34 -15l14 -2m-14 2l8 12M2240 5868l14 25l-10 -5m10 5l0 -11M2433 5900l-7 -19M2473 5909l8 -19M2955 5880l-26 26l3 -13m-3 13l13 -3M2980 5881l2 35l-8 -11m8 11l6 -12M3079 5878l17 23l-10 -4m10 4l-1 -11M3121 5873l16 16M3591 5907l-24 -21l12 2m-12 -2l4 12M3733 5904l-17 -8M3766 5907l-1 -22M3795 5878l22 27l-13 -4m13 4l-2 -13M3948 5876l0 34l-7 -11m7 11l7 -11M4938 5896l-17 -5M4961 5910l-10 -21M3166 5939l-31 -19l14 0m-14 0l6 12M4677 5936l-19 -7M4842 5936l19 -17M6323 5953l8 -20M2359 5983l-31 3l10 -7m-10 7l11 5M3158 5977l17 -6M3673 5974l-2 19M3740 5991l-14 -25l10 5m-10 -5l0 11M4078 5984l29 -7l-8 8m8 -8l-11 -4M4442 5969l21 8M4519 5966l-18 25l1 -12m-1 12l11 -4M4884 5954l-22 31l1 -14m-1 14l13 -6M5227 5982l13 -13M5277 5989l7 -29l3 11m-3 -11l-8 8M5558 5991l21 -18l-3 10m3 -10l-10 2M2349 6038l14 -31l1 13m-1 -13l-11 7M2554 6007l-24 24l3 -13m-3 13l13 -3M2869 6032l2 -29l5 10m-5 -10l-6 9M3855 6013l-26 -1l9 -5m-9 5l8 5M3913 6031l20 -10M4295 6017l22 15l-10 0m10 0l-4 -9M4325 6013l23 12M4630 6023l-33 5l10 -8m-10 8l12 5M4759 6039l20 -16M5300 6000l6 27l-7 -8m7 8l3 -10M6581 6031l16 -13M2339 6089l-6 -35l9 10m-9 -10l-5 12M2611 6059l25 4M3340 6061l12 23l-8 -5m8 5l1 -10M3645 6039l-13 33l-2 -13m2 13l11 -8M3737 6047l-7 24M4004 6083l-23 -26l13 4m-13 -4l2 13M4740 6086l-2 -20M4781 6047l-8 27l-3 -10m3 10l8 -7M5277 6072l15 -21l-1 10m1 -10l-9 4M2788 6116l-17 9M3024 6112l-23 -7M4915 6131l-23 -22l12 2m-12 -2l3 12M4964 6101l31 14l-13 2m13 -2l-7 -11M6075 6088l18 25l-11 -5m11 5l-1 -12M2167 6137l-24 15l5 -10m-5 10l11 0M2538 6161l-4 -30l7 9m-7 -9l-5 11M3213 6133l-6 33l-5 -12m5 12l9 -9M3873 6167l-12 -13M5059 6156l-25 -4M5396 6156l-16 -14M2293 6200l34 10l-13 4m13 -4l-9 -10M2869 6218l18 -30l0 13m0 -13l-12 6M3263 6213l27 -7l-8 8m8 -8l-10 -3M4713 6219l4 -27l4 9m-4 -9l-7 8M5060 6195l32 14l-13 2m13 -2l-8 -11M5458 6188l-15 35l-2 -14m2 14l12 -8M5802 6214l24 -12l-6 9m6 -9l-10 -1M6213 6173l17 33l-12 -7m12 7l1 -14M6291 6199l-14 -14M2833 6262l31 -17l-7 12m7 -12l-13 0M2904 6266l-16 -32l12 7m-12 -7l-1 14M2924 6264l20 -25l-2 12m2 -12l-11 4M4279 6243l-16 15M4408 6226l9 26l-8 -6m8 6l2 -10M4744 6245l-16 -11M5311 6241l26 -1M2992 6286l24 -13l-5 9m5 -9l-10 -1M3274 6269l24 27l-13 -4m13 4l-2 -14M3476 6269l-5 36l-5 -13m5 13l9 -11M3878 6285l3 22M4663 6295l25 0M5030 6297l13 -36l3 14m-3 -14l-11 9M5269 6264l-17 25l1 -12m-1 12l11 -5M5911 6294l-14 -30l10 7m-10 -7l-2 12M2226 6327l-18 -10M3467 6320l-25 0M3683 6336l-20 7M4027 6320l-36 6l11 -9m-11 9l13 5M4539 6349l5 -24M5253 6309l-5 27l-4 -10m4 10l7 -8M5437 6329l-18 4M5747 6330l-18 9"/>
<path stroke="#f7d200" d="M2098 2452l11 11M2257 2439l-9 21M2512 2452l11 12M3027 2475l16 -21l-1 10m1 -10l-9 4M3158 2461l22 -16l-4 10m4 -10l-10 1M3317 2471l5 -14M3505 2458l-29 0l9 -6m-9 6l9 6M3759 2471l6 -28l4 10m-4 -10l-7 8M4183 2462l3 -17M4780 2459l-16 -17M4861 2452l7 24M5118 2464l-8 -12M5207 2452l-5 14M5326 2448l12 11M5854 2482l-12 -26l9 6m-9 -6l-1 11M5943 2469l-4 -13M6007 2459l31 20l-14 0m14 0l-6 -13M6279 2462l22 -10M2085 2515l18 -5M2133 2518l-2 -34l8 11m-8 -11l-6 12M2247 2502l-26 -10l10 -2m-10 2l7 8M2293 2495l-15 5M2558 2505l-16 -15M2983 2505l-16 17M3644 2508l16 2M3989 2492l-23 18l4 -10m-4 10l11 -1M4438 2507l-8 -24M4548 2521l-21 -17l10 1m-10 -1l3 10M5076 2517l8 -12M5615 2515l19 -3M5714 2520l9 -22M5814 2490l4 16M2203 2540l-12 27l-2 -11m2 11l9 -6M2438 2547l15 8M2948 2531l-9 17M3129 2533l14 17M3363 2565l-8 -16M3853 2542l4 13M4233 2561l-18 -14M4324 2533l-5 27l-4 -10m4 10l7 -8M4445 2553l27 9l-11 2m11 -2l-7 -8M4540 2551l22 -9M4739 2531l-4 16M5619 2535l-18 24l1 -11m-1 11l11 -4M5936 2536l-11 26l-2 -11m2 11l9 -6M6399 2532l-10 22M2074 2574l13 12M2456 2576l1 16M2675 2577l22 13M2782 2600l17 -12M3892 2582l-12 25l-1 -11m1 11l9 -6M3947 2591l-16 13M4040 2597l-17 -9M4454 2582l-16 20M4596 2583l-35 2l11 -8m-11 8l12 7M4984 2585l-1 22M5021 2604l13 -7M5219 2592l-11 -14M6188 2611l-8 -34l9 9m-9 -9l-4 12M6472 2600l-10 -14M2282 2627l16 8M2404 2635l-14 15M2649 2647l19 -6M2742 2647l11 -10M2985 2642l9 -13M3048 2632l-11 -16M3642 2631l-34 1l11 -7m-11 7l11 6M3685 2647l3 -13M3970 2632l-12 19M4054 2640l-13 -12M4458 2616l14 18M4600 2648l5 -18M4692 2641l-12 -18M4916 2657l1 -24M5247 2629l-2 16M5291 2628l-19 -5M5708 2655l-4 -19M5791 2658l11 -24l1 10m-1 -10l-8 6M5825 2627l28 -2l-9 6m9 -6l-10 -5M6111 2654l-1 -20M6263 2650l0 -26l5 9m-5 -9l-5 8M2145 2661l-4 20M2512 2699l-14 -35l11 9m-11 -9l-2 14M2696 2688l-10 -10M3179 2682l20 -9M3295 2671l2 17M3780 2693l10 -9M3995 2689l-23 -14l10 0m-10 0l5 9M4027 2678l10 22M4253 2669l-12 6M4448 2695l-8 -27l8 7m-8 -7l-3 11M4480 2674l16 0M4979 2667l1 28l-6 -9m6 9l5 -9M5348 2665l15 20M6273 2654l15 33l-11 -8m11 8l2 -14M2076 2710l-5 14M2208 2705l-18 17M2623 2729l-25 2M2729 2739l-24 -17l11 1m-11 -1l4 10M2742 2708l11 10M2809 2720l-24 10M2836 2711l17 12M3090 2709l-10 23M3484 2719l3 13M3905 2729l8 -21M4053 2729l-12 -26l9 6m-9 -6l-1 11M4417 2717l-10 13M4932 2722l-26 -14l11 -1m-11 1l6 10M6072 2712l-17 -1M6203 2725l-8 16M6299 2730l9 -16M2188 2770l-28 0l9 -6m-9 6l9 6M2686 2760l-11 9M2778 2778l-15 -4M2933 2762l-12 -11M3690 2749l10 17M3797 2783l-3 -17M3888 2774l-25 -1M3967 2784l8 -21M4303 2753l-22 12M4692 2766l-32 8l9 -9m-9 9l12 4M4804 2770l-13 14M5038 2771l-11 -8M5586 2766l21 15M5628 2775l21 -12M5807 2775l14 0M6090 2781l21 -11M6330 2766l-19 5M6481 2779l-19 -21l10 3m-10 -3l2 10M2579 2819l-10 -28l9 7m-9 -7l-2 11M2701 2811l9 -18M3399 2804l25 -9l-6 8m6 -8l-10 -2M3560 2815l-23 -7M3674 2834l2 -32l6 11m-6 -11l-7 10M4077 2807l12 11M4332 2791l-2 26M4475 2812l-21 -4M4486 2821l18 -12M4615 2825l-17 -21l10 3m-10 -3l1 10M5006 2813l18 -12M5329 2814l26 6l-10 3m10 -3l-7 -7M6087 2812l38 0l-12 8m12 -8l-12 -8M6163 2830l-1 -18M6355 2796l-4 28l-4 -10m4 10l7 -8M6476 2807l11 12M6571 2794l3 13M2420 2833l-6 22M2783 2861l12 3M3097 2856l14 -6M3387 2852l-19 -8M3651 2855l-8 -11M3700 2861l-11 -8M3980 2865l-7 -19M4482 2868l-18 -10M4982 2846l30 1l-10 6m10 -6l-10 -6M5457 2860l-19 10M5584 2857l7 -18M5625 2861l13 1M5675 2854l10 22M5853 2856l15 7M6052 2850l-8 -12M6197 2866l-16 -24l10 5m-10 -5l0 11M2156 2911l7 -11M2391 2909l4 -24M2433 2919l-1 -22M2586 2900l-29 -2l10 -5m-10 5l9 6M2706 2890l-6 34l-5 -12m5 12l9 -10M2977 2889l24 -1M3072 2892l15 1M3144 2891l-29 22l5 -13m-5 13l14 -1M3412 2882l-12 16M3620 2899l8 16M3899 2903l-4 12M4744 2906l-13 -6M4781 2903l-10 -10M5154 2898l-23 -15l11 0m-11 0l4 10M5667 2883l-10 18M5706 2896l-24 13l5 -9m-5 9l10 0M6061 2902l27 2l-9 5m9 -5l-8 -6M6423 2906l9 -10M6538 2890l-28 14l6 -10m-6 10l12 1M6563 2908l4 -21M2076 2948l12 -3M2508 2932l-22 4M2998 2945l19 14M3311 2944l-27 10l7 -9m-7 9l11 2M3615 2952l-16 -2M3736 2967l13 -31l2 13m-2 -13l-10 7M4201 2949l9 -23M4563 2949l2 -12M4985 2953l20 -20l-3 11m3 -11l-11 2M5554 2924l-17 22l1 -11m-1 11l10 -4M5638 2934l-18 13M6091 2962l13 -28l1 12m-1 -12l-10 6M6139 2931l-12 3M6180 2929l10 18M6552 2943l13 -14M2054 3000l24 -21l-4 12m4 -12l-12 2M2329 3006l12 -21M3098 2986l-20 -10M3354 2997l-11 -8M3450 2984l-13 0M3760 2994l20 -18l-3 10m3 -10l-10 2M3903 2984l-10 27l-2 -11m2 11l8 -7M4429 2995l-25 -24l13 3m-13 -3l3 13M4552 2992l-19 -19l10 2m-10 -2l2 10M5430 2982l-24 3M5612 2962l-1 32l-6 -11m6 11l7 -10M5714 2985l-21 15M5790 3012l-9 -29l9 8m-9 -8l-3 11M5890 2991l10 13M6199 3001l2 -12M6289 3006l12 -21M6411 2996l-25 -1M2238 3047l-13 -14M2769 3027l25 -4M3087 3013l19 17M3195 3015l11 27l-9 -6m9 6l2 -11M3325 3025l20 7M3454 3037l34 -5l-10 8m10 -8l-12 -5M3665 3025l-11 8M4796 3022l16 13M5040 3035l-14 13M5567 3034l20 10M5700 3019l-24 10l6 -8m-6 8l10 1M6151 3026l-7 26l-3 -10m3 10l7 -7M6514 3025l1 19M6542 3057l5 -38l6 13m-6 -13l-9 11M6575 3022l25 11l-10 1m10 -1l-6 -9M2171 3075l-22 -15l10 1m-10 -1l4 9M2567 3089l3 -12M2630 3065l-24 13l5 -9m-5 9l11 1M2856 3058l8 13M3033 3079l-17 -2M3139 3068l-7 16M3265 3076l15 1M3679 3081l1 -26l5 9m-5 -9l-6 8M3721 3089l21 -12M3763 3069l16 4M3961 3061l2 22M4017 3067l-21 14M4141 3090l5 -22M4278 3077l16 -2M4906 3075l22 -3M4980 3086l-9 -15M5288 3070l12 7M5420 3078l22 -20l-3 11m3 -11l-11 2M5458 3088l17 -7M5500 3089l34 -14l-8 11m8 -11l-14 -2M5710 3058l-7 11M6286 3066l13 -1M6343 3078l14 6M6408 3071l-26 -7l10 -3m-10 3l7 8M6577 3068l19 -7M2093 3134l11 -10M2151 3122l-16 -24l10 5m-10 -5l0 11M3284 3109l-15 20M3641 3119l15 17M4147 3092l9 34l-10 -9m10 9l4 -13M5062 3128l19 -3M5260 3123l24 6M5302 3102l0 28l-6 -9m6 9l5 -9M5562 3129l-23 -8M5775 3118l-12 -17M2299 3172l-19 -12M2398 3180l-4 -22M2571 3151l11 9M2674 3165l-7 14M2764 3173l-22 -22l12 3m-12 -3l3 12M3047 3164l-28 0l9 -6m-9 6l9 6M3572 3155l22 20l-11 -2m11 2l-3 -11M3638 3176l-10 -22M3912 3178l-8 -14M4023 3176l-27 -9l11 -2m-11 2l7 8M4139 3165l-14 -16M4621 3159l24 17l-11 -1m11 1l-4 -10M4689 3160l5 11M4872 3163l17 10M5147 3152l6 16M5235 3167l5 -21M5425 3142l-9 28l-3 -11m3 11l9 -7M5522 3168l-10 -7M5642 3182l21 -25l-2 12m2 -12l-12 4M6072 3168l8 -24M6110 3160l24 9M6352 3171l-18 -1M6394 3175l4 -15M2089 3207l-11 -15M2238 3207l-23 21l3 -11m-3 11l12 -2M2279 3195l-25 17l5 -11m-5 11l12 -1M2369 3226l0 -26l5 9m-5 -9l-5 9M2454 3216l11 -12M2743 3193l-13 24l0 -10m0 10l9 -5M2791 3212l-30 2l9 -6m-9 6l10 5M3199 3223l-13 -17M3344 3207l-26 9l7 -8m-7 8l10 2M3424 3216l-14 -14M3747 3194l-22 21l3 -11m-3 11l11 -2M3949 3213l-24 7M4287 3205l17 9M4794 3203l19 -3M4863 3202l-16 -3M5120 3215l19 3M5189 3208l-24 -6M5453 3198l-9 9M5592 3194l-22 7M5792 3205l-24 0M5871 3198l-18 7M6060 3210l-25 1M2243 3235l16 16M2341 3258l16 -24l-1 11m1 -11l-10 4M2378 3244l19 0M2463 3252l-33 6l10 -9m-10 9l12 5M2661 3253l15 16M2718 3248l2 -13M2965 3255l27 -7l-7 8m7 -8l-10 -3M3071 3254l9 13M3228 3244l-6 13M3298 3261l13 0M3358 3265l13 -17M3488 3260l-4 -15M3755 3239l13 22M3980 3273l18 -25l-1 12m1 -12l-11 4M4079 3246l21 -7M4361 3242l20 12M4408 3237l-11 21M4455 3268l7 -12M4493 3255l12 -9M4778 3255l-13 -11M5030 3250l-15 18M5108 3238l5 24M5351 3257l-26 -7l10 -3m-10 3l7 8M5879 3252l21 0M5921 3267l12 -22M5991 3266l-12 -10M2073 3276l22 18l-11 -1m11 1l-4 -10M2239 3307l-2 -12M2276 3304l20 1M2777 3301l23 -4M2972 3297l-20 0M3062 3281l-3 20M3245 3299l-2 -27l6 8m-6 -8l-5 9M3294 3273l3 24M3498 3283l17 14M3675 3291l-28 21l5 -12m-5 12l13 -1M3739 3292l5 14M3804 3285l-20 1M3942 3299l-6 -19M4208 3293l10 24M4429 3279l9 10M4671 3318l-3 -36l8 11m-8 -11l-6 12M5263 3296l21 17l-10 -1m10 1l-4 -10M5500 3315l-5 -35l8 10m-8 -10l-5 12M5870 3312l-2 -25M5944 3298l12 -11M6006 3284l11 29l-9 -7m9 7l2 -11M2393 3341l-14 -12M2521 3338l16 -2M3207 3347l22 -5M4138 3348l20 -21l-2 11m2 -11l-11 3M4286 3333l-7 28l-3 -10m3 10l8 -8M4446 3332l18 6M4567 3347l-11 -15M4978 3343l-26 -4l9 -4m-9 4l8 7M5506 3324l19 13M6129 3340l-19 12M6297 3340l-12 19M6380 3328l6 13M6484 3344l20 -7M6592 3325l-16 12M2115 3373l31 7l-11 4m11 -4l-9 -8M2194 3370l-25 13l5 -9m-5 9l11 1M2231 3374l14 4M2314 3369l27 9l-11 3m11 -3l-7 -8M2434 3376l-24 14l5 -9m-5 9l11 0M2591 3374l25 5M3067 3380l-29 -2l10 -5m-10 5l9 6M3368 3380l17 -4M3577 3389l-16 -30l11 7m-11 -7l-1 13M3607 3398l-6 -11M4070 3381l-14 2M4159 3370l15 6M4392 3391l-8 -13M4467 3385l16 -4M4678 3363l-1 27l-5 -9m5 9l6 -9M4761 3400l-10 -14M5177 3391l-9 -22M5218 3375l-15 1M5311 3385l2 17M5497 3383l-6 15M5649 3400l-22 -15l10 0m-10 0l4 9M5725 3371l9 17M5928 3383l-24 3M5990 3403l30 -20l-6 13m6 -13l-14 0M6037 3377l14 -2M6198 3398l-21 -11M6370 3380l1 -17M6537 3365l17 25l-11 -5m11 5l-1 -12M2933 3414l28 10l-11 2m11 -2l-7 -9M3176 3413l-22 26l2 -13m-2 13l12 -4M3271 3438l3 -20M3380 3431l26 -20l-4 12m4 -12l-12 1M3507 3437l-6 -21M3540 3439l1 -32l6 11m-6 -11l-7 10M4004 3420l-7 17M4742 3431l-6 -25M5530 3424l-27 0l9 -5m-9 5l9 5M6220 3431l-19 -17M6422 3446l19 -20l-2 10m2 -10l-10 3M3191 3453l-2 20M3523 3478l-24 -11l10 -1m-10 1l6 8M3745 3476l12 2M4141 3451l24 22l-12 -3m12 3l-3 -12M4285 3464l8 22M4330 3472l10 -18M4448 3481l-29 -9l11 -3m-11 3l7 9M4518 3477l18 3M4671 3488l-6 -16M5773 3469l-14 -11M5818 3472l-9 15M5960 3486l-12 -12M6192 3484l-1 -14M6237 3455l-22 10M6551 3460l7 28l-8 -8m8 8l3 -11M2161 3512l-23 1M2303 3518l-15 -25l10 5m-10 -5l0 11M3255 3495l20 19l-10 -2m10 2l-3 -10M3439 3499l21 30l-13 -6m13 6l-1 -14M3485 3507l0 21M3790 3524l-21 -13M4337 3512l-18 11M4401 3500l14 28l-10 -6m10 6l1 -12M4845 3529l-21 -13M5113 3503l-1 24M5196 3538l5 -25M5461 3515l2 -21M5534 3521l-12 5M5765 3510l-22 17l4 -10m-4 10l10 -1M5844 3495l10 20M6175 3516l-29 1l9 -6m-9 6l10 5M6271 3517l-18 -2M6331 3512l21 4M2634 3545l2 12M2793 3559l-19 4M3109 3572l-8 -10M4537 3556l-27 -7l10 -3m-10 3l8 8M5036 3564l-14 -12M5229 3560l-18 3M5367 3572l-10 -14M5417 3567l-20 -20l10 3m-10 -3l2 10M5482 3575l5 -21M5679 3556l14 19M5774 3553l-9 -9M5968 3561l-24 13l5 -9m-5 9l11 0M6092 3559l18 3M6188 3546l-12 10M6360 3559l-4 -14M6424 3578l0 -23M2208 3603l6 -17M2250 3593l-17 2M2325 3592l22 30l-13 -5m13 5l-1 -14M2399 3618l-2 -22M3166 3593l16 6M3813 3613l7 -17M3919 3596l-1 28l-5 -9m5 9l6 -9M4629 3596l9 25l-8 -6m8 6l2 -10M4738 3602l-22 6M5430 3621l-13 -35l11 9m-11 -9l-3 14M5492 3608l-21 -9M5523 3601l-28 4l8 -7m-8 7l10 4M5559 3620l-8 -14M5864 3588l24 15l-11 0m11 0l-5 -10M6404 3585l-8 21M6468 3618l19 -16M2608 3656l-1 -19M2878 3670l-24 -26l13 4m-13 -4l3 13M3263 3650l27 -7l-7 8m7 -8l-10 -3M3331 3646l21 -3M3571 3645l-22 11M3833 3650l2 -17M3878 3659l4 -29l5 10m-5 -10l-7 9M4016 3647l15 -17M4426 3634l14 21M4528 3656l-1 -13M4581 3651l-1 -28l6 9m-6 -9l-5 9M5364 3641l-4 19M5498 3662l-1 -23M6051 3653l-17 2M6327 3642l12 5M2114 3682l-14 26l-1 -11m1 11l10 -6M2298 3693l-12 -5M2359 3678l-12 6M2628 3676l-16 27l0 -12m0 12l11 -6M3109 3709l16 -28l0 12m0 -12l-11 6M3237 3701l-30 -1l10 -5m-10 5l9 6M3265 3704l-8 -12M3476 3677l23 16l-10 -1m10 1l-4 -10M3531 3689l12 15M4729 3705l9 -24M4864 3693l15 -24l0 11m0 -11l-10 5M4933 3693l-24 10M5413 3676l13 16M5521 3702l8 -20M5788 3691l-9 -17M5831 3703l-1 -19M6156 3673l10 22M6433 3679l15 2M2205 3740l36 -8l-10 10m10 -10l-13 -5M2358 3728l16 21l-10 -4m10 4l-1 -10M2594 3724l-2 24M2650 3721l-20 20l3 -11m-3 11l11 -3M2707 3723l-17 6M2860 3734l21 -4M3149 3730l-4 24M4360 3743l-14 -20M4496 3726l-14 1M4676 3721l-6 32l-4 -12m4 12l8 -9M5222 3754l15 -21M5414 3728l-11 -6M5535 3732l-9 21M6083 3742l5 -26l4 9m-4 -9l-7 7M6417 3738l-2 -22M2118 3784l-13 1M2706 3790l9 -36l4 13m-4 -13l-10 10M2833 3787l14 -27l1 12m-1 -12l-10 6M2926 3776l16 9M3123 3771l-14 -3M3275 3793l-13 -11M3405 3761l-3 29l-5 -10m5 10l7 -9M5009 3763l4 23M5200 3771l-5 22M5330 3778l-6 20M5432 3775l-10 16M5524 3768l-4 24M6116 3793l-7 -10M6569 3776l25 2M2419 3835l-11 -35l10 9m-10 -9l-4 14M2467 3806l-20 15M2512 3816l-19 21l2 -11m-2 11l10 -3M2874 3828l-15 -5M3155 3830l-29 -3l10 -5m-10 5l9 7M3373 3821l18 3M3708 3814l-12 10M3880 3801l-7 32l-4 -12m4 12l9 -9M3951 3812l33 17l-14 1m14 -1l-7 -12M4308 3826l-26 4M4545 3824l-23 0M4998 3813l-2 20M5096 3825l-12 7M5187 3814l-10 21M5490 3832l13 -7M5736 3837l-6 -13M5809 3836l9 -9M6450 3817l17 -2M6537 3820l32 -6l-9 8m9 -8l-12 -5M2256 3875l3 -19M2337 3855l17 20l-9 -3m9 3l-1 -10M2439 3868l2 13M3045 3859l-19 22l2 -11m-2 11l11 -3M3203 3869l18 7M3361 3884l1 -29l5 9m-5 -9l-6 9M3790 3872l-24 -8M3829 3882l-21 -17l10 1m-10 -1l4 10M4274 3861l13 -6M4470 3875l-20 -19l10 2m-10 -2l3 10M4554 3880l5 -28l4 10m-4 -10l-7 8M4864 3855l24 2M4975 3863l-30 2l9 -7m-9 7l10 5M5100 3863l-6 27l-3 -10m3 10l7 -7M5205 3868l-23 -5M5339 3851l-2 25M5388 3860l-24 -9M5606 3881l-11 -25l8 6m-8 -6l-2 10M5646 3855l6 20M5875 3874l23 -15l-5 9m5 -9l-10 0M6009 3853l25 12l-11 1m11 -1l-6 -9M3075 3909l-15 17M3757 3910l-10 9M4364 3910l-18 5M4395 3913l-18 -9M4566 3918l20 -14M4862 3924l-17 -11M5454 3910l6 14M5681 3919l9 -14M5782 3933l-4 -25M6268 3908l13 -4M6511 3895l2 24M2525 3950l20 6M2875 3956l21 4M3030 3960l6 -31l4 11m-4 -11l-8 9M3175 3955l7 14M3214 3951l15 12M3950 3968l18 -12M4102 3943l-15 1M4419 3948l-23 21l3 -11m-3 11l12 -2M5072 3950l-20 5M5671 3975l-11 -23M5892 3951l6 17M2078 3990l22 1M2136 4007l4 -17M3038 4006l15 -13M3337 3992l-1 14M3376 3976l10 27l-9 -7m9 7l2 -11M3658 4000l-22 3M4059 3978l2 30l-7 -9m7 9l5 -10M4892 4006l4 -15M5486 3991l35 9l-13 4m13 -4l-10 -10M5598 3987l-11 24l-1 -10m1 10l8 -6M5819 4006l17 -24l-1 11m1 -11l-10 4M5849 3990l33 14l-14 2m14 -2l-8 -11M5958 4019l7 -18M6458 3973l16 34l-12 -8m12 8l1 -14M2251 4051l14 3M2811 4046l-1 14M2862 4039l-14 -12M3770 4047l-20 -11M4095 4063l7 -18M4312 4046l15 -21l-1 10m1 -10l-9 4M5128 4045l27 -12l-6 9m6 -9l-11 -1M5335 4041l-13 20M5831 4030l13 16M2156 4088l-27 12l6 -9m-6 9l11 1M2163 4084l20 -8M2556 4073l-8 17M2691 4081l-2 29l-5 -10m5 10l6 -9M2745 4080l-12 -4M3236 4092l26 -1l-8 5m8 -5l-9 -5M3374 4075l-11 22M3551 4082l13 20M3928 4079l-8 13M4060 4093l0 -29l6 9m-6 -9l-6 9M4250 4087l-10 -9M4839 4103l7 -35l5 13m-5 -13l-9 10M4900 4086l-22 -16l10 1m-10 -1l4 10M4987 4082l2 24M5361 4110l-3 -27l6 8m-6 -8l-4 9M5906 4072l-4 17M6028 4098l21 -22l-2 11m2 -11l-11 3M2143 4122l17 25l-10 -5m10 5l-1 -11M2260 4123l-12 7M2494 4117l-20 5M2889 4106l-8 29l-3 -11m3 11l8 -8M2992 4118l13 10M3026 4128l4 -13M3356 4133l-21 -19l11 2m-11 -2l3 10M3485 4134l23 -2M3554 4124l-9 27l-3 -11m3 11l8 -7M3672 4136l2 -22M3737 4131l-19 2M3810 4140l29 -6l-8 8m8 -8l-11 -4M3904 4114l14 19M4373 4130l10 9M4542 4135l24 4M4869 4122l26 -1l-8 6m8 -6l-9 -5M5049 4136l2 -16M5253 4136l-27 -1l9 -5m-9 5l9 6M5277 4123l18 33l-12 -7m12 7l1 -14M5620 4137l-1 -35l7 11m-7 -11l-7 12M6028 4127l-11 13M6114 4141l-15 -15M6341 4150l1 -22M6457 4130l-20 -4M6489 4124l-20 10M2178 4193l17 -23l-1 11m1 -11l-10 4M2513 4178l-30 1l9 -6m-9 6l10 6M2535 4156l12 35l-11 -9m11 9l3 -14M2790 4162l2 27l-6 -8m6 8l5 -9M3194 4195l13 -23M3284 4175l8 -20M3377 4191l3 -27l4 9m-4 -9l-6 8M3936 4177l-21 -9M3960 4167l21 19l-11 -2m11 2l-3 -10M4154 4175l-5 -18M4391 4185l-10 -34l10 9m-10 -9l-3 13M4675 4184l0 -29l6 9m-6 -9l-6 9M5214 4185l-6 -28l8 8m-8 -8l-4 10M5255 4155l8 19M5311 4178l-18 12M5870 4186l-22 -4M6543 4177l12 -25l1 10m-1 -10l-9 6M2200 4233l14 -8M2510 4215l21 -8M2563 4213l22 9M2738 4227l27 -1l-9 6m9 -6l-9 -5M2830 4213l21 6M2916 4211l-24 0M3495 4230l15 -14M3720 4230l19 -30l0 13m0 -13l-12 6M5114 4231l1 -17M5149 4217l-1 19M5247 4222l6 14M5282 4222l-7 10M5329 4231l-4 -18M5561 4211l13 6M5902 4218l-20 4M6098 4207l18 18M6207 4224l6 -23M6495 4219l-27 -6l10 -3m-10 3l7 7M6528 4227l15 -18M2440 4266l16 13M2695 4268l-14 -21M2730 4279l8 -16M2883 4259l-22 9M3245 4258l-7 9M3570 4250l-21 10M3654 4265l-19 14M3759 4262l-14 19M3888 4267l14 10M4163 4281l5 -29l4 10m-4 -10l-7 8M4208 4277l-7 -20M4710 4270l11 -13M4743 4268l12 -17M4908 4264l-21 4M4994 4253l3 17M5124 4269l-4 -25M5260 4248l-12 10M5310 4282l3 -19M5403 4252l17 12M5513 4250l-16 8M5718 4261l-3 16M5848 4253l13 22M6009 4272l-5 -21M6221 4274l16 -14M6455 4264l21 -14M6516 4270l-2 -21M2615 4305l19 -2M2853 4312l-23 -18l11 1m-11 -1l4 11M3530 4284l23 26l-13 -4m13 4l-2 -13M3733 4296l-4 21M3904 4295l22 12M3943 4302l24 -10l-6 8m6 -8l-10 -2M4317 4321l-9 -9M4455 4310l-10 -26l8 6m-8 -6l-2 10M4587 4293l16 24l-10 -4m10 4l0 -11M5148 4322l3 -27l4 9m-4 -9l-6 8M5285 4290l-2 14M5698 4323l1 -25M5785 4293l2 22M5827 4303l28 -3l-9 7m9 -7l-10 -5M6164 4314l-18 -14M6531 4295l12 10M2083 4362l2 -23M2365 4322l-5 37l-6 -13m6 13l9 -11M2877 4362l-7 -22M3194 4367l-8 -36l10 10m-10 -10l-4 13M3427 4330l-19 24l1 -12m-1 12l11 -4M3699 4348l-6 14M3875 4366l18 -10M4057 4371l10 -24l1 10m-1 -10l-8 6M4310 4353l-18 1M4352 4351l-23 -14l10 0m-10 0l5 9M4661 4349l-8 20M5366 4359l-13 -7M5602 4354l-28 -6l10 -3m-10 3l8 8M5703 4355l23 1M5987 4368l18 -23l-1 11m1 -11l-10 4M6414 4341l-12 7M2225 4408l-21 -7M2490 4394l-11 19M3063 4393l29 -1l-9 6m9 -6l-10 -6M3461 4382l-13 25l-1 -11m1 11l9 -6M3715 4389l-1 29l-5 -10m5 10l6 -9M3772 4402l-3 -22M3952 4383l5 11M3996 4385l13 15M4321 4411l-19 -19l10 2m-10 -2l2 10M4700 4380l-1 26M4847 4402l-22 -5M4909 4388l11 6M5022 4389l-18 2M5377 4378l20 15M6258 4396l-20 -7M2228 4439l13 -16M2451 4450l11 -12M2821 4447l23 -1M3144 4440l-8 -16M3204 4443l-15 -4M3358 4436l30 -1l-9 6m9 -6l-10 -6M3661 4454l-24 -27l13 4m-13 -4l2 14M3835 4440l19 -15M4285 4437l21 -5M4526 4428l-1 28l-5 -9m5 9l6 -9M4696 4427l19 5M4913 4458l-16 -18M5019 4439l28 -9l-7 8m7 -8l-11 -3M5257 4424l21 9M5862 4442l19 -7M5945 4426l10 27l-9 -7m9 7l2 -11M6180 4442l30 6l-11 4m11 -4l-8 -8M6234 4435l6 -13M6421 4425l-5 28l-4 -10m4 10l7 -8M6560 4426l-10 16M2162 4479l-2 29l-5 -10m5 10l6 -9M2443 4475l-23 16l4 -10m-4 10l11 -1M2789 4497l15 -10M2896 4483l5 -15M3266 4481l-17 18M3471 4474l-32 19l7 -12m-7 12l14 0M3480 4474l24 1M3693 4475l-14 1M3758 4482l5 -19M3909 4475l8 13M4316 4500l10 -33l3 13m-3 -13l-10 8M4374 4468l1 16M4639 4470l-10 17M4781 4485l21 -17l-3 10m3 -10l-10 1M5670 4475l-17 7M5932 4492l-15 -12M6488 4477l9 13M2234 4514l-10 21M2571 4541l-25 -10l10 -2m-10 2l6 8M2954 4534l7 -17M3012 4531l-9 -10M3498 4541l19 -16M3566 4532l-22 6M3652 4523l-11 -14M3724 4518l24 -4M3939 4541l-2 -17M4148 4513l19 23l-11 -4m11 4l-2 -11M4282 4524l24 15l-11 0m11 0l-5 -10M4999 4528l1 -12M5327 4522l-13 0M5553 4530l-7 -12M5636 4545l-8 -36l10 10m-10 -10l-4 13M5771 4525l-19 21l2 -11m-2 11l11 -3M5866 4523l-19 11M6051 4530l-10 -22M6280 4539l-11 -14M6330 4517l-3 24M2116 4561l-12 32l-2 -13m2 13l10 -8M2216 4573l-28 -7l10 -3m-10 3l8 8M2764 4567l-33 12l8 -10m-8 10l13 3M2800 4559l0 28l-6 -9m6 9l6 -9M2948 4574l6 15M3207 4551l13 20M3373 4578l-16 3M3460 4583l-19 -25l11 4m-11 -4l1 12M3688 4569l-21 2M4084 4596l-6 -31l8 9m-8 -9l-4 11M4275 4574l0 12M4370 4566l-8 -11M4812 4565l17 26l-10 -5m10 5l0 -12M4906 4557l15 20M4963 4563l11 5M5057 4582l-10 -22M5126 4573l-24 -14l10 0m-10 0l5 9M5153 4563l-10 8M5200 4555l-7 15M5249 4552l-6 25M5290 4576l6 -17M5334 4576l-12 5M6027 4569l-8 13M6105 4588l0 -23M6308 4572l-17 17M6525 4588l5 -15M2305 4617l25 8l-10 2m10 -2l-7 -8M2424 4625l-21 -11M2648 4606l0 21M2739 4626l-2 -13M3073 4589l-14 34l-2 -14m2 14l11 -8M3199 4631l-11 -19M3364 4615l23 5M3614 4609l-22 5M3653 4629l-7 -32l9 9m-9 -9l-4 12M3690 4615l8 -9M3793 4615l-16 20M4329 4618l14 4M4521 4596l21 26l-12 -4m12 4l-1 -13M4798 4609l23 12M4960 4600l-26 20l5 -11m-5 11l12 -1M5033 4614l23 -7M5082 4620l-5 -17M5137 4596l-7 15M5768 4614l3 -14M5875 4603l-13 4M6243 4626l-4 -12M2524 4655l-3 16M2671 4661l-16 0M2758 4671l-1 -15M2795 4654l5 23M3406 4653l-9 18M3995 4665l10 -19M4224 4665l4 -24M4457 4656l20 21l-10 -3m10 3l-2 -11M4515 4675l2 -20M4733 4663l3 -30l5 10m-5 -10l-7 9M4930 4655l-26 12l6 -9m-6 9l11 1M5018 4657l-13 -8M5301 4667l-5 -22M5425 4669l-14 -26l10 6m-10 -6l-1 11M5845 4673l-3 -26l6 8m-6 -8l-4 9M6065 4661l13 12M6339 4667l22 -21l-3 11m3 -11l-11 3M6439 4669l-16 -12M6567 4669l-2 -15M2382 4712l-25 -3M2733 4691l-16 18M2867 4698l32 -2l-10 7m10 -7l-11 -6M3066 4683l-3 18M3357 4697l26 -6l-7 7m7 -7l-10 -3M3605 4721l16 -20M3853 4694l-27 -2l9 -5m-9 5l8 6M3933 4683l14 21M3993 4692l-24 17l4 -10m-4 10l11 -1M4197 4706l11 -19M4441 4710l12 -2M5038 4717l-1 -24M5204 4703l16 11M5265 4700l6 -12M5616 4691l18 13M5660 4688l21 14M6146 4717l-20 -7M2362 4732l-18 20l2 -10m-2 10l10 -3M2491 4744l-14 -12M2707 4730l10 20M2908 4748l-29 -9l11 -3m-11 3l7 9M3229 4748l-25 2M3555 4754l-15 8M3618 4750l8 9M3705 4762l20 -16M3967 4741l-10 21M4368 4749l18 1M4499 4738l23 10M4880 4749l-24 5M5095 4756l22 -10M5743 4738l10 17M5801 4734l-16 24l0 -11m0 11l10 -5M6072 4735l-19 12M6215 4741l-22 5M6479 4749l12 4M2118 4784l22 17l-10 -1m10 1l-4 -10M2177 4794l22 -1M2413 4803l15 -5M2515 4801l-15 -4M3003 4784l23 13l-10 0m10 0l-5 -9M3482 4782l-18 21l2 -10m-2 10l10 -3M3687 4798l13 -13M4048 4803l21 -17l-3 9m3 -9l-10 1M4214 4792l5 17M4244 4804l8 -18M4400 4778l-17 7M4469 4787l30 -2l-9 7m9 -7l-10 -5M4995 4803l-12 -9M5181 4795l5 11M5537 4790l7 11M5730 4785l5 25M5812 4766l13 33l-11 -8m11 8l3 -13M6038 4782l16 -3M6319 4778l22 3M2200 4834l10 20M2268 4846l-28 -8l11 -3m-11 3l8 8M2344 4834l2 16M2489 4828l-24 1M2580 4839l-27 -12l11 -1m-11 1l6 9M2788 4835l22 16l-10 -1m10 1l-4 -10M2836 4819l10 21M2881 4836l13 -9M2951 4851l2 -20M3080 4821l5 16M3228 4825l-18 2M3271 4835l-21 3M3416 4816l-16 24l1 -11m-1 11l10 -4M3438 4837l14 -27l1 11m-1 -11l-10 6M3658 4842l18 -23l-1 11m1 -11l-10 4M3715 4818l-2 22M3922 4848l-10 -8M3986 4834l7 -20M4327 4830l9 25l-8 -6m8 6l2 -10M4584 4818l8 22M4740 4826l-8 23M4793 4839l-20 -3M4828 4830l12 -8M4887 4815l-15 22l0 -10m0 10l9 -4M5120 4844l-29 4l9 -7m-9 7l10 5M5165 4819l-19 18l3 -10m-3 10l10 -2M5340 4827l-12 -5M5518 4836l21 16l-10 -1m10 1l-3 -9M5988 4838l-18 -12M6204 4848l-7 -28l8 7m-8 -7l-3 10M2411 4893l6 -21M2706 4886l-24 -14l11 0m-11 0l5 9M2810 4865l14 19M3145 4866l-10 21M4034 4896l-18 -28l11 6m-11 -6l0 13M4098 4884l21 5M4315 4889l-15 0M4424 4863l8 24M4499 4886l-16 -15M4670 4877l-25 15l5 -10m-5 10l11 0M5137 4878l-10 -8M5322 4878l-12 -5M6040 4881l23 2M6239 4887l-19 -9M6276 4875l-14 13M2289 4924l8 -19M2324 4928l27 -7l-8 8m8 -8l-10 -3M2657 4926l10 14M2797 4929l13 9M2989 4912l18 9M3031 4923l10 13M3506 4935l-9 -15M3632 4922l-8 -15M3730 4929l-7 -13M3872 4913l-5 24M3894 4920l13 -14M5108 4909l-21 10M5968 4914l1 30l-6 -10m6 10l6 -10M6468 4918l22 13M6553 4919l25 -9l-6 8m6 -8l-10 -2M2080 4954l18 13M2180 4964l24 10l-10 2m10 -2l-6 -8M2693 4966l-5 24M3288 4971l-4 -18M3370 4970l17 -8M3557 4982l-3 -31l7 9m-7 -9l-5 11M3791 4972l25 -14l-5 9m5 -9l-11 0M4175 4958l-26 -3l9 -4m-9 4l8 6M4390 4955l-6 11M5402 4969l23 8M5553 4964l-6 15M5691 4974l-26 -12l11 -1m-11 1l6 9M5742 4966l-15 6M2067 5016l15 -3M2588 5006l-13 -3M2628 5002l-22 -2M3465 5021l-21 -11M3670 5004l7 14M4285 5004l-23 28l2 -14m-2 14l13 -5M4454 5024l5 -29l4 10m-4 -10l-7 8M4516 4992l-10 25l-2 -10m2 10l8 -6M4604 4997l-9 22M4658 5003l-18 14M4887 4998l-9 24M4911 5031l10 -31l3 12m-3 -12l-9 8M5068 5003l-23 -5M5605 5030l19 -21l-2 11m2 -11l-10 3M5886 5013l-2 -22M6007 5028l29 -13l-7 10m7 -10l-12 -1M6075 5001l-10 11M6167 5030l1 -19M6206 5012l24 -8M6450 5005l-16 4M6465 5018l21 5M6514 5010l10 16M6580 5007l-17 6M2121 5048l16 12M2541 5067l4 -27l4 9m-4 -9l-7 8M2642 5032l18 25l-11 -5m11 5l-1 -12M2787 5046l-7 17M3294 5036l-1 18M3883 5037l3 14M4122 5063l-7 -32l9 9m-9 -9l-4 12M4387 5040l-11 11M4503 5056l34 7l-12 5m12 -5l-10 -9M5010 5045l-24 10l6 -8m-6 8l10 2M5045 5060l-19 6M5387 5067l21 -17l-4 10m4 -10l-10 1M5486 5058l19 10M5523 5051l24 11l-10 1m10 -1l-6 -8M5670 5060l16 -29l1 13m-1 -13l-11 6M2152 5098l13 6M2191 5099l10 8M2664 5113l-16 -19M3131 5105l-27 5l8 -7m-8 7l10 4M3825 5094l-1 18M4052 5108l-24 -16l11 0m-11 0l5 10M4202 5101l-14 2M4371 5114l-17 -16M4416 5112l-10 -16M4998 5093l7 19M5133 5092l19 8M5198 5095l15 17M5346 5097l-23 21l3 -11m-3 11l12 -2M6161 5108l-8 -14M6347 5083l5 21M6435 5083l-8 9M6534 5085l-10 10M6576 5101l-4 15M2128 5130l28 7l-11 3m11 -3l-8 -8M2315 5149l3 -13M2452 5151l6 -12M2588 5138l16 -2M3098 5150l-3 -17M3154 5135l-18 19l2 -10m-2 10l10 -2M3245 5165l-4 -29l7 9m-7 -9l-5 10M3505 5146l21 -16l-4 9m4 -9l-10 1M3793 5126l15 13M3938 5130l-10 28l-2 -11m2 11l9 -7M4020 5140l5 -16M4164 5147l-2 -22M4274 5145l-26 2l8 -6m-8 6l9 5M4381 5146l19 3M4820 5151l-25 -3M4983 5145l-6 -11M5070 5143l20 6M5360 5160l-11 -17M5386 5144l12 -16M5447 5124l19 24l-11 -4m11 4l-1 -12M5788 5157l-20 -22l11 3m-11 -3l2 11M5984 5147l18 -7M6279 5136l-21 0M6319 5139l12 1M2124 5174l-13 22M2152 5175l12 10M2304 5192l7 -23M2523 5192l16 -9M2799 5199l24 -7M3180 5188l-16 -14M3494 5172l14 12M3543 5186l-9 18M3589 5196l7 -27l3 10m-3 -10l-8 7M3903 5186l19 6M4248 5175l-21 4M4450 5213l0 -30l6 10m-6 -10l-6 10M4593 5180l17 14M5088 5181l16 -3M5372 5182l21 -13M5424 5188l10 -17M5894 5188l-23 19l4 -11m-4 11l11 -2M6158 5198l-2 -23M6192 5201l18 -25l-1 12m1 -12l-11 4M2479 5239l-20 -7M2500 5218l3 28l-7 -8m7 8l5 -10M2865 5238l14 -14M2916 5232l17 0M2995 5253l13 -27l1 11m-1 -11l-9 6M3154 5225l-31 4l9 -7m-9 7l11 5M3801 5227l3 13M3873 5214l3 19M4164 5247l-3 -29l7 9m-7 -9l-5 10M4475 5245l20 -21l-2 11m2 -11l-10 3M4761 5214l-4 21M4800 5232l-5 14M5082 5241l8 -37l5 14m-5 -14l-10 10M5138 5221l-20 7M5294 5240l19 1M5452 5247l0 -19M5686 5232l-26 0M2105 5285l19 -14M2468 5285l20 -2M2534 5275l-31 11l8 -10m-8 10l12 3M4612 5267l-25 -5M4884 5269l-7 17M5117 5296l-6 -26l7 7m-7 -7l-3 10M5245 5272l14 22M5325 5263l22 15l-10 -1m10 1l-4 -9M5365 5258l22 12M5633 5272l-25 -8l10 -2m-10 2l7 8M5666 5265l-21 17l3 -10m-3 10l10 -1M5761 5270l-12 24l-1 -10m1 10l9 -5M6083 5265l-20 13M6129 5260l-26 21l4 -12m-4 12l13 -2M6394 5289l-19 -14M6481 5262l-12 13M2367 5324l18 -14M3019 5323l-20 13M3055 5310l-1 18M3266 5312l25 2M3429 5317l-22 -16l10 1m-10 -1l4 9M3571 5313l-21 -8M4156 5339l11 -27l2 11m-2 -11l-9 6M4301 5319l-13 -21M4706 5323l22 -4M4859 5335l-21 -13M5031 5308l-9 23M5911 5300l11 22M6009 5309l-1 30l-5 -10m5 10l6 -9M6529 5336l-28 -19l13 1m-13 -1l5 12M6556 5333l-5 -15M2102 5343l2 26M2195 5361l2 -18M2357 5370l-19 4M2470 5348l8 22M2821 5366l-16 -19M2915 5367l34 -7l-10 9m10 -9l-12 -4M3858 5370l13 -22M3909 5374l-20 -2M4140 5372l7 -20M4605 5377l-23 -18l11 1m-11 -1l4 10M4649 5347l-15 20M4853 5355l26 2M5778 5365l13 -15M6572 5355l8 19M2228 5420l-2 -14M2321 5421l-14 -22l9 4m-9 -4l0 10M2463 5399l10 23M2643 5413l21 7M2976 5412l-22 7M3164 5388l-31 20l6 -13m-6 13l14 0M3333 5414l-15 -11M3722 5417l-29 -8l11 -3m-11 3l8 8M3801 5415l-26 3M4035 5387l-15 30l-1 -13m1 13l11 -7M4405 5397l-17 11M4443 5425l-16 -18M4477 5410l2 12M4633 5390l-25 23l3 -12m-3 12l13 -3M4695 5414l23 -12l-5 9m5 -9l-10 -1M4806 5416l8 -15M5030 5415l17 -10M5105 5414l-27 -3l9 -4m-9 4l8 6M5180 5408l-17 -18M5302 5411l13 -6M5525 5404l23 17l-11 -1m11 1l-4 -10M5816 5410l-9 -17M6423 5403l3 19M2298 5466l-16 -16M2524 5432l-13 24l-1 -10m1 10l9 -5M2589 5448l-8 25l-2 -10m2 10l8 -7M2849 5444l12 15M3489 5461l24 -5M3761 5441l-1 19M3878 5449l-19 4M3907 5429l15 24l-10 -5m10 5l0 -11M3958 5435l7 25M4638 5460l11 -8M4679 5442l24 12l-10 1m10 -1l-5 -9M4883 5446l0 28l-5 -9m5 9l6 -9M4974 5458l-23 -4M5100 5464l-4 -11M5196 5450l-20 6M5578 5432l-10 27l-2 -11m2 11l9 -7M5984 5458l7 -13M6212 5439l2 17M6242 5459l5 -14M2606 5472l-14 26l-1 -11m1 11l10 -6M2698 5496l-6 -24M3287 5481l-13 12M3326 5506l-8 -15M4243 5508l11 -11M4289 5492l16 -4M4815 5482l-23 17l4 -10m-4 10l11 -1M5363 5490l-5 12M5567 5480l24 10l-10 2m10 -2l-6 -8M5871 5475l-14 17M6515 5485l-12 26l-1 -11m1 11l9 -6M2296 5523l-9 10M2481 5544l12 -20M3034 5555l-16 -16M3210 5557l10 -18M3391 5543l35 0l-11 7m11 -7l-11 -7M3767 5547l-15 -20M3948 5528l-3 19M4050 5548l-16 -15M4109 5541l-17 -2M4138 5544l-7 -26l7 7m-7 -7l-3 10M4184 5534l-2 -12M4455 5531l4 21M4928 5537l-13 12M5154 5534l-5 22M5373 5553l8 -11M5656 5548l-21 -2M6098 5541l15 14M6390 5520l-11 26l-2 -11m2 11l9 -6M2107 5589l-18 -11M2217 5583l8 -21M2835 5594l-8 -11M3051 5573l-1 16M3119 5601l-25 -15l11 0m-11 0l5 10M3163 5575l-14 10M3239 5587l22 0M3381 5600l-11 -26l9 6m-9 -6l-2 11M3627 5581l-17 -17M4355 5576l-19 23l1 -11m-1 11l11 -4M4766 5570l-19 8M4801 5572l8 15M4901 5578l-16 0M5300 5588l14 -11M5445 5576l26 15l-11 0m11 0l-5 -10M5517 5571l-22 28l2 -13m-2 13l13 -5M5926 5596l36 -11l-10 11m10 -11l-14 -4M6043 5572l-12 25l-1 -11m1 11l9 -6M6093 5592l21 -17l-3 10m3 -10l-10 2M6296 5583l-17 11M2599 5637l19 -17M2711 5643l7 -12M2841 5624l17 -8M2951 5613l-14 13M2989 5625l-10 14M3166 5626l31 -15l-7 11m7 -11l-13 -1M3303 5648l14 -22M3463 5629l-18 -3M3552 5637l-10 -16M3584 5627l4 -17M4097 5615l-3 16M4264 5631l19 -17M4411 5641l-6 -24M4561 5616l-16 10M4628 5640l21 -10M5381 5620l-12 21M6357 5623l-17 14M6536 5635l-13 -16M2083 5683l19 -9M2179 5672l7 -10M2499 5681l22 -13M2535 5688l17 -23l-1 11m1 -11l-10 4M2732 5667l23 -10M3332 5687l20 -14M3908 5664l27 12l-11 1m11 -1l-6 -9M3958 5673l19 12M4249 5668l-14 -11M4303 5659l-4 22M4472 5661l14 13M5023 5673l12 -15M5301 5667l16 -1M5489 5665l3 19M5679 5665l-8 20M5729 5660l-3 23M6236 5667l-6 17M6447 5678l8 -21M6517 5682l2 -19M2435 5713l2 19M2838 5715l9 8M3101 5706l-22 12M3258 5717l7 -25M3403 5697l3 25M3864 5710l-21 -5M4448 5703l18 10M4503 5723l0 -33l7 11m-7 -11l-6 11M4696 5711l-19 24l1 -11m-1 11l11 -4M4742 5712l-11 6M4836 5708l-15 3M5341 5709l-27 -10l11 -2m-11 2l7 9M5968 5732l6 -23M6394 5715l5 -20M6579 5715l13 -2M2975 5772l1 -18M3221 5757l25 14l-11 0m11 0l-5 -9M3342 5779l-9 -21M3899 5757l-13 -15M4027 5775l11 -31l2 12m-2 -12l-10 8M4125 5742l-21 12M4611 5753l14 30l-11 -7m11 7l1 -13M4958 5758l-27 10l7 -9m-7 9l11 2M4986 5750l-6 14M5318 5760l-28 1l9 -6m-9 6l9 5M5725 5753l-4 22M2103 5804l10 8M2304 5801l7 -13M3066 5815l13 -22M3504 5788l-14 34l-2 -14m2 14l11 -8M3587 5815l3 -28l5 10m-5 -10l-7 9M3676 5791l-13 23l0 -10m0 10l9 -5M4083 5807l16 -14M4138 5806l-6 -19M4455 5790l12 4M4519 5814l-5 -29l8 8m-8 -8l-4 11M5477 5816l0 -21M5802 5807l-21 -22l11 3m-11 -3l3 11M5886 5801l11 13M6253 5798l14 22l-9 -4m9 4l0 -10M6468 5815l25 -25l-3 13m3 -13l-13 3M2123 5848l12 8M2175 5831l6 26l-7 -7m7 7l3 -10M2364 5857l-8 -13M2427 5842l-26 -10l10 -2m-10 2l7 8M2557 5853l-2 -12M2729 5852l20 1M2872 5825l14 25l-9 -5m9 5l1 -11M3132 5833l29 21l-14 -1m14 1l-5 -13M3326 5841l18 12M3437 5859l-10 -20M3516 5839l-17 7M3692 5833l8 21M3828 5851l5 -28l4 10m-4 -10l-7 8M4390 5841l-12 2M5177 5853l-17 -9M5248 5850l22 -3M6372 5848l12 -25l1 11m-1 -11l-9 6M2363 5901l-20 -17l10 2m-10 -2l3 10M2667 5881l-15 24l0 -11m0 11l10 -5M2697 5895l14 12M2744 5910l29 -19l-5 12m5 -12l-13 1M3185 5895l-14 9M3440 5888l20 9M3850 5882l31 1l-10 6m10 -6l-10 -6M4172 5887l23 19l-11 -1m11 1l-4 -11M4433 5881l-18 15M4458 5868l-2 28l-5 -9m5 9l6 -9M5011 5896l11 -18M5065 5895l7 12M5277 5880l3 16M5335 5872l-14 26l-1 -11m1 11l10 -6M5704 5912l-4 -27l7 8m-7 -8l-4 10M6198 5878l23 9M6475 5896l19 -19l-2 10m2 -10l-10 2M2568 5929l-21 8M3204 5932l-29 3l9 -7m-9 7l10 5M3263 5937l-27 -6l10 -3m-10 3l8 7M3394 5941l-17 -3M3628 5942l-22 -7M3652 5949l9 -10M3711 5948l-11 -10M4716 5922l-11 17M5409 5943l-19 0M5633 5950l-4 -28l7 8m-7 -8l-4 10M2674 5983l4 -16M4069 5978l-28 -1l9 -5m-9 5l9 6M4316 5980l5 -15M4794 5969l-31 9l8 -9m-8 9l12 3M5053 5972l-2 26l-4 -9m4 9l6 -8M5699 5985l-11 -15M5845 5992l-7 -12M5875 5982l18 -11M6018 5985l0 -29l6 10m-6 -10l-6 10M6278 5958l29 19l-13 0m13 0l-6 -12M2098 6019l-27 -4l10 -4m-10 4l8 7M2141 6037l-8 -34l9 10m-9 -10l-4 13M2314 6019l20 -14M3150 6013l-9 9M3389 6019l-16 21l1 -10m-1 10l9 -3M3530 6032l-30 -11l12 -3m-12 3l8 9M3613 6025l-17 0M4480 6042l-16 -24l10 5m-10 -5l0 11M4668 6008l10 8M4709 6030l3 -19M4837 6008l22 15l-10 -1m10 1l-4 -9M5273 6031l-10 -15M5406 6027l-11 -24l8 6m-8 -6l-1 10M5438 6009l-1 37l-7 -12m7 12l8 -12M5627 6022l16 -16M5735 6034l-14 -15M5835 6026l-36 8l10 -10m-10 10l13 5M6056 6027l-17 -4M6268 6033l7 -10M6303 6019l27 -11l-6 9m6 -9l-11 -2M2064 6063l-11 8M2408 6073l-17 6M2469 6075l15 -10M2645 6072l21 -11M3096 6077l-16 -20M3813 6071l11 -6M4362 6069l18 2M4498 6058l7 27l-8 -7m8 7l3 -10M4566 6080l-18 -8M4959 6072l-5 -15M5144 6063l19 21l-10 -3m10 3l-2 -11M5559 6058l12 23l-8 -5m8 5l1 -10M5843 6060l-15 2M5880 6072l18 -2M6123 6046l0 19M6268 6063l-28 -11l11 -2m-11 2l7 9M6367 6060l-22 -4M2200 6103l-27 9l7 -8m-7 8l10 2M2305 6098l31 20l-14 0m14 0l-6 -13M2546 6115l14 -14M2808 6105l28 9l-11 3m11 -3l-7 -9M3248 6113l4 -17M3407 6119l25 1M4029 6130l-12 -19M4077 6120l2 -14M4156 6119l13 -25l1 11m-1 -11l-9 5M4204 6136l1 -35l7 12m-7 -12l-7 11M4406 6097l-15 23l0 -11m0 11l10 -5M4466 6115l14 -4M5057 6116l-26 -2l9 -5m-9 5l8 6M5128 6099l-20 9M5228 6126l-8 -26l8 7m-8 -7l-3 10M5356 6113l19 -16M5544 6122l1 -12M5764 6117l-7 -28l8 7m-8 -7l-3 10M5830 6106l-15 8M6066 6088l-26 25l3 -13m-3 13l13 -3M6187 6114l-2 -23M6469 6117l-17 -7M2259 6151l-18 -4M2334 6143l15 1M2574 6148l18 0M2610 6152l-1 -13M2913 6173l-20 -18l10 2m-10 -2l3 10M2926 6172l18 -22l-2 11m2 -11l-10 4M3188 6142l-28 7l8 -8m-8 8l11 3M3271 6140l-7 19M4086 6141l-6 24M4148 6173l-17 -14M4744 6155l-11 -5M4875 6159l-10 7M5256 6167l-17 -17M5568 6156l-21 8M5596 6143l22 4M5711 6161l2 -28l5 10m-5 -10l-6 9M5732 6166l26 -9l-6 8m6 -8l-10 -2M5920 6147l16 4M6107 6138l16 20M6160 6170l-16 -17M2403 6196l5 17M2468 6204l-26 6l7 -7m-7 7l10 3M2815 6195l7 10M3063 6180l-6 22M3407 6191l18 8M3477 6202l-27 7l7 -8m-7 8l10 3M3931 6188l-20 32l0 -14m0 14l13 -6M3968 6197l24 0M4128 6218l-6 -18M4276 6201l-26 -3M4331 6182l25 14l-11 1m11 -1l-5 -9M5893 6204l24 -4M5957 6178l9 28l-9 -7m9 7l2 -11M5991 6198l18 17M2424 6238l13 1M2566 6238l29 9l-11 3m11 -3l-8 -9M3078 6260l4 -29l4 10m-4 -10l-7 9M3625 6236l-7 14M3959 6221l-5 27l-4 -10m4 10l7 -8M4009 6252l-12 -13M4187 6248l-13 0M4365 6246l-4 -23M4837 6251l-5 -17M5420 6244l-8 -24M5886 6246l16 8M5969 6247l21 -8M6205 6248l-10 -17M6262 6250l-25 1M2143 6305l0 -16M2183 6295l11 -16M2553 6274l-16 8M2729 6299l-3 -14M3367 6284l5 -15M3416 6301l13 -22M3747 6269l4 16M3963 6291l31 -14l-7 11m7 -11l-13 -1M4123 6289l-25 -13l11 -1m-11 1l5 9M4273 6290l-21 -7M5394 6297l14 -16M5959 6285l-3 20M6152 6288l-15 5M6322 6290l15 -14M6428 6277l-24 -1M6469 6274l-15 9M6542 6294l8 -9M2390 6342l3 -22M2444 6311l-13 20M3407 6332l12 -15M3523 6327l13 8M3636 6347l-14 -20M4291 6321l-16 -1M4322 6320l10 26l-8 -7m8 7l2 -10M4514 6333l-22 7M4818 6336l18 -5M5525 6325l-12 15M5561 6323l-12 27l-1 -11m1 11l9 -6M5702 6328l-10 22M5944 6342l-2 -15M6050 6341l-36 -5l13 -6m-13 6l11 9M6535 6317l12 12M6553 6324l29 -7l-8 8m8 -8l-11 -3"/>
<path stroke="#fbe800" d="M2566 2479l12 -25l1 10m-1 -10l-9 6M2668 2450l-15 16M2713 2473l17 -20l-2 10m2 -10l-9 3M2760 2463l12 5M2896 2466l15 7M3078 2463l17 2M3433 2444l19 21l-10 -3m10 3l-2 -11M3582 2453l17 14M3695 2457l-29 4l8 -7m-8 7l10 4M3910 2450l-11 5M4129 2460l-2 14M4277 2469l8 -18M4329 2455l-15 23l0 -10m0 10l9 -4M4382 2470l-18 -18M4445 2460l22 -4M4545 2453l1 12M4939 2467l-17 -16M4950 2450l13 1M5300 2472l-16 -10M5370 2470l9 -22M5529 2465l-12 9M5597 2462l9 -20M5661 2470l7 -11M5695 2461l4 16M5960 2459l17 1M6075 2443l-1 24M6121 2440l8 25l-8 -6m8 6l2 -10M6253 2464l8 10M6381 2441l7 14M2182 2501l14 7M2355 2507l14 -5M2420 2491l3 26l-6 -8m6 8l4 -9M2457 2517l11 -7M2592 2489l4 12M2645 2509l-13 -4M2690 2502l-19 -2M2784 2494l16 11M2871 2505l10 14M2917 2505l5 14M3161 2495l-19 7M3247 2495l-13 -1M3708 2520l-7 -13M3789 2504l-13 -8M3901 2512l-17 -7M4211 2509l4 -12M4623 2495l-12 13M4891 2498l24 14l-11 0m11 0l-5 -9M5127 2485l-15 25l0 -11m0 11l10 -5M5281 2506l-19 2M5439 2515l17 -20l-2 10m2 -10l-9 3M5562 2504l-23 -2M5667 2511l20 -8M5895 2492l19 20l-10 -3m10 3l-2 -10M5985 2525l10 -24M6287 2493l-14 26l-1 -11m1 11l10 -6M6473 2519l-17 -20l9 3m-9 -3l2 10M2162 2538l-8 10M2260 2550l3 14M2324 2560l19 -16M2390 2555l15 -7M2860 2544l-13 3M2913 2554l-20 -3M3040 2548l-28 1l9 -6m-9 6l9 5M3214 2565l-9 -17M3399 2558l10 -11M3580 2532l-3 17M3713 2545l12 -6M3752 2554l26 3l-9 4m9 -4l-8 -6M3943 2536l25 9l-10 2m10 -2l-6 -8M4075 2560l11 -25l1 10m-1 -10l-9 6M4513 2562l7 -11M4687 2540l-2 20M4968 2540l12 10M5032 2561l-20 -18l10 2m-10 -2l3 10M5196 2529l9 26l-8 -7m8 7l2 -10M5248 2549l-12 -7M5341 2547l3 -21M5754 2561l-12 -7M5900 2551l-25 -15l11 0m-11 0l5 10M6363 2531l-18 16M6436 2552l-14 -7M6465 2561l20 -18l-3 10m3 -10l-10 2M6530 2550l-17 -17M2630 2576l6 20M2743 2598l6 -11M3000 2594l13 -3M3161 2593l-9 13M3236 2585l15 25l-10 -5m10 5l0 -11M3274 2593l24 2M3409 2594l13 -5M3464 2601l14 -17M3742 2604l-11 -22M4118 2597l-21 -5M4169 2613l4 -23M4375 2585l17 -7M4476 2595l10 7M4610 2586l14 -7M4706 2588l-6 11M4962 2571l-19 23l2 -11m-2 11l11 -3M5186 2587l-11 -11M5328 2581l-21 9M5619 2587l13 16M5724 2577l-8 9M5766 2603l18 -18M6003 2611l0 -19M6086 2593l3 14M6155 2603l-13 -23l9 5m-9 -5l0 10M6236 2593l4 -21M6372 2586l-11 -13M2082 2619l-18 10M2123 2643l-1 -19M2325 2646l27 -6l-8 7m8 -7l-10 -3M2480 2644l-5 -16M2849 2648l-3 -20M3078 2627l-4 13M3163 2631l1 15M3267 2617l11 19M3298 2625l24 14l-11 0m11 0l-5 -9M3391 2633l10 14M4013 2633l-12 15M4142 2644l-28 -5l10 -4m-10 4l8 7M4179 2644l15 -1M4281 2621l-21 20l3 -11m-3 11l11 -2M4338 2629l-15 18M4380 2621l-19 22l2 -11m-2 11l11 -3M4499 2626l17 -3M4738 2639l-13 -11M4847 2631l-28 7l8 -8m-8 8l10 3M4972 2651l-16 -18M5045 2636l12 13M5347 2639l-12 -16M5449 2642l25 -3M5506 2633l26 -1l-8 5m8 -5l-9 -5M6076 2631l-10 -12M2196 2692l-17 -23l10 4m-10 -4l1 11M2306 2680l23 -11M2443 2688l15 -3M2642 2689l-20 -13M2760 2666l24 16l-11 -1m11 1l-5 -10M3012 2694l-19 -18l10 2m-10 -2l3 10M3147 2663l0 15M3520 2674l12 -5M3571 2664l-20 14M3613 2688l-30 1l9 -6m-9 6l10 5M3685 2683l24 -13l-5 9m5 -9l-10 -1M3731 2675l11 12M4073 2667l-20 13M4216 2695l2 -14M4328 2693l12 -20M4567 2669l-1 13M4599 2669l24 6M4792 2689l12 -18M4896 2681l19 -17M5024 2667l19 9M5079 2672l16 -4M5164 2678l23 -17l-4 10m4 -10l-11 1M5290 2674l24 -10M5552 2678l-11 -6M6149 2671l-10 13M6238 2682l5 -20M6442 2664l20 8M2117 2709l-18 9M2454 2719l-18 21l2 -11m-2 11l10 -3M2527 2739l7 -20M2903 2719l-20 17l3 -9m-3 9l10 -2M3321 2729l-25 -2M3340 2726l20 0M3452 2731l-24 -6M3549 2740l-2 -18M3808 2706l15 24l-9 -5m9 5l0 -11M4259 2715l23 -1M4470 2724l-6 -15M4507 2724l6 12M4538 2705l9 27l-8 -7m8 7l3 -11M4599 2712l-14 6M4785 2721l2 24M4818 2709l17 12M5014 2725l-11 5M5201 2705l-7 21M5231 2708l9 20M5332 2726l-2 -16M5377 2712l4 16M5460 2724l2 18M5717 2718l-26 -2M5831 2734l10 -16M5977 2723l-18 -6M6436 2728l-11 -10M2498 2768l14 9M2541 2766l26 0l-9 5m9 -5l-8 -5M2600 2776l-17 -4M2741 2769l-27 -1l9 -5m-9 5l9 6M3065 2777l-20 -2M3148 2773l9 -10M3243 2747l-6 23M3301 2750l-21 12M3329 2780l-1 -13M3510 2784l11 -18M3614 2773l-13 6M3643 2771l15 1M3843 2771l-9 -22M4004 2766l18 17M4053 2768l15 4M4131 2772l-11 -16M4252 2776l13 -20M4431 2748l0 17M4892 2761l5 17M4919 2761l26 -6l-7 7m7 -7l-10 -3M4981 2764l20 9M5209 2780l23 -5M5273 2781l-17 -22l10 4m-10 -4l1 11M5302 2781l-1 -16M5359 2782l5 -29l4 10m-4 -10l-7 8M5387 2774l21 -15M5458 2766l1 -19M5508 2773l-24 6M5728 2787l9 -24M5957 2780l-13 -16M6123 2775l24 -16l-5 10m5 -10l-11 0M6417 2775l15 -13M6500 2761l2 24M2264 2796l-15 21M2472 2811l23 10M2833 2805l14 20M3118 2812l28 8l-11 3m11 -3l-7 -8M3492 2828l-13 -18M3812 2804l10 7M3873 2796l-13 25l-1 -11m1 11l9 -5M3913 2813l8 -14M4135 2821l0 -18M4202 2829l-17 -16M4221 2813l11 -26l1 11m-1 -11l-9 6M4286 2808l-19 -5M4545 2817l6 -24M4687 2812l-4 13M4785 2814l-24 16l5 -10m-5 10l11 0M4859 2811l16 -13M4908 2825l3 -14M5154 2819l7 -25l3 10m-3 -10l-7 7M5376 2817l10 -10M5478 2825l-23 -16l11 1m-11 -1l4 10M5527 2816l-7 -16M5673 2797l-20 13M5698 2802l-13 2M5765 2806l-17 24l1 -11m-1 11l10 -5M5942 2815l-11 -10M6024 2793l21 18l-10 -2m10 2l-3 -10M6078 2827l-23 -14l10 0m-10 0l5 9M6242 2827l19 -14M6278 2813l27 14l-11 1m11 -1l-6 -10M6453 2797l-14 6M2284 2874l-1 -16M2373 2876l-20 -21l11 3m-11 -3l2 11M2503 2842l17 4M3134 2861l19 -12M3292 2843l-15 11M3562 2852l6 13M3864 2860l30 -2l-9 7m9 -7l-10 -5M4057 2851l14 0M4121 2859l-26 -13l11 -1m-11 1l6 10M4203 2854l-12 12M4269 2859l-15 -21l9 4m-9 -4l1 10M4580 2849l12 -8M4763 2867l-13 -3M5130 2842l9 20M5216 2845l4 25M5716 2861l2 -13M5826 2861l-16 4M6219 2858l24 -17l-4 10m4 -10l-11 1M6260 2859l25 -7M6365 2858l14 -11M6461 2873l-1 -15M2218 2886l-17 9M2351 2907l-23 -9M2519 2916l12 -14M2845 2897l19 4M3506 2879l-9 26l-2 -10m2 10l8 -7M3537 2907l1 -21M3582 2905l-14 7M3691 2903l-8 -11M3767 2914l15 -16M3833 2907l-24 -5M3864 2895l-20 22l2 -11m-2 11l11 -3M3960 2895l-29 1l9 -6m-9 6l10 5M4054 2899l-24 -12l10 -1m-10 1l5 9M4463 2916l5 -27l4 10m-4 -10l-7 8M4648 2876l0 29l-6 -9m6 9l6 -9M4845 2896l-22 19l3 -11m-3 11l11 -2M4860 2917l18 -16M4980 2896l-16 12M5051 2910l30 -4l-9 7m9 -7l-10 -5M5107 2899l-14 -19M5379 2888l14 24l-9 -5m9 5l0 -11M5443 2893l-24 -1M5591 2914l22 -18l-4 10m4 -10l-11 1M5752 2919l4 -23M5793 2895l4 -13M6032 2890l-1 26M6137 2897l-26 -3M2201 2940l-16 15M2279 2941l-14 12M2578 2946l18 -1M2744 2932l2 16M2789 2949l-11 6M2936 2953l-15 -2M2986 2931l-26 3l8 -6m-8 6l9 4M3108 2955l1 -20M3168 2959l-18 -12M3195 2939l12 8M3387 2943l-19 -17M3425 2947l13 -12M3483 2927l-15 20M3844 2943l-2 17M3977 2956l-8 -20M4020 2949l17 -7M4255 2936l-21 11M4347 2957l5 -17M4775 2951l-20 -21l11 3m-11 -3l2 11M5390 2960l9 -19M5452 2933l14 5M5675 2956l2 -14M6367 2949l-13 6M6441 2950l22 -2M6505 2950l24 4M2143 2986l16 -13M2258 2969l-11 16M2527 2980l8 19M2579 2979l4 21M2803 3001l5 -24M3155 3004l19 -19l-2 10m2 -10l-10 3M3312 2978l-8 28l-3 -11m3 11l8 -7M3478 2983l26 10l-10 2m10 -2l-6 -8M3540 3006l-20 -20l10 3m-10 -3l2 10M3692 2982l-15 -8M3810 3000l14 -5M3855 2974l17 16M4055 2998l-12 -14M4137 2981l-4 28l-4 -10m4 10l7 -8M4498 2984l14 10M4714 2982l23 19l-11 -2m11 2l-4 -11M4790 3004l-6 -18M4845 2973l-14 24l0 -11m0 11l9 -5M4938 2983l-28 -8l11 -3m-11 3l7 8M5237 2974l-1 22M5305 2985l-17 10M5969 2988l-3 14M6079 2984l-13 7M6445 2988l-11 -12M6491 2994l-15 -12M6521 2995l2 -14M2149 3028l-13 -6M2502 3045l17 -10M2683 3035l-2 -19M3001 3025l21 -3M3234 3023l-6 12M3280 3006l2 28l-6 -9m6 9l5 -9M3390 3029l-9 -18M3518 3016l-1 21M3741 3033l28 5l-10 4m10 -4l-8 -7M3785 3036l18 -21l-1 10m1 -10l-10 3M3832 3030l21 -18l-3 10m3 -10l-10 2M3950 3034l-26 14l6 -10m-6 10l11 1M3976 3046l23 -13l-5 9m5 -9l-10 0M4087 3039l-14 -2M4111 3014l-3 26l-4 -9m4 9l6 -8M4169 3027l3 20M4219 3025l-19 -9M4481 3039l24 -9M4629 3031l-13 20M4726 3039l-12 -13M4849 3028l-10 9M4953 3030l-13 -5M5000 3026l-24 0M5265 3017l-1 19M5352 3038l25 -8l-6 8m6 -8l-10 -2M5637 3020l-1 12M5747 3044l-29 -6l11 -4m-11 4l8 8M5770 3036l-18 0M6222 3030l14 9M2055 3070l8 11M2257 3059l-10 17M2349 3076l3 -18M2389 3088l-13 -19M2881 3080l22 10M2946 3095l-19 -21l10 3m-10 -3l2 11M3401 3076l11 -12M3530 3074l16 -18M3929 3074l-20 -7M4051 3076l6 20M4360 3081l16 -17M4496 3064l10 17M4700 3067l-25 14l5 -9m-5 9l11 0M5090 3074l15 -2M5131 3073l18 -15M5563 3096l7 -26l3 10m-3 -10l-7 7M5756 3084l-13 -14M5792 3079l13 -7M5841 3070l-12 -8M5890 3055l-14 24l0 -11m0 11l9 -5M5921 3072l27 10l-11 2m11 -2l-7 -9M6437 3078l-20 -12M6491 3086l-6 -17M2186 3109l-9 23M2244 3116l-18 14M2261 3128l23 -17l-4 10m4 -10l-11 1M2374 3112l-16 -8M2600 3137l-6 -22M2875 3118l15 5M2971 3113l-25 -6M3140 3111l-2 16M3247 3119l-18 2M3335 3100l2 18M3465 3108l9 13M3682 3112l19 6M4117 3124l13 -8M4192 3123l24 7M4294 3129l12 0M4489 3129l-15 -11M4512 3120l27 5l-10 4m10 -4l-8 -7M4559 3121l18 1M4671 3114l10 9M4946 3128l-15 -5M5130 3124l4 -13M5623 3118l20 -6M5672 3109l13 0M5808 3122l28 3l-9 5m9 -5l-8 -6M5848 3131l10 -10M5903 3114l21 7M6463 3125l-18 0M2165 3155l7 15M2341 3178l-3 -15M2488 3164l-14 -2M2514 3162l27 -12l-6 9m6 -9l-11 -2M2618 3171l12 4M2851 3158l-14 4M3070 3171l18 -6M3129 3170l-21 4M3230 3161l-11 -16M3405 3166l10 11M3506 3177l-8 -29l8 8m-8 -8l-3 11M3970 3154l-15 4M4317 3163l18 -9M4348 3159l21 9M4578 3166l24 -14l-5 9m5 -9l-10 0M4791 3166l-15 13M4972 3144l-5 28l-4 -10m4 10l7 -8M5052 3157l8 13M5340 3164l-15 5M5478 3171l-25 2M5618 3186l-6 -26l7 7m-7 -7l-3 10M5702 3149l9 11M5751 3148l-19 19l2 -10m-2 10l10 -2M5982 3152l-18 8M6022 3140l7 28l-8 -8m8 8l3 -11M6297 3159l-11 7M2511 3198l-4 21M2636 3202l16 15M3055 3217l6 -12M3102 3200l15 25l-10 -5m10 5l0 -11M3246 3207l-7 -13M3563 3221l-20 -18l10 2m-10 -2l3 10M4032 3219l-19 -9M4125 3204l-5 14M4432 3207l22 -14M4515 3210l10 -14M4709 3195l-14 1M4884 3208l25 -2M5046 3201l-17 1M5256 3222l6 -11M5318 3202l-30 -1l10 -6m-10 6l9 6M5367 3201l-29 4l9 -7m-9 7l10 5M5906 3212l-5 -22M6021 3198l-21 10M6307 3194l12 14M6503 3221l4 -19M2203 3252l6 13M2559 3248l24 6M2762 3235l-5 18M2852 3274l-9 -26l8 7m-8 -7l-2 10M2946 3250l12 13M3448 3254l-7 -16M3639 3237l7 16M3896 3263l18 -7M3940 3252l9 -12M4035 3252l2 -12M4191 3251l-13 6M4279 3228l9 26l-8 -7m8 7l2 -10M4322 3239l2 15M4598 3250l20 -18l-3 10m3 -10l-10 2M4735 3245l20 7M4825 3252l12 -3M4925 3258l-7 -13M5167 3251l-16 -7M5248 3253l-8 14M5502 3252l18 -2M5666 3251l-23 -11M5757 3258l-26 -15l11 0m-11 0l5 10M5796 3253l-13 1M5850 3241l-7 18M6081 3251l-28 -10l11 -2m-11 2l7 9M6202 3271l2 -21M2154 3295l-29 -1l9 -6m-9 6l9 6M2167 3298l26 9l-10 2m10 -2l-7 -8M2828 3278l14 14M2864 3282l20 9M3022 3295l-9 11M3157 3311l5 -22M3327 3293l13 7M3379 3296l5 12M3438 3285l-16 3M3566 3300l-18 -9M3613 3302l-25 -3M3982 3282l-19 13M4165 3298l10 14M4296 3282l-13 27l-1 -11m1 11l10 -6M4329 3282l15 7M4475 3280l-2 14M4591 3301l-19 -8M4724 3285l-26 8l7 -8m-7 8l10 3M4907 3290l-28 -11l11 -2m-11 2l7 9M5043 3304l-11 -4M5103 3287l-29 -4l10 -5m-10 5l9 7M5160 3302l21 -7M5289 3303l21 -19l-3 11m3 -11l-11 2M5359 3301l-12 -20M5708 3293l17 -1M5773 3280l6 14M5890 3294l18 0M6036 3298l15 -22l-1 10m1 -10l-9 4M6073 3287l20 2M6377 3302l-17 -8M2081 3356l-13 -23l9 5m-9 -5l0 10M2193 3331l11 25l-9 -6m9 6l1 -10M2295 3335l26 -4l-8 6m8 -6l-9 -4M2329 3339l18 2M2567 3346l-8 -26l8 7m-8 -7l-3 10M2813 3347l-5 -11M2853 3358l3 -18M2983 3347l2 -18M3036 3350l4 -17M3168 3339l-14 -8M3295 3334l26 -8l-7 8m7 -8l-10 -3M3374 3327l-23 15l5 -9m-5 9l10 0M3461 3332l-19 -4M3803 3332l15 8M4029 3344l25 -15l-5 10m5 -10l-11 0M4082 3352l28 -6l-8 8m8 -8l-10 -4M4487 3356l17 -17M4613 3355l-20 -18l10 2m-10 -2l3 10M4765 3338l14 -4M4846 3336l-26 2l8 -6m-8 6l9 5M5023 3362l0 -26M5076 3348l-15 -24l10 5m-10 -5l0 11M5100 3339l-11 -7M5203 3340l1 13M5611 3346l-17 -3M5674 3345l-16 -14M5755 3332l-18 9M5964 3354l17 -10M6024 3326l-10 14M6088 3344l-24 3M2086 3382l-9 14M2488 3381l23 5M2641 3375l-6 26l-3 -10m3 10l7 -7M2778 3377l-14 -9M2829 3397l2 -15M2956 3384l-2 -15M3021 3382l2 -20M3286 3374l3 15M3481 3364l-17 24l1 -11m-1 11l10 -5M3703 3371l-6 16M3736 3374l15 8M3784 3382l27 9l-10 3m10 -3l-7 -8M3825 3393l13 -13M3879 3377l3 14M4030 3397l-15 -9M4108 3363l-2 26l-5 -9m5 9l6 -8M4714 3391l-5 -17M5146 3384l-18 -11M6093 3374l-3 21M6144 3394l-17 -10M6332 3382l-19 5M2157 3415l8 14M2207 3429l19 -21l-2 11m2 -11l-10 3M2237 3420l8 28l-8 -7m8 7l3 -11M2336 3423l14 9M2432 3416l23 15l-10 0m10 0l-4 -9M2568 3437l15 -11M2617 3436l13 -26l1 11m-1 -11l-9 6M2659 3427l15 -15M2788 3431l25 -4M3219 3417l-18 21l2 -11m-2 11l10 -3M3587 3410l11 18M3683 3434l-14 8M3761 3442l14 -9M3851 3422l12 -2M4046 3440l-1 -23M4093 3430l-19 -13M4124 3430l17 -4M4340 3441l-25 -13l11 -1m-11 1l6 9M4368 3430l18 13M4416 3423l15 9M4453 3413l17 12M4532 3436l25 -15l-5 10m5 -10l-11 0M4644 3426l0 -15M4679 3435l12 -27l2 11m-2 -11l-9 6M4796 3437l-17 0M4867 3425l15 -9M4927 3449l-6 -27l7 8m-7 -8l-3 10M5103 3438l5 -18M5289 3432l18 -24l-1 11m1 -11l-11 4M5329 3419l-7 13M5575 3444l-16 -14M5707 3438l-5 -24M5758 3427l-22 3M5792 3424l25 -11l-6 8m6 -8l-10 -2M5822 3428l14 -16M6089 3432l-20 1M6111 3413l6 23M6172 3429l-17 -5M6246 3437l-5 -28l7 8m-7 -8l-4 10M6299 3419l2 21M6392 3423l-3 -13M2089 3459l16 19M2197 3473l-21 6M2321 3450l7 28l-8 -8m8 8l3 -11M2592 3470l-5 -17M2740 3472l10 -22M2836 3491l3 -20M2963 3488l-13 -25l9 6m-9 -6l-1 11M2997 3468l13 3M3069 3469l-9 8M3247 3469l-22 17l4 -10m-4 10l10 -1M3329 3457l17 16M3613 3478l12 -4M3666 3483l-22 -5M4084 3477l-16 9M4483 3484l7 -12M4563 3468l21 -10M4760 3468l-24 -10M5057 3468l28 -7l-8 8m8 -8l-10 -3M5121 3464l29 5l-10 4m10 -4l-8 -7M5358 3461l16 9M5489 3471l7 12M5593 3460l10 8M5716 3462l16 9M5912 3478l14 -20M6034 3457l4 21M6137 3463l-14 17M6269 3452l11 15M2055 3509l17 -6M2809 3537l4 -24M2847 3510l16 7M3000 3520l-21 -2M3033 3510l2 20M3114 3504l10 24M3151 3519l22 -9M3195 3522l23 -17l-4 10m4 -10l-11 1M3369 3504l-8 17M3409 3504l1 26l-5 -8m5 8l5 -9M3589 3517l2 -12M3724 3510l-5 -12M4042 3509l-13 8M4097 3500l-5 30l-4 -11m4 11l8 -9M4473 3519l-26 -1l9 -5m-9 5l8 6M4517 3513l-22 -9M4549 3526l14 -12M4593 3513l23 -18l-4 10m4 -10l-11 1M4627 3523l24 3M5009 3514l-13 0M5158 3511l-6 -14M5575 3515l-6 20M5653 3532l15 -14M5993 3517l-11 -10M6074 3512l11 13M6104 3505l6 21M6392 3509l-6 17M2145 3558l-26 13l6 -9m-6 9l11 1M2357 3561l28 -3l-9 6m9 -6l-10 -5M2407 3551l5 27l-7 -8m7 8l4 -10M2701 3566l-11 -10M2837 3565l-3 -12M2942 3560l-29 8l8 -8m-8 8l11 3M2970 3550l-7 22M3187 3557l11 7M3240 3549l19 1M3319 3564l12 8M3373 3544l14 19M3408 3557l19 -19l-3 10m3 -10l-10 2M3566 3561l-6 -11M3690 3548l27 11l-11 2m11 -2l-6 -9M3799 3558l-19 -11M4222 3550l-19 -2M4435 3539l-12 18M4468 3545l12 6M4660 3554l18 1M4848 3557l-13 23l-1 -10m1 10l9 -5M4891 3549l24 3M4936 3543l-3 18M5132 3564l7 -28l3 10m-3 -10l-8 8M5179 3547l-14 20M5318 3563l-11 -18M5578 3553l20 2M5645 3550l-19 19l3 -10m-3 10l10 -2M5879 3554l-14 3M6321 3563l13 -4M2572 3608l16 6M2642 3599l-27 3l8 -6m-8 6l9 5M2749 3587l11 14M2799 3620l21 -16l-3 9m3 -9l-10 1M2886 3598l16 -13M2991 3592l10 14M3072 3595l7 18M3133 3615l-26 -15l11 0m-11 0l5 10M3305 3595l14 6M3368 3597l-5 11M3455 3598l-20 11M3571 3593l8 28l-8 -7m8 7l3 -11M3688 3602l-11 24l-1 -10m1 10l8 -5M3765 3616l-11 -23M3998 3624l-1 -23M4041 3597l-11 -5M4187 3601l-14 -12M4274 3594l15 11M4429 3601l-24 11l6 -8m-6 8l10 1M4519 3616l-25 -11l10 -2m-10 2l6 9M4567 3591l-19 11M4611 3594l-10 24M4786 3597l-19 4M5092 3620l4 -14M5152 3609l-15 -16M5613 3600l-26 9l7 -8m-7 8l10 2M5660 3585l14 16M5702 3610l23 -19l-4 11m4 -11l-11 2M5758 3598l-11 18M6101 3594l14 -3M6197 3604l22 12M6291 3585l11 26l-9 -6m9 6l2 -11M6347 3617l12 -8M6427 3613l26 -4l-7 7m7 -7l-9 -4M2357 3643l-1 16M2456 3649l27 -8l-7 8m7 -8l-10 -3M2557 3645l-24 14l5 -9m-5 9l11 0M2646 3645l-2 26l-5 -9m5 9l6 -8M2701 3665l-24 -17l11 1m-11 -1l4 10M2784 3665l-7 -20M2917 3659l18 -5M3013 3650l-11 -8M3054 3656l3 -26M3153 3657l13 -18M3193 3643l24 -13l-5 9m5 -9l-10 0M4078 3644l-16 4M4629 3641l0 28l-6 -9m6 9l6 -9M4803 3638l20 13M5411 3650l-9 -15M5570 3646l17 -13M5642 3652l-6 -17M5728 3648l-17 14M5818 3649l15 -8M5905 3637l-12 24l-1 -10m1 10l9 -6M6008 3649l-16 10M6091 3632l14 23l-9 -5m9 5l0 -10M6240 3632l-8 25M6368 3639l19 -5M6398 3648l17 -1M6487 3648l21 16l-10 -1m10 1l-3 -9M2211 3677l-14 17M2749 3700l-4 -14M2851 3689l-14 10M2950 3686l-7 -12M3162 3702l2 -15M3460 3679l-14 8M3629 3687l2 22M3682 3691l-14 -3M3906 3684l19 -6M4184 3677l21 7M4350 3699l18 -20l-2 10m2 -10l-10 3M4416 3692l-14 6M4552 3699l1 -30l6 10m-6 -10l-6 9M4646 3672l2 23M4790 3700l4 -26l4 9m-4 -9l-7 8M4952 3704l8 -11M5292 3681l5 12M5694 3686l21 8M5750 3673l3 24M6113 3700l2 -22M6193 3675l25 15l-11 0m11 0l-5 -10M6336 3693l9 9M6374 3690l15 13M6506 3675l-25 12l6 -9m-6 9l11 1M2094 3737l-21 -15M2324 3734l13 17M2423 3739l-11 -12M2787 3753l-9 -27l8 7m-8 -7l-2 11M2940 3739l-22 13M2953 3735l13 -7M3019 3736l1 13M3094 3743l23 -8M3247 3740l-17 10M3389 3733l-7 12M3473 3733l-1 21M3741 3719l8 28l-8 -8m8 8l3 -11M3805 3731l-17 17M3854 3734l-28 5l8 -7m-8 7l10 4M3870 3719l9 11M4074 3731l-16 3M4169 3727l-11 18M4251 3741l-17 -12M4313 3734l-21 8M4433 3733l11 6M4889 3741l14 -5M5041 3732l-20 1M5088 3738l-16 -12M5170 3740l-14 -24l9 5m-9 -5l0 11M5297 3732l26 -11l-6 9m6 -9l-11 -1M5449 3733l-12 22M5656 3730l-27 12l6 -9m-6 9l11 1M5663 3727l10 22M5785 3730l-18 -4M5955 3744l4 -23M6035 3755l14 -25l0 11m0 -11l-9 5M6139 3745l-10 -14M6231 3754l14 -25l0 11m0 -11l-10 5M6272 3753l15 -22l0 10m0 -10l-9 4M6323 3731l-13 -10M6362 3750l10 -14M6499 3718l14 14M6530 3720l23 7M2383 3764l-8 13M2438 3782l-17 -16M2495 3766l-22 5M2578 3769l-15 10M3000 3773l-16 9M3031 3774l9 10M3182 3796l-19 -17M3806 3773l5 13M3912 3779l8 9M4187 3777l-6 14M4224 3765l15 22l-9 -4m9 4l0 -10M4279 3766l-11 7M4339 3784l-24 2M4423 3784l-30 3l9 -7m-9 7l10 5M4642 3762l16 20M4686 3765l2 21M5151 3769l-10 13M5237 3800l-11 -22M5301 3772l-27 -2l9 -5m-9 5l8 6M5484 3776l-27 -9l10 -2m-10 2l7 8M6153 3760l18 20l-10 -3m10 3l-2 -10M6209 3797l-4 -27l7 8m-7 -8l-4 10M6485 3765l0 16M2098 3804l2 19M2134 3816l-3 28l-5 -10m5 10l7 -9M2180 3829l14 0M2834 3816l-16 17M2906 3829l12 -9M3012 3812l-2 22M3100 3808l7 12M3267 3818l20 7M3429 3802l-7 27l-3 -10m3 10l8 -7M3506 3820l14 12M3612 3825l-7 13M3841 3831l-14 2M3916 3821l9 10M4167 3806l-13 26l-1 -11m1 11l9 -6M4343 3829l-7 -23M4666 3814l15 17M4950 3839l0 -13M5452 3809l-19 16M5634 3820l-12 3M5692 3828l-23 -6M6039 3830l-4 -14M6375 3822l-2 -13M2156 3870l11 -16M2534 3852l-7 21M2562 3863l26 13l-11 1m11 -1l-6 -10M2677 3884l-4 -13M2714 3882l4 -24M2909 3871l-6 -18M2991 3876l-21 -21l11 3m-11 -3l3 11M3132 3876l-11 -18M3181 3854l-4 14M3397 3859l23 15l-11 0m11 0l-5 -10M3695 3861l-13 7M3855 3850l-2 17M4002 3870l-14 -18M4041 3880l1 -17M4131 3889l14 -23l0 10m0 -10l-9 5M4510 3867l-24 16l5 -10m-5 10l11 0M4732 3865l-11 9M4821 3862l23 9M4923 3887l1 -27l5 9m-5 -9l-6 9M5422 3867l10 -16M5481 3870l-5 -16M5558 3868l18 13M5737 3874l16 -6M5972 3869l-5 -17M6255 3874l13 2M6295 3882l24 -9M6443 3849l-1 20M2140 3911l-7 11M2378 3918l-15 -10M2408 3910l-8 -16M2570 3913l-18 8M2923 3893l1 24M3106 3922l8 -18M3164 3911l-18 -5M3278 3901l27 -2l-8 6m8 -6l-9 -5M3385 3919l-13 -17M3473 3911l-20 -6M3794 3920l-15 -3M3839 3908l-11 -5M4487 3903l-24 16l4 -10m-4 10l11 0M4619 3918l-16 -2M4754 3898l8 13M4892 3916l5 -23M4955 3917l-19 2M4992 3923l14 -13M5048 3919l-14 4M5133 3912l-7 -15M5266 3905l-13 4M5506 3912l-27 -6l10 -3m-10 3l7 7M5727 3916l-16 0M5864 3933l10 -24M6324 3925l12 -11M6464 3905l13 -1M6553 3917l-12 -21M2111 3942l6 10M2222 3959l-21 -15l10 1m-10 -1l4 9M2346 3962l13 -13M2422 3952l14 11M2617 3966l1 -18M2921 3947l22 1M2988 3945l12 -2M3093 3939l-12 13M3357 3962l8 -20M3837 3955l28 7l-11 3m11 -3l-8 -8M4047 3947l14 20M4510 3953l-24 7M4595 3968l-15 -7M4691 3962l-19 -20l10 3m-10 -3l2 10M4718 3954l18 -3M4816 3953l13 -3M4855 3962l25 -14l-5 9m5 -9l-11 -1M5149 3959l-2 -21M5205 3945l-9 10M5241 3941l19 16M5423 3947l5 26l-7 -7m7 7l3 -9M5511 3950l27 2l-9 5m9 -5l-8 -6M5573 3972l-4 -16M5707 3962l7 -23M5795 3944l12 12M5974 3958l21 -17l-3 10m3 -10l-10 1M6083 3955l-12 20M6243 3949l18 6M6390 3973l1 -21M6492 3971l-11 -12M6595 3958l-18 -14M2289 3993l-11 12M2409 4002l0 14M2453 3994l13 -8M2511 3999l-1 13M2815 4008l12 -6M3098 3997l-3 18M3166 4009l-27 -5l10 -4m-10 4l8 7M3236 4011l-4 -12M3505 4016l3 -25M3585 4005l-23 -19l11 1m-11 -1l4 11M3714 3996l-6 11M3738 4004l11 -7M3856 3988l-20 3M4110 3997l14 -7M4297 4007l16 -7M4336 4009l24 -2M4568 4005l16 10M4631 3988l-23 3M4748 3994l13 7M4785 3995l26 13l-11 1m11 -1l-6 -10M5020 4005l22 3M5117 3989l3 16M5159 3986l21 17l-10 -1m10 1l-3 -10M5405 3977l8 28l-8 -8m8 8l3 -11M5713 4001l5 -14M6221 3982l-3 18M6520 4000l-17 -16M2160 4060l-10 -20M2210 4061l-12 -16M2404 4024l-14 24l0 -10m0 10l9 -5M2452 4023l-16 21l1 -10m-1 10l9 -4M2470 4054l7 -12M2520 4023l0 20M2663 4046l-13 -2M2709 4044l6 -19M2894 4043l-10 12M2937 4043l-3 16M3028 4048l-9 -21M3300 4054l1 -26M3356 4033l21 4M3395 4029l3 17M3499 4062l-14 -19M3591 4043l-22 -8M3643 4043l-19 -21l10 3m-10 -3l2 10M3684 4054l-9 -22M3740 4038l-20 16M3851 4064l0 -27l5 9m-5 -9l-5 9M4049 4041l-27 12l6 -9m-6 9l11 1M4269 4031l-6 19M4499 4029l-7 12M4697 4045l-4 -17M4731 4047l18 -5M4965 4039l-13 5M5120 4036l-25 -2M5244 4038l-21 18l3 -10m-3 10l11 -2M5479 4040l4 16M5527 4048l-17 -23l10 4m-10 -4l1 11M5616 4040l-8 -12M5646 4045l19 10M5730 4051l22 -1M5901 4025l-21 21l3 -11m-3 11l11 -3M6161 4040l-5 17M2316 4088l22 -6M2402 4093l20 -10M2487 4105l18 -21l-2 10m2 -10l-10 3M2600 4065l8 27l-8 -7m8 7l3 -10M2830 4088l-17 -9M2860 4096l13 3M2967 4097l11 -26l1 11m-1 -11l-9 6M3333 4087l16 7M3518 4106l-3 -28l6 9m-6 -9l-5 10M3609 4076l12 20M3648 4110l0 -27l5 9m-5 -9l-5 9M3849 4090l-17 8M3877 4062l-5 28l-4 -10m4 10l7 -8M4032 4099l-18 -17M4372 4084l24 3M4533 4085l0 20M4799 4088l14 -4M5410 4098l-12 -6M6452 4085l22 -1M2314 4119l-29 6l8 -8m-8 8l11 4M2378 4127l27 4l-9 4m9 -4l-8 -7M2437 4143l7 -14M2618 4128l22 2M2766 4133l-14 -1M3084 4122l-10 8M3211 4134l15 12M3319 4120l-12 6M3785 4132l-14 19M3857 4139l22 -18l-4 10m4 -10l-11 1M3992 4126l18 18M4191 4114l2 23M4235 4127l-27 0l9 -5m-9 5l9 5M4593 4128l27 2l-9 5m9 -5l-8 -6M4733 4132l20 -20l-3 10m3 -10l-10 2M4769 4143l7 -15M4923 4131l-21 14M5108 4135l-15 13M5455 4138l27 4l-10 4m10 -4l-8 -7M5644 4128l24 -15l-5 10m5 -10l-11 0M5838 4147l-13 -27l9 6m-9 -6l-1 11M5880 4114l-9 18M5946 4143l-10 -11M6157 4113l12 20M6303 4131l-11 15M2087 4181l8 -9M2263 4192l8 -23M2325 4188l-11 -27l9 7m-9 -7l-2 11M2365 4177l19 -8M2450 4182l21 2M2740 4185l3 -22M3049 4164l18 2M3347 4174l-14 -16M3462 4167l15 -5M3524 4187l-18 -11M3569 4173l8 -12M3615 4159l4 13M3645 4187l4 -16M3759 4176l-15 3M3885 4156l14 17M4089 4170l-25 8l6 -8m-6 8l10 2M4220 4164l-16 14M4246 4161l-5 13M4489 4169l-25 6M4520 4196l0 -22M4616 4179l4 12M4891 4167l28 -5l-8 7m8 -7l-10 -4M5408 4174l0 -19M5534 4162l10 14M5605 4179l-27 2l8 -6m-8 6l9 5M5710 4179l15 5M5904 4184l19 -10M6287 4189l-3 -24M2090 4206l-28 10l7 -9m-7 9l11 2M2110 4211l-12 19M2238 4210l20 22l-11 -3m11 3l-2 -11M2304 4215l-5 12M2943 4233l13 -8M3114 4229l13 2M3149 4216l23 6M3325 4230l-15 -5M3353 4198l12 24l-9 -5m9 5l1 -10M3533 4220l15 -20M3586 4219l17 -10M3684 4234l-5 -12M3823 4209l-9 28l-3 -11m3 11l8 -7M4476 4216l-15 13M5211 4223l-15 0M5437 4211l-21 15M5472 4229l-12 -16M5602 4219l17 0M5932 4214l19 -8M6161 4225l11 10M6235 4230l23 -1M6288 4232l14 -26l0 11m0 -11l-10 5M6340 4230l0 -22M6385 4220l-4 -14M2149 4267l-25 8M2229 4258l15 17M2282 4248l3 24M2340 4274l-20 -13M2628 4259l24 -2M2824 4278l6 -15M3286 4253l-8 14M3343 4267l-1 -14M3831 4246l9 16M3974 4266l9 -12M4387 4264l-2 15M4605 4277l16 -18M4944 4249l13 10M5036 4244l17 18M5176 4251l-19 7M5452 4249l-5 21M5583 4269l0 -27l5 9m-5 -9l-5 9M5760 4252l4 23M5908 4262l-16 -3M6135 4266l14 -10M6278 4283l16 -21l-1 10m1 -10l-9 4M2069 4323l15 -18M2214 4305l-21 -2M2249 4301l-13 0M2338 4294l17 7M2434 4299l-11 21M2562 4324l22 -12M2707 4299l7 10M2938 4295l-2 19M3043 4308l-10 -22M3079 4303l-9 9M3126 4319l1 -27l5 9m-5 -9l-6 9M3268 4290l3 18M3294 4317l16 -17M3508 4309l-29 -5l10 -4m-10 4l8 7M3668 4307l26 -4M3768 4287l-14 18M3999 4312l15 -9M4028 4319l29 -5l-8 8m8 -8l-10 -4M4081 4312l14 -19M4174 4310l29 7l-11 4m11 -4l-8 -8M4226 4307l-3 19M4271 4305l-1 -17M4492 4321l13 -26l1 11m-1 -11l-9 6M4834 4292l-21 17l3 -10m-3 10l10 -1M4974 4307l-15 7M5017 4310l7 -10M5225 4302l17 18M5387 4294l-18 8M5428 4301l-12 5M5557 4310l-7 11M5616 4327l-18 -19M5672 4314l-29 -8l11 -3m-11 3l8 8M5983 4303l-10 -12M6298 4306l-16 10M6351 4309l2 12M6409 4311l-30 2l9 -7m-9 7l10 5M6446 4325l-20 -21l11 3m-11 -3l2 11M6492 4304l-15 12M2232 4344l-18 2M2513 4341l-2 21M2691 4357l12 -25l1 10m-1 -10l-9 6M2789 4348l-13 18M2959 4356l10 -18M3015 4336l-2 13M3223 4350l24 -16l-5 10m5 -10l-11 0M3271 4337l20 8M3669 4355l-26 2M3790 4337l-6 14M3967 4345l23 -8M4013 4358l10 -21M4126 4356l-25 -10l10 -2m-10 2l6 8M4868 4356l-18 -3M4899 4362l13 -26l1 11m-1 -11l-9 6M5173 4358l19 -2M5217 4347l-12 7M5278 4331l-12 20M5876 4337l-24 9M6318 4348l27 6l-10 3m10 -3l-8 -7M2153 4374l-5 21M2387 4381l15 11M2567 4388l21 -6M2804 4384l-5 19M2853 4376l-16 24l0 -11m0 11l10 -5M2886 4389l24 7M3136 4398l-17 -6M3305 4415l19 -21l-2 11m2 -11l-10 3M3490 4392l12 14M3549 4399l-13 1M3649 4389l-27 -7l10 -3m-10 3l7 8M3687 4406l-8 -17M4035 4400l23 10M4154 4408l-22 -9M4290 4397l-23 -8M4593 4387l-1 26M5137 4395l18 -6M5185 4395l13 -2M5315 4390l19 13M5662 4398l-14 10M5791 4419l-2 -27l6 8m-6 -8l-5 9M5945 4401l-27 -3l9 -5m-9 5l8 6M5992 4398l-28 9l7 -9m-7 9l11 3M6026 4398l-12 8M6214 4391l10 22M6296 4401l22 2M6349 4412l6 -22M6390 4391l14 19M6442 4391l-25 -11l10 -1m-10 1l6 8M2495 4423l1 17M2584 4425l4 15M2714 4427l24 7M2780 4457l16 -25l0 11m0 -11l-10 5M2978 4422l-17 14M3071 4444l-25 -8l10 -2m-10 2l7 8M3109 4439l-12 9M3238 4452l-10 -7M3288 4457l-4 -28l7 8m-7 -8l-4 10M3412 4444l15 -18M3460 4426l22 6M3502 4431l9 19M3547 4442l11 -4M3806 4425l-7 25l-3 -10m3 10l7 -7M3881 4441l13 9M3948 4422l-18 22l1 -11m-1 11l10 -4M4060 4427l12 6M4407 4444l-17 -20l9 3m-9 -3l1 10M4577 4450l2 -30l5 10m-5 -10l-7 9M4608 4430l22 10M4674 4423l1 25M5080 4440l17 18M5451 4431l9 14M5669 4442l22 13M5705 4438l27 -8l-7 8m7 -8l-10 -3M5757 4456l15 -23l0 10m0 -10l-9 4M6059 4452l-25 -5M6131 4442l26 13l-11 1m11 -1l-6 -9M6282 4445l-18 -4M6323 4437l13 18M6466 4438l-13 -4M2262 4466l-13 21M2491 4484l-8 15M3006 4473l-14 1M3190 4479l-20 -9M3235 4477l-13 20M3406 4485l-13 -12M3548 4485l-9 16M3577 4492l23 0M3807 4481l-1 21M3867 4475l-21 3M4129 4487l13 6M4177 4479l-5 -12M4221 4499l19 -17M4407 4493l14 -12M4448 4482l19 -21l-2 11m2 -11l-10 3M4514 4480l-17 -10M4544 4472l12 9M4593 4491l19 4M4716 4474l25 6l-9 3m9 -3l-7 -7M4819 4481l10 12M4889 4492l-29 -9l11 -3m-11 3l8 9M4985 4482l-17 13M5074 4471l-11 21M5147 4484l-8 16M5519 4494l18 -3M5555 4478l29 1l-10 6m10 -6l-9 -6M5696 4494l7 -15M5736 4492l15 -19M6028 4492l-6 -20M6069 4477l-6 20M6203 4463l18 19M6300 4479l15 4M6516 4478l23 1M2180 4509l17 13M2392 4519l20 15M2472 4540l-25 -8l10 -3m-10 3l7 7M2837 4517l-10 23M2875 4543l-18 -19l10 3m-10 -3l2 10M3293 4520l2 12M3322 4523l16 -2M3427 4516l15 16M3479 4505l-3 26l-4 -9m4 9l6 -8M3624 4529l-23 -6M3702 4522l4 -13M4012 4535l0 -18M4247 4522l25 7M4442 4530l9 -9M4491 4526l2 -13M4676 4545l-16 -20M5211 4523l23 -8M5278 4533l-28 6l8 -7m-8 7l10 4M5440 4515l17 24l-10 -4m10 4l-1 -11M5578 4528l15 -17M5707 4527l28 -1l-9 6m9 -6l-9 -5M6005 4526l-10 -6M6107 4526l-24 9M6121 4508l17 17M6383 4534l-10 -20M6572 4534l-21 -5M2142 4559l25 10l-10 2m10 -2l-6 -8M2260 4570l-25 3M2296 4567l1 13M2387 4554l-6 27l-4 -10m4 10l7 -8M2459 4578l-25 -4M2689 4571l-26 14l6 -10m-6 10l11 1M2837 4559l15 17M2908 4567l-16 9M3043 4578l-19 -4M3259 4559l12 7M3580 4552l22 17l-11 -1m11 1l-4 -10M3652 4585l-21 -9M3892 4582l14 -4M3984 4578l17 -13M4147 4562l-24 1M4517 4575l-6 13M5458 4577l12 -6M5504 4563l26 -1l-8 5m8 -5l-9 -5M5604 4564l15 7M5660 4573l-14 -5M5799 4573l-15 -1M5987 4580l4 -15M6187 4563l23 16l-11 -1m11 1l-4 -10M6271 4578l-27 0l9 -5m-9 5l9 5M2149 4635l-18 -22l10 4m-10 -4l1 11M2508 4613l-20 4M2566 4618l-9 15M2585 4631l4 -13M2909 4600l21 15M3152 4620l11 9M3297 4597l-10 19M3766 4618l-22 -1M3899 4625l-9 -11M3950 4632l-18 -22l10 3m-10 -3l2 11M4079 4618l-5 -25M4375 4611l11 23M4450 4594l-5 21M4493 4613l-4 12M4741 4595l20 17l-10 -1m10 1l-3 -9M5186 4633l-15 -20M5442 4608l29 -1l-9 6m9 -6l-10 -5M5586 4639l6 -29l4 10m-4 -10l-8 8M5680 4623l9 -15M5913 4618l-19 3M6059 4610l-22 -4M6142 4623l-22 -4M6473 4609l-16 24l0 -11m0 11l10 -5M2086 4655l-16 -7M2116 4658l0 -16M2363 4674l-20 -17l10 2m-10 -2l3 10M2438 4654l14 7M2998 4662l-17 3M3020 4639l11 27l-9 -7m9 7l2 -11M3078 4657l-13 -5M3205 4662l19 11M3267 4683l-3 -29l7 9m-7 -9l-5 10M3299 4641l5 16M3495 4661l18 -11M3574 4666l21 -9M3907 4640l-11 27l-2 -11m2 11l9 -6M4058 4661l-17 16M4182 4648l15 15M4278 4661l-20 1M4330 4643l-10 25l-2 -10m2 10l8 -6M4569 4662l-18 -13M4840 4653l-27 -10l11 -2m-11 2l7 9M4865 4662l1 -12M5055 4651l21 10M5135 4674l19 -23l-1 11m1 -11l-11 4M5784 4653l18 -6M6203 4662l-6 13M2073 4704l23 -3M2149 4689l-18 24l1 -11m-1 11l10 -4M2220 4697l23 15l-10 0m10 0l-4 -9M2568 4715l-21 -10M2636 4699l5 12M2836 4701l-2 -18M2997 4698l9 22M3191 4716l12 -24l1 10m-1 -10l-9 5M3222 4694l20 -2M3283 4690l7 22M3639 4705l15 -25l0 11m0 -11l-10 5M3679 4708l27 -1l-9 6m9 -6l-9 -5M4031 4714l4 -24M4577 4718l-19 -9M4712 4702l15 8M5093 4705l-15 -8M5183 4720l-2 -24M5303 4698l9 9M5527 4695l13 0M6013 4706l-14 -4M6053 4689l-8 19M6240 4700l-6 -14M6398 4705l23 13l-10 1m10 -1l-5 -9M6547 4701l14 -1M2064 4728l1 21M2108 4738l14 -2M2174 4749l-10 -10M2266 4727l-17 20l2 -10m-2 10l9 -3M2442 4754l-16 -11M2632 4744l-16 0M2672 4746l-16 23l1 -11m-1 11l10 -4M2863 4733l-14 24l0 -10m0 10l9 -5M2945 4742l5 -11M3173 4744l14 3M3268 4752l13 -15M3507 4736l-9 12M3822 4740l-23 17l4 -10m-4 10l11 -1M4052 4757l2 -14M4102 4750l-14 14M4176 4733l12 13M4538 4738l9 10M4595 4763l11 -14M4816 4744l27 -9l-7 8m7 -8l-10 -2M5204 4731l-11 25l-2 -10m2 10l8 -6M5694 4748l16 6M5895 4738l-24 17l4 -10m-4 10l11 -1M6025 4768l-18 -20l10 3m-10 -3l2 10M6105 4765l11 -20M6169 4732l-23 18l4 -10m-4 10l11 -1M6247 4732l19 11M6359 4767l-9 -26l8 7m-8 -7l-2 10M6403 4766l-5 -20M6430 4723l2 29l-6 -9m6 9l5 -10M6583 4738l-20 5M2228 4799l12 -20M2636 4783l26 7l-10 3m10 -3l-7 -7M2715 4792l23 -14l-5 9m5 -9l-10 0M2833 4795l10 10M2873 4791l-20 -20l10 2m-10 -2l2 10M2918 4769l13 21M2972 4775l-9 16M3065 4779l4 17M3252 4809l0 -15M3375 4796l-6 11M3755 4778l-18 8M3922 4782l20 -4M4019 4797l-6 -19M4626 4807l-5 -13M4726 4772l-10 27l-2 -11m2 11l9 -7M4749 4798l4 -22M4811 4787l-28 -3l9 -5m-9 5l8 6M5446 4797l14 -23l0 10m0 -10l-9 5M5592 4786l-23 -2M6007 4795l-5 -14M6231 4800l-17 -2M6273 4794l20 -12M6417 4791l-6 20M2066 4840l-9 -25l8 6m-8 -6l-2 10M2294 4822l-7 12M2398 4843l1 -14M2538 4829l-10 -10M2609 4837l19 -1M2676 4843l-29 -6l11 -4m-11 4l8 8M2989 4831l8 14M3030 4836l25 14l-11 0m11 0l-5 -10M3179 4821l-8 15M3302 4826l1 13M3359 4827l-9 26l-2 -10m2 10l8 -7M3487 4830l16 -7M3637 4830l-19 -12M3816 4835l6 15M3867 4831l-26 -5l10 -3m-10 3l7 7M4161 4844l-28 2l9 -6m-9 6l9 5M4230 4835l10 8M4452 4823l-2 24M4656 4846l-15 -4M5000 4818l6 17M5212 4848l-18 -6M5606 4827l17 16M5643 4840l15 8M5931 4813l16 22l-10 -4m10 4l-1 -10M6121 4836l-7 15M6179 4835l-23 -11M6304 4823l-9 21M6355 4828l-4 18M6395 4829l-20 22l2 -11m-2 11l11 -3M6540 4835l-10 11M6576 4818l-3 25M2171 4884l20 11M2286 4873l-8 15M2380 4866l-16 4M2463 4873l1 29l-6 -9m6 9l5 -10M2502 4871l19 8M2553 4884l8 -28l3 11m-3 -11l-8 7M2589 4889l28 -5l-8 7m8 -7l-10 -4M2772 4881l14 2M2949 4878l9 9M3249 4877l-2 18M3274 4862l13 14M3345 4895l-7 -20M3389 4878l-22 3M3763 4896l-13 -18M3836 4884l19 -6M3887 4881l15 9M3945 4883l-7 10M3967 4878l14 4M4262 4861l-1 15M4387 4868l-11 25l-1 -11m1 11l9 -6M4629 4885l-12 -1M4942 4872l12 10M5448 4892l12 -26l1 11m-1 -11l-9 6M5490 4858l8 20M5589 4891l-16 -8M5914 4861l-7 21M6178 4866l16 13M6516 4879l-15 3M2060 4920l17 19M2149 4906l18 17M2403 4918l-29 -4l10 -4m-10 4l9 7M2857 4899l6 29l-8 -8m8 8l4 -11M3367 4928l-3 -18M3412 4933l-11 -8M3454 4919l-12 -7M3666 4921l7 15M3767 4912l4 15M4002 4916l-2 29l-5 -10m5 10l6 -9M4082 4926l5 -15M4287 4925l-15 8M4326 4917l-20 21l2 -11m-2 11l11 -3M4476 4923l-22 5M4517 4921l-24 12l5 -9m-5 9l10 1M4824 4941l-13 -24l9 5m-9 -5l-1 10M4959 4933l3 -13M5072 4936l-13 -9M5232 4923l12 11M5297 4926l-26 -2M5383 4914l13 -3M5441 4912l-12 7M5469 4917l10 11M5853 4929l-7 -14M5918 4911l12 21M6072 4919l13 -4M6120 4916l-22 10M6168 4924l-27 -5l10 -4m-10 4l8 7M6200 4912l13 3M6358 4917l-8 22M2366 4969l13 -20M2452 4951l11 19M2529 4970l-29 6l8 -7m-8 7l10 4M2560 4973l-18 -16M2727 4956l20 12M3232 4957l2 26M3881 4971l17 -2M3925 4969l13 -8M4055 4982l10 -13M4316 4961l-19 23l2 -11m-2 11l11 -4M4362 4973l-19 0M4482 4969l-16 -10M4634 4967l-24 -11M4672 4952l-17 14M4774 4954l-13 8M4865 4972l-10 -24M5174 4956l-9 18M5292 4966l21 12M5451 4953l-9 24M5636 4974l1 -26M5864 4980l-21 -10M6091 4971l24 -4M6213 4972l17 5M6507 4966l-14 -10M6546 4960l26 -4l-8 6m8 -6l-9 -4M2163 5018l5 -12M2344 4996l20 8M2526 5004l2 24M2665 4998l-8 11M2733 5012l-22 6M3500 4997l-11 18M4084 5016l26 11l-11 2m11 -2l-6 -9M4171 5021l15 -11M4376 5021l-25 -4M5010 5018l20 -16M5159 5019l-20 -13M5189 5027l8 -12M5252 4997l-1 20M5339 5011l-2 19M5473 5021l-5 -21M5850 4993l-25 14l5 -9m-5 9l11 0M5926 5012l12 -12M6120 4997l-13 19M6346 5005l-14 23l0 -10m0 10l9 -4M2076 5049l25 -5M2356 5061l2 -23M2413 5072l19 -16M2610 5053l-16 -14M2685 5055l24 17l-11 -1m11 1l-4 -10M3013 5044l-16 14M3700 5070l-4 -16M4242 5039l15 15M4441 5060l12 -20M4484 5056l-21 14M4865 5042l-20 9M5121 5065l16 -8M5643 5065l-4 -22M5733 5076l-4 -20M5860 5046l-16 3M5902 5069l-7 -10M6052 5069l1 -21M6075 5058l16 -6M6143 5036l-18 24l1 -11m-1 11l11 -4M6234 5059l-21 -9M6384 5049l-17 20M6458 5055l19 20l-10 -3m10 3l-2 -10M6485 5068l27 -6l-7 7m7 -7l-10 -3M2334 5109l7 -18M2621 5095l-15 -7M3276 5106l-6 -16M3495 5091l1 20M3590 5103l-25 -1M3851 5091l3 28l-6 -8m6 8l5 -10M3892 5092l16 8M4230 5107l17 -5M4510 5110l2 -29l5 10m-5 -10l-6 9M4632 5101l18 13M4765 5091l26 -5l-7 7m7 -7l-9 -4M5255 5106l-24 -13l10 -1m-10 1l5 9M5845 5113l-14 -23l9 5m-9 -5l0 10M5979 5090l-25 6M2223 5161l11 -22M2265 5139l10 17M2552 5133l5 23M2700 5145l-7 -17M2836 5128l-4 15M2896 5138l-29 2l9 -6m-9 6l10 5M2925 5133l-12 14M2964 5145l23 -16l-4 10m4 -10l-11 1M3042 5143l28 1l-9 5m9 -5l-9 -6M3425 5137l7 12M3605 5145l-8 9M3634 5141l29 7l-11 3m11 -3l-8 -8M4220 5137l-20 6M4442 5156l6 -19M4676 5142l-16 10M4719 5130l4 21M5121 5143l14 10M5185 5133l-14 10M5255 5155l12 -20M5498 5134l-2 26M5526 5135l25 12l-10 1m10 -1l-6 -9M5735 5142l0 -20M5825 5143l-15 -10M5853 5158l20 -15M6351 5154l27 -13l-6 10m6 -10l-11 -1M6416 5136l16 -5M6454 5138l8 -11M2404 5180l-12 18M2560 5184l25 7M2864 5169l-20 22l2 -11m-2 11l11 -3M2895 5196l-14 -3M2949 5191l-18 -12M3053 5171l-23 10M3083 5188l-17 10M3133 5198l-2 -14M3276 5179l-24 0M3353 5176l-15 1M3684 5204l-4 -19M3720 5194l23 -16l-4 10m4 -10l-11 1M3759 5174l24 16l-11 0m11 0l-5 -10M3862 5176l-15 9M4259 5185l12 20M4354 5185l21 -17l-4 10m4 -10l-10 1M4403 5195l10 -7M4511 5183l-14 11M4641 5179l1 15M4840 5185l-14 -8M4890 5179l-18 2M5026 5201l-15 -15M5315 5199l28 -7l-8 8m8 -8l-10 -3M5472 5169l-1 21M5596 5175l12 26l-9 -6m9 6l1 -11M5762 5188l-27 11l7 -9m-7 9l11 2M5850 5182l-19 10M5938 5177l0 25M6073 5172l-12 7M6115 5199l-9 -9M2358 5221l10 10M2574 5217l23 17l-11 -1m11 1l-4 -10M2697 5223l-22 6M2958 5241l12 -22M3071 5235l-29 8l8 -8m-8 8l11 3M3098 5213l-2 15M3247 5227l-23 -10M3276 5226l16 16M3941 5221l-10 22M3982 5211l-13 21M4096 5228l21 -7M4334 5211l9 19M4440 5230l16 -11M4726 5219l-18 18M4862 5236l-18 11M4900 5223l-21 11M5000 5229l-11 -6M5050 5210l-10 25l-2 -10m2 10l8 -6M5510 5247l-24 -11l10 -1m-10 1l5 8M5756 5227l18 -4M5964 5242l-26 -15l11 0m-11 0l5 10M6046 5254l-14 -26l10 6m-10 -6l-1 11M6218 5240l6 -14M6337 5222l-8 24M6397 5235l19 -8M6466 5244l-2 -30l6 9m-6 -9l-5 10M6550 5210l10 20M2215 5275l-19 -1M2246 5261l-9 9M2313 5288l-15 -18M2764 5265l-1 21M2895 5290l23 -13l-5 9m5 -9l-10 0M3041 5286l-9 -19M3132 5276l-12 -9M3169 5266l-13 3M3232 5277l-29 7l8 -8m-8 8l11 4M3264 5275l21 8M3324 5272l-29 6l8 -8m-8 8l11 4M3590 5289l13 -13M3731 5263l-3 18M3903 5270l5 24M3949 5263l5 16M4002 5285l-14 -14M4145 5275l-13 -15M4278 5276l-10 -14M4372 5285l-30 -1l10 -6m-10 6l9 6M4420 5257l-12 17M4517 5273l-4 -16M4681 5264l20 12M4829 5268l19 -3M5027 5276l-18 4M5073 5266l-26 4l7 -7m-7 7l9 4M5302 5266l-9 18M5524 5255l6 24M5847 5287l-4 -12M6155 5278l14 -4M6216 5257l4 19M6290 5274l7 10M2597 5323l21 11M2793 5333l-3 -17M2967 5326l-3 -12M3238 5309l6 23M3319 5315l29 6l-11 4m11 -4l-8 -8M3490 5305l-25 12l6 -9m-6 9l10 1M3955 5308l-26 0l9 -5m-9 5l8 5M4117 5338l-3 -24M4214 5331l-14 -6M4251 5305l-15 21M4429 5298l-4 23M4492 5305l-13 10M4523 5337l15 -21M5251 5318l17 17M5498 5316l10 9M5582 5326l3 -19M5720 5311l12 17M5821 5311l-26 -5l9 -4m-9 4l7 7M5947 5310l18 18M6403 5329l9 -11M2073 5367l-12 -20M2445 5375l-10 -12M2544 5365l-16 5M2856 5371l-20 -16M2990 5373l-20 -16M3029 5376l13 -18M3142 5366l-16 4M3309 5373l-6 -18M3447 5386l6 -28l4 10m-4 -10l-7 8M3541 5375l-13 -8M3764 5369l3 -12M3988 5372l8 -23M4046 5363l13 21M4186 5365l-11 -22M4299 5359l-26 -9l10 -2m-10 2l7 8M4522 5360l-25 -2M4556 5360l-3 16M4747 5353l-25 3M4840 5358l-11 18M5044 5351l12 1M5178 5346l25 14l-11 0m11 0l-5 -10M5324 5358l13 -1M5381 5358l-11 -8M5443 5367l-17 -14M5468 5355l29 7l-11 3m11 -3l-8 -8M5599 5372l10 -7M5703 5366l-12 6M5739 5357l9 -10M5851 5350l-12 17M5872 5358l10 21M5981 5345l7 15M6030 5356l-1 15M6065 5352l4 15M6482 5354l-14 -4M2413 5414l-18 -17M2565 5397l-23 9M2770 5415l28 1l-9 5m9 -5l-9 -6M3087 5404l12 12M3276 5421l12 -16M3440 5414l-11 6M3552 5406l1 22M3625 5416l-12 -6M4260 5384l5 25M4336 5415l3 -13M4535 5426l-4 -23M4576 5424l-3 -18M4649 5406l23 -8M4898 5413l-10 -12M4976 5406l17 -13M5269 5408l5 -16M5678 5404l12 -15M5852 5405l6 -14M5950 5399l-9 23M6093 5410l10 9M6557 5395l10 17M2070 5448l-9 -12M2108 5448l27 12l-11 2m11 -2l-6 -9M2148 5451l18 -16M2185 5446l20 -4M2334 5446l8 24M2715 5436l6 29l-8 -8m8 8l4 -11M2771 5430l-6 20M2935 5446l14 26l-10 -6m10 6l1 -11M3304 5464l-6 -18M3462 5457l-24 -8M4013 5437l-18 16M4091 5459l-15 -9M4219 5458l3 -16M4290 5466l-8 -17M4543 5466l4 -27l4 9m-4 -9l-6 8M5336 5452l17 10M5472 5454l2 -13M5620 5458l-3 -29l7 9m-7 -9l-5 10M5894 5429l-17 24l1 -11m-1 11l10 -4M5937 5432l6 27l-7 -7m7 7l3 -10M6366 5441l-21 15M6446 5446l-13 14M6485 5454l13 5M6565 5449l15 17M2109 5485l-26 -2M2387 5484l-25 13l5 -9m-5 9l11 1M2564 5492l-17 -6M2728 5478l18 19l-10 -3m10 3l-2 -10M2776 5495l23 -18l-4 10m4 -10l-11 1M2857 5496l18 -10M2944 5492l27 4l-10 4m10 -4l-8 -7M3009 5503l-15 -1M3054 5496l12 -18M3084 5506l21 -13M3149 5484l21 6M3227 5503l17 2M3546 5498l19 -15M3849 5507l-25 -11l10 -1m-10 1l6 8M4501 5504l-18 -9M4522 5501l7 -19M4631 5489l-18 2M4853 5494l1 19M4941 5492l-16 -14M4975 5495l21 2M5133 5495l-1 22M5326 5494l-13 0M5545 5498l10 11M5721 5478l3 16M6061 5504l-23 1M6187 5483l10 15M6225 5489l8 25l-8 -7m8 7l2 -10M6331 5490l-1 12M6374 5496l-6 -13M6409 5489l5 16M2101 5542l27 4l-9 4m9 -4l-8 -7M2203 5519l14 18M2432 5531l-2 18M2576 5530l-22 1M2723 5544l-6 -16M2769 5543l0 -13M2806 5526l-14 21M2912 5541l-29 -4l10 -4m-10 4l8 7M3273 5541l-12 -17M3371 5545l-18 -22l10 3m-10 -3l2 11M3509 5529l-18 1M3556 5534l-19 -9M3817 5531l-7 13M3915 5529l-15 5M4229 5552l1 -18M4413 5533l4 12M4520 5542l-21 -4M4548 5531l-3 27l-4 -10m4 10l7 -8M4643 5547l8 -14M4851 5541l26 8l-10 2m10 -2l-7 -8M4987 5545l-27 -2l9 -5m-9 5l8 6M5069 5545l-3 -20M5299 5525l-22 9M5704 5547l-6 -29l8 8m-8 -8l-4 10M5746 5548l3 -22M5793 5532l-12 1M6035 5537l-21 0M6198 5519l7 22M6297 5535l-2 14M2268 5578l12 25l-9 -6m9 6l1 -11M2552 5581l-18 -12M2680 5570l23 9M2963 5565l10 21M3272 5575l14 -1M3339 5592l6 -19M3414 5581l16 -7M3462 5573l2 14M3562 5574l16 1M3708 5589l-19 -23l11 4m-11 -4l2 11M3828 5582l12 -4M4212 5588l-1 -19M4266 5576l-15 -1M4292 5575l23 4M4436 5584l11 18M4487 5572l-23 16l4 -10m-4 10l11 -1M4525 5593l-12 -4M4596 5568l-26 9l7 -8m-7 8l10 2M4709 5598l16 -24l-1 11m1 -11l-10 4M4844 5572l8 9M5169 5589l19 3M5406 5587l12 -25l1 11m-1 -11l-9 6M5540 5602l3 -17M5719 5582l9 -16M5859 5578l29 6l-11 4m11 -4l-8 -8M5915 5571l-2 17M6004 5576l9 18M6228 5590l16 -8M6311 5598l14 -18M6377 5578l-9 14M6431 5568l-20 17l3 -9m-3 9l10 -1M6565 5596l-21 -9M2079 5636l-6 -26l7 7m-7 -7l-3 10M2106 5632l21 -20l-3 10m3 -10l-11 2M2164 5630l12 -24l1 10m-1 -10l-9 5M2264 5635l-14 -24l9 5m-9 -5l0 11M2371 5633l20 9M2478 5628l-14 4M2546 5636l-24 -16l11 1m-11 -1l4 10M2678 5626l-21 -11M2778 5615l-21 8M2799 5644l5 -20M2907 5633l-25 0M3052 5629l-26 14l6 -9m-6 9l11 1M3353 5644l20 -15M3423 5633l-23 -10M3645 5644l-7 -16M3687 5623l-7 24M3735 5631l-13 7M3768 5642l-8 -21M4136 5636l-16 -11M4196 5620l-21 7M4210 5621l21 8M4316 5639l-8 -9M4467 5634l-3 -13M4731 5624l9 -13M4845 5614l-23 8M4957 5606l-3 26M5523 5630l-11 6M5570 5636l5 -18M5614 5639l-8 -19M5654 5640l8 -19M5810 5631l-24 -18l11 1m-11 -1l4 10M5857 5638l-17 -6M5935 5612l10 9M6110 5620l24 -5M6214 5635l-24 -9M6396 5641l2 -22M2284 5680l-29 0l10 -6m-10 6l9 6M2322 5670l-22 -1M2366 5682l2 -14M2771 5672l23 5M2813 5655l16 21M3050 5673l0 -19M3373 5666l10 -9M3412 5680l28 -6l-8 7m8 -7l-10 -4M3486 5661l-9 22M3525 5656l-7 11M3605 5668l11 -8M4072 5669l15 1M4102 5667l10 9M4149 5675l15 7M4197 5675l12 1M4363 5654l-22 17l4 -10m-4 10l10 -1M4384 5673l22 7M4699 5660l15 8M4934 5657l-4 14M5114 5672l9 -12M5263 5656l7 21M5592 5670l-6 -17M5772 5687l-6 -13M5834 5673l-28 -3l10 -5m-10 5l8 6M5969 5660l-14 4M6048 5658l-13 24l-1 -10m1 10l9 -5M6120 5674l24 5M6309 5664l22 13M2066 5717l-16 14M2123 5702l-18 14M2216 5717l-3 16M2269 5726l-24 -10M2391 5702l14 3M2631 5728l-7 -26l8 7m-8 -7l-3 10M2665 5704l-5 17M2755 5715l-11 15M2799 5724l17 -5M3367 5701l-12 16M3919 5715l-8 -20M3998 5715l25 -6M4095 5727l1 -18M4278 5723l6 -23M4560 5713l-15 7M4642 5724l23 -12M5105 5715l-20 16M5211 5712l-24 -6M5254 5713l-7 -12M5373 5722l-2 -26M5540 5730l-24 -9M5798 5712l11 22M6041 5699l-15 21l1 -10m-1 10l9 -4M6086 5722l-12 -21M6109 5696l3 18M6519 5704l23 18l-11 -1m11 1l-4 -10M2151 5756l-18 -14M2245 5758l-13 -1M2278 5762l14 -7M2370 5738l13 21M2420 5751l-28 2l9 -6m-9 6l9 5M2550 5764l11 -16M2603 5773l7 -14M2690 5764l-14 -12M2719 5758l16 16M2915 5759l7 -13M3051 5773l-10 -17M3196 5757l14 4M3388 5776l-5 -16M3430 5744l3 13M3560 5770l-14 -4M3717 5768l-14 -18M3728 5764l29 3l-10 5m10 -5l-9 -7M3926 5769l-12 -18M4053 5745l14 12M4791 5745l21 13M5496 5740l13 20M5673 5761l14 15M5916 5740l-6 25M6091 5756l-11 7M6121 5754l27 3l-9 4m9 -4l-8 -6M6200 5746l-14 9M6273 5777l8 -16M6403 5749l6 25M6454 5742l18 14M6510 5743l-11 25l-1 -10m1 10l8 -6M6568 5762l-10 -14M2382 5803l12 -3M2447 5782l-11 27l-2 -11m2 11l9 -7M2495 5817l-8 -14M2573 5794l-10 14M3036 5786l-25 13l5 -9m-5 9l11 1M3126 5814l-8 -20M3158 5809l19 6M3755 5806l18 -3M3953 5791l-1 27l-5 -9m5 9l6 -8M3993 5814l18 -15M4355 5811l20 -11M4603 5811l4 -12M4692 5802l15 18M5075 5814l-22 -7M5251 5796l0 13M5509 5803l-2 12M5715 5796l-18 18M5918 5793l12 26l-9 -6m9 6l1 -11M6217 5803l-2 20M6434 5806l3 12M6535 5822l-2 -23M6582 5802l-17 -3M2084 5856l27 -9l-7 8m7 -8l-11 -2M2219 5850l12 4M2321 5843l13 4M2502 5865l-11 -16M2623 5848l28 8l-11 3m11 -3l-7 -8M2780 5833l18 17M2814 5844l17 -9M3039 5828l22 20l-11 -2m11 2l-3 -11M3115 5825l-15 24l0 -11m0 11l10 -5M3201 5854l1 -12M3237 5857l19 -1M3286 5852l-11 -22M3376 5827l3 21M3597 5866l3 -26l4 9m-4 -9l-6 8M3763 5858l-22 -4M3795 5843l-24 -3M3971 5841l27 6l-10 3m10 -3l-7 -7M4011 5840l22 18l-11 -2m11 2l-3 -10M4136 5839l-22 -1M4175 5862l-9 -26l8 7m-8 -7l-2 10M4201 5855l10 -13M4362 5848l-24 -13l11 -1m-11 1l5 9M4478 5848l-6 -20M4574 5846l19 0M4927 5841l14 26l-10 -6m10 6l1 -11M5083 5866l-1 -22M5129 5871l9 -27l2 11m-2 -11l-8 7M5309 5860l13 -7M5353 5836l15 9M5542 5837l-23 -1M5633 5847l-7 10M5739 5853l-18 7M5767 5854l4 -17M5820 5861l-4 -22M5860 5853l1 -30l6 10m-6 -10l-6 9M6072 5854l27 -2l-8 6m8 -6l-9 -5M6151 5845l-6 12M6418 5846l-18 -11M6514 5862l6 -29l4 10m-4 -10l-8 8M6562 5849l-12 -9M2545 5895l-29 3l9 -7m-9 7l10 5M2787 5901l15 -12M3231 5887l-9 21M3411 5881l-1 19M3531 5870l3 21M4040 5894l21 -1M4081 5874l11 18M4280 5878l-4 16M4331 5886l1 21M4556 5900l-27 -10l11 -2m-11 2l7 9M4602 5878l7 17M4831 5901l-6 -18M5149 5898l-17 1M5206 5908l1 -26l5 9m-5 -9l-6 8M5527 5874l-4 16M5564 5897l-23 -14l10 0m-10 0l5 9M5744 5883l16 6M5804 5885l-17 7M5998 5894l-23 0M6055 5884l15 1M6153 5871l12 21M6246 5907l-4 -15M6363 5902l-21 -12M6432 5896l10 -25l2 10m-2 -10l-8 6M6587 5891l-20 13M2100 5926l-17 12M2190 5919l-8 17M2372 5951l4 -14M2417 5944l9 -17M2736 5940l-16 -14M2789 5930l-14 -2M2827 5931l-12 -12M2883 5941l-6 -15M2977 5938l-19 2M3015 5940l-22 -1M3479 5932l-18 -12M3575 5934l-3 23M3767 5927l-18 2M3816 5931l-29 -7l11 -4m-11 4l8 8M3837 5917l-11 24l-1 -10m1 10l8 -6M3895 5948l-9 -14M3995 5928l-16 -6M4085 5935l-11 -16M4116 5929l-9 21M4171 5947l-24 -16l11 0m-11 0l5 10M4196 5926l30 5l-11 4m11 -4l-9 -8M4488 5944l5 -22M4542 5917l-8 27l-3 -10m3 10l8 -7M4577 5925l10 7M4616 5924l4 12M5080 5939l-1 -21M5131 5938l-17 -3M5187 5942l-11 5M5226 5951l-13 -19M5308 5939l-2 -12M5355 5940l8 -15M5499 5910l-4 28l-4 -10m4 10l7 -8M5831 5926l-21 6M5856 5920l20 12M6012 5943l-7 -11M6060 5921l-14 18M6110 5938l-16 6M6279 5948l-15 -7M6516 5950l-2 -19M6548 5928l-1 20M2123 5981l-13 -18M2439 5988l-7 -11M2641 5966l-21 16l4 -9m-4 9l10 -1M2772 5982l-9 -8M3031 5984l17 -5M3074 5971l14 17M3264 5965l-1 21M3532 5984l22 -12M3637 5984l-29 -4l10 -5m-10 5l9 7M3872 5980l-22 -10M4133 5975l25 16l-11 0m11 0l-5 -10M4268 5968l9 19M4379 5962l-7 14M4557 5971l-24 13l5 -9m-5 9l10 1M4593 5990l15 -4M4680 5990l15 -13M4739 5988l-18 -15M4838 5977l-26 -1l9 -5m-9 5l8 6M4970 5971l-29 -3l10 -5m-10 5l9 7M5147 5992l11 -27l2 11m-2 -11l-9 7M5198 5974l7 14M5615 5990l10 -11M5644 5981l8 -17M5752 5983l8 -10M5812 5986l-23 -7M5980 5993l-13 -16M6109 5968l7 13M6176 5979l-7 18M6343 5974l27 13l-11 1m11 -1l-6 -10M6532 5994l18 -10M2458 6040l-6 -24M2793 6026l-15 -18M2910 6022l0 -12M2967 6024l-21 1M3203 6021l-12 -4M3229 6028l20 -3M3709 6016l-15 -9M3805 6009l-20 7M4041 6025l-25 12l6 -9m-6 9l11 1M4372 6016l19 19l-10 -2m10 2l-2 -10M4581 6027l-15 9M4900 6039l1 -26l5 9m-5 -9l-6 8M5210 6007l14 19M5574 6043l20 -20l-3 10m3 -10l-10 2M5668 6005l10 18M6458 6022l-3 21M2207 6048l16 23l-10 -4m10 4l-1 -11M2446 6068l-8 12M2714 6056l-16 17M2909 6078l-6 -13M3032 6075l-16 -12M3164 6083l-2 -28l6 9m-6 -9l-5 9M3228 6062l-26 0l9 -5m-9 5l9 5M3294 6069l14 -5M3545 6051l-9 9M3591 6069l11 6M3686 6066l0 17M3875 6065l-17 -3M4108 6068l-10 12M4231 6069l20 4M4830 6065l17 -15M5016 6077l-9 -8M5064 6061l-24 4M5091 6088l16 -23l-1 11m1 -11l-10 4M5446 6074l-19 -6M5629 6051l-22 11M5704 6061l12 -6M5797 6052l-11 17M5983 6063l-22 4M6081 6083l-10 -25l8 6m-8 -6l-2 10M6401 6076l-2 -20M6452 6068l-23 -10M6490 6061l-5 14M6567 6052l21 18l-10 -2m10 2l-3 -10M2073 6114l24 -15l-5 10m5 -10l-11 0M2153 6107l-21 14M2233 6102l-10 12M2363 6125l-2 -22M2421 6126l-8 -11M2480 6107l-22 14l4 -9m-4 9l10 0M2498 6109l11 21M3654 6104l-8 14M4666 6110l19 -14M4806 6118l-4 -12M5077 6110l3 17M5306 6111l20 -12M5405 6128l-7 -22M5492 6124l8 -23M5867 6107l-23 12l5 -8m-5 8l10 1M5943 6109l9 15M6007 6106l-14 20M2215 6143l-23 2M2444 6156l-21 -19l11 2m-11 -2l3 11M2482 6136l-6 16M2657 6150l15 -6M2746 6157l21 -17l-4 10m4 -10l-10 1M2992 6144l-18 1M3077 6140l-14 25l-1 -11m1 11l9 -5M3116 6167l19 -12M3314 6142l10 7M3433 6146l23 0M4251 6152l-22 -10M4524 6153l-19 -4M4591 6177l14 -24l0 11m0 -11l-9 5M4919 6167l-14 -3M5096 6147l12 -1M5213 6141l-17 21l1 -10m-1 10l10 -3M5474 6161l-26 8l7 -8m-7 8l10 2M5650 6158l28 -1l-9 6m9 -6l-9 -5M5803 6150l-4 22M5854 6159l-19 -3M5998 6160l-21 8M6064 6149l7 14M6239 6146l16 3M6453 6154l-18 14M6494 6134l-6 27l-3 -10m3 10l7 -7M6563 6141l8 16M2273 6205l0 -19M2651 6190l-20 1M2734 6206l21 -15l-4 9m4 -9l-10 1M2787 6198l-15 0M2930 6199l-13 11M3020 6203l-16 -20M3253 6192l-22 3M3627 6200l-16 -9M3667 6179l-6 23M3828 6193l6 14M4169 6222l2 -28l5 10m-5 -10l-6 9M4387 6204l14 3M4434 6183l3 28l-7 -8m7 8l4 -10M4544 6212l-15 -21M4568 6200l-5 -15M4623 6182l10 24M5237 6201l-20 1M5419 6191l-22 -7M5495 6203l-18 -23l11 4m-11 -4l1 11M5536 6205l-5 -16M6042 6188l14 6M6090 6204l1 -24M6130 6179l10 22M6335 6188l-12 10M6476 6201l-15 -13M6544 6193l8 15M2078 6251l-29 -6l11 -4m-11 4l8 8M2119 6236l5 13M2164 6235l11 15M2197 6234l9 26l-8 -7m8 7l2 -10M2282 6253l17 -17M2674 6222l-11 22M2728 6232l-12 14M3179 6246l6 14M3265 6228l1 17M3302 6263l12 -24l1 10m-1 -10l-9 6M3489 6245l-10 -9M3551 6246l-21 -11M3572 6243l7 19M3719 6254l5 -16M3767 6235l16 4M3830 6248l-22 2M4326 6230l-14 5M4468 6246l-24 -12l10 -1m-10 1l5 9M4505 6257l7 -22M4548 6248l-13 0M4690 6240l11 26l-9 -6m9 6l2 -11M4781 6252l-4 -13M4872 6224l-16 18M5019 6238l-3 22M5113 6233l-19 -1M5293 6227l-17 20l1 -10m-1 10l10 -3M5384 6259l-7 -20M5608 6234l-10 23M5698 6234l-8 13M6109 6254l12 -19M6480 6232l3 15M2866 6280l15 -1M3794 6282l-10 23M3925 6296l5 -24M4202 6282l3 20M4345 6292l17 0M4482 6291l21 -10M4904 6273l7 16M4932 6267l14 23l-9 -5m9 5l0 -10M4982 6301l19 -16M5137 6296l-29 1l9 -6m-9 6l10 5M5310 6292l-14 0M5444 6303l8 -18M5750 6296l25 0M5823 6286l-13 4M5876 6282l-6 11M6093 6290l14 2M6276 6282l8 25M6361 6276l15 11M2066 6344l4 -21M2497 6323l-20 6M2536 6317l-5 15M2676 6328l-10 15M2799 6335l6 -12M2855 6341l-1 -29l6 9m-6 -9l-5 10M2910 6344l-17 -4M3002 6320l-12 25l-1 -10m1 10l9 -6M3325 6332l-23 0M3711 6342l6 -15M3772 6320l13 27l-10 -6m10 6l1 -11M3829 6314l-13 19M4180 6329l-12 10M4234 6323l-10 21M4370 6337l-19 3M4682 6344l11 -5M4794 6342l-18 -7M4909 6343l22 -17l-4 10m4 -10l-11 1M4978 6326l-29 -3l10 -5m-10 5l9 7M5145 6328l13 18M5365 6322l16 4M5592 6322l22 2M5777 6336l18 -3M5854 6336l-15 2M6101 6326l14 -2M6202 6329l-3 24M6302 6333l-10 -24l8 6m-8 -6l-1 10M6336 6332l6 -21M6402 6333l-22 -5M6418 6340l18 -2M6495 6335l-21 12"/>
<path stroke="#ffff00" d="M2204 2458l-12 -14M2441 2466l-7 -11M2609 2451l11 12M2943 2449l12 5M4084 2450l24 14l-10 0m10 0l-5 -9M4410 2443l-3 16M4843 2461l-23 -5M5062 2472l-25 -8l10 -2m-10 2l7 8M5153 2476l-5 -15M5480 2447l-10 14M5736 2456l12 2M6166 2451l2 16M6512 2454l15 -11M2510 2484l-19 20l2 -10m-2 10l10 -3M3500 2484l13 23l-9 -5m9 5l0 -10M3754 2506l-9 -9M3852 2497l-21 11M4374 2495l21 20l-11 -2m11 2l-3 -11M4461 2499l25 11l-10 1m10 -1l-6 -9M4759 2499l-16 -14M4940 2498l-16 -4M5604 2495l-20 16M5765 2516l11 -24l1 10m-1 -10l-8 6M6376 2497l-19 10M2052 2541l19 18M2123 2541l-1 17M2631 2534l-7 18M2712 2557l-11 -24l8 6m-8 -6l-1 10M2758 2553l16 -9M2999 2532l-22 14l4 -9m-4 9l10 0M3078 2562l3 -27l4 9m-4 -9l-6 8M3625 2532l10 15M3823 2530l-22 18l4 -10m-4 10l11 -1M4063 2535l-18 14M4124 2554l20 -6M4430 2545l-18 4M5514 2531l22 18l-11 -2m11 2l-3 -10M5650 2536l17 0M5779 2537l11 5M5984 2533l1 19M6028 2533l1 15M6116 2545l-5 -16M6216 2551l-1 -25M6253 2564l-3 -14M2219 2592l0 -14M2918 2580l-4 23M3171 2589l29 -5l-8 7m8 -7l-10 -4M3368 2583l16 -2M3519 2587l5 18M3651 2593l13 12M3789 2577l-4 14M3973 2591l-7 14M4213 2596l-7 -16M4349 2586l-16 -7M4806 2578l-19 10M4905 2586l-4 21M5078 2586l-15 22l0 -10m0 10l9 -4M5493 2583l12 -2M5570 2594l13 15M5689 2580l-2 15M5820 2591l-11 -9M5880 2574l-12 11M6289 2580l-26 4l8 -6m-8 6l9 4M2151 2632l-2 13M2221 2617l-16 19M2442 2639l-12 -4M2566 2625l12 26l-9 -6m9 6l1 -11M3117 2624l21 4M3207 2639l8 11M3367 2649l-22 -10M3545 2637l-16 10M3720 2621l18 20l-10 -3m10 3l-2 -10M3811 2633l22 20l-11 -2m11 2l-3 -11M4778 2637l-6 14M5103 2626l-18 13M5373 2646l16 -8M5418 2646l8 -20M6389 2635l-4 -15M2273 2678l0 17M2418 2698l6 -21M2557 2674l-30 -3l10 -5m-10 5l9 7M2819 2697l8 -23M2878 2674l-20 -12M2919 2674l-15 -7M3934 2677l-27 -5l10 -4m-10 4l8 7M4652 2684l22 -10M4703 2684l15 -1M5249 2676l14 0M5419 2678l-15 20M5458 2664l-9 14M5755 2691l16 -23l-1 11m1 -11l-10 4M5908 2665l-16 20M5947 2664l2 28l-6 -9m6 9l5 -9M6199 2677l-18 17M6552 2692l12 -16M2269 2719l-25 3M2389 2720l6 13M2682 2729l-14 6M3263 2718l-1 28l-5 -9m5 9l6 -9M3604 2717l-18 -3M3622 2718l5 28l-7 -8m7 8l4 -10M3956 2736l16 -18M3991 2723l11 5M4132 2711l16 1M4186 2731l-18 -2M4370 2720l-20 -10M5882 2720l1 23M6022 2709l17 11M6255 2709l13 20M6361 2712l-20 0M6569 2712l-3 27l-4 -9m4 9l6 -8M2418 2761l-10 12M2962 2772l-3 -12M3415 2753l4 29l-7 -9m7 9l4 -10M4152 2768l20 -1M4337 2769l4 11M4385 2758l10 13M4639 2773l-22 -10M4748 2778l6 -23M5763 2752l7 12M6197 2769l-26 15l5 -10m-5 10l11 0M6364 2774l10 -12M2343 2817l-19 -10M2387 2810l17 0M2668 2827l-7 -15M2797 2795l13 25l-9 -5m9 5l1 -11M2881 2811l16 4M3159 2816l21 3M3355 2797l13 14M3582 2821l-8 -24M4004 2797l8 10M4358 2814l15 -8M4661 2810l-30 -2l10 -5m-10 5l9 7M5211 2810l-14 -6M5290 2809l-11 13M5412 2813l12 4M2141 2867l-12 -16M2320 2872l10 -12M2460 2865l-16 -4M2562 2857l-17 9M2676 2851l20 1M4663 2841l21 14M4718 2864l-13 1M4812 2849l-10 8M5265 2845l0 13M5535 2832l12 25l-9 -6m9 6l1 -11M2292 2893l-9 20M2791 2890l13 3M3363 2899l-19 5M4152 2894l-24 -7M4225 2901l-2 -17M4410 2906l22 -6M4594 2910l21 -7M5238 2898l-11 21M5347 2907l-18 -11M5878 2899l-3 -15M6214 2920l-1 -26l5 8m-5 -8l-5 9M6385 2886l22 14M6480 2911l8 -12M2124 2941l11 -15M2819 2955l10 -24l2 10m-2 -10l-8 6M3663 2939l-16 -14M3692 2941l20 18l-10 -2m10 2l-3 -10M3888 2943l-11 7M3920 2943l16 3M4150 2948l13 -7M4452 2928l-9 23M4795 2961l0 -20M5178 2942l-10 -12M5796 2937l23 8M5940 2953l12 -13M6002 2934l0 21M6047 2934l2 22M6268 2956l23 -16l-5 10m5 -10l-11 0M2617 2969l2 13M2905 2974l-10 23M2947 2999l-1 -29l6 9m-6 -9l-6 10M3220 2990l16 14M3589 2971l-14 11M3996 2983l6 -11M4098 2976l-10 18M4236 2977l-9 24M5108 2998l-13 -10M5348 2990l-11 -14M5503 2984l25 -1M2182 3049l2 -24M2380 3019l-20 2M2546 3034l7 -21M2595 3006l-5 28l-4 -10m4 10l7 -8M2880 3028l-22 -16l10 1m-10 -1l4 10M3142 3027l11 12M3427 3042l-10 -18M3887 3012l3 28l-7 -9m7 9l5 -10M4306 3048l-1 -14M4398 3046l-22 -20l11 2m-11 -2l3 11M4529 3016l-5 20M4738 3030l25 -4M5818 3026l-5 -12M6370 3040l-21 -2M2211 3081l-12 -9M3288 3084l25 -15l-5 10m5 -10l-11 0M4175 3069l24 -3M4458 3077l-2 16M4571 3074l-25 -3M4782 3063l15 16M5317 3073l19 21l-10 -3m10 3l-2 -10M5653 3065l-1 26l-5 -9m5 9l6 -8M5988 3075l-14 -20M2306 3117l20 2M2502 3135l4 -14M2540 3098l21 20l-11 -2m11 2l-3 -11M2737 3118l13 20M2823 3120l-14 -4M3096 3131l-1 -17M3740 3127l28 -9l-7 8m7 -8l-11 -3M3910 3126l26 -14l-5 10m5 -10l-11 0M3977 3128l-9 -10M4052 3121l14 15M4334 3115l19 -9M4718 3105l-6 15M4847 3109l-13 23l0 -10m0 10l9 -5M5168 3117l6 15M5221 3134l10 -9M5965 3112l-4 12M5982 3123l23 8M6373 3118l-10 -7M2441 3176l6 -16M3280 3148l-28 9l7 -8m-7 8l11 3M4236 3153l-17 24l1 -11m-1 11l10 -4M4441 3159l23 -2M4746 3149l-16 19M4909 3171l23 -8M5378 3171l16 3M5572 3163l-30 2l9 -7m-9 7l10 5M5860 3180l-24 -17l11 1m-11 -1l4 10M6250 3159l-3 14M2399 3212l14 5M2869 3211l20 -4M2903 3198l10 16M3158 3209l-25 -3M3835 3216l20 -2M3986 3191l-4 29l-5 -10m5 10l7 -9M4189 3214l24 5M4607 3194l14 8M5083 3186l0 21M5235 3202l-21 5M5538 3217l-9 -13M5681 3220l15 -10M6196 3193l-17 18M2532 3254l-24 9M3188 3242l-17 19M3537 3267l20 -14M4873 3262l2 -28l5 9m-5 -9l-6 9M5065 3236l-11 25l-1 -10m1 10l8 -6M5201 3256l-1 -24M5438 3236l-6 12M6030 3255l-17 -19M6104 3243l16 2M6176 3244l-15 22l1 -10m-1 10l9 -4M2456 3281l7 11M2683 3295l18 12M2902 3311l16 -12M4021 3303l1 -17M4060 3284l3 14M4108 3298l26 -3l-8 6m8 -6l-9 -4M4523 3304l15 -4M4611 3288l-1 24M4741 3288l19 6M4811 3298l-18 3M5218 3284l11 16M6182 3298l20 5M6241 3288l-25 10l6 -8m-6 8l10 2M6503 3300l-12 -20M2106 3329l-1 16M2154 3349l-4 -17M2244 3345l17 -6M2460 3338l24 2M2705 3338l22 -2M2765 3334l-3 -13M3921 3334l-13 22M4230 3344l5 -11M4313 3346l4 -14M4737 3336l-9 21M5430 3327l-17 4M5547 3328l13 12M5787 3336l18 -14M2349 3390l24 -8M2689 3369l10 11M2743 3385l-23 -4M3106 3401l7 -23M3504 3383l7 -14M4202 3375l-6 20M4258 3384l-15 11M4634 3390l-27 -5l10 -4m-10 4l8 7M4838 3387l12 -22M5401 3383l15 -9M5535 3389l17 -5M5801 3383l19 9M5868 3364l-14 22l0 -10m0 10l9 -4M6239 3379l-19 -7M2054 3428l15 -1M2764 3412l-10 14M3819 3436l-27 2l8 -6m-8 6l9 5M4500 3421l-3 14M4818 3436l11 -11M5025 3437l-28 -3l10 -4m-10 4l8 7M5152 3413l-1 19M5656 3444l4 -17M6485 3438l2 -24M2507 3467l-21 -11M2637 3474l6 -19M3380 3487l-7 -12M3887 3473l10 -15M4029 3486l-8 -18M4250 3462l21 12M4618 3471l9 -11M4801 3485l-3 -23M4865 3472l-25 3M4895 3474l16 -19M4937 3466l12 7M5038 3477l15 3M5268 3453l13 25l-9 -6m9 6l1 -11M5452 3456l-10 17M5541 3461l11 25l-8 -6m8 6l1 -10M5637 3468l-27 -12l11 -1m-11 1l6 9M6525 3475l-23 14l5 -9m-5 9l10 0M2482 3512l3 22M2517 3506l10 19M2617 3504l-10 8M2665 3510l14 21M2953 3513l-19 -17M3077 3520l12 -10M3314 3518l-24 -15l11 0m-11 0l5 9M3640 3535l-16 -25l10 5m-10 -5l0 11M3820 3517l-8 -18M3870 3514l3 -17M4131 3536l12 -25l1 11m-1 -11l-9 6M4687 3507l14 0M4960 3502l3 20M5281 3526l-5 -20M5799 3522l-16 -6M6284 3508l23 -6M6527 3503l13 17M2091 3539l20 22l-11 -3m11 3l-2 -11M2226 3566l14 -2M2276 3556l-23 -10M2320 3543l5 22M3270 3564l22 3M3617 3562l-3 -19M3850 3558l-16 -9M3984 3572l-2 -15M4059 3559l18 2M4154 3560l25 13l-11 1m11 -1l-5 -9M4254 3563l-3 -21M4989 3538l-6 23M5265 3571l-13 -15M5989 3551l7 11M6258 3569l19 -2M6494 3546l9 12M3868 3612l0 -25M4688 3616l-15 -12M5394 3608l-10 -10M6157 3592l-5 21M2187 3652l3 -19M2316 3660l9 -22M2728 3646l22 0M3381 3643l17 9M3704 3635l13 18M4126 3650l-6 11M4247 3639l1 14M4302 3653l-5 -15M4888 3662l23 -9M5266 3645l-11 -6M5972 3647l-17 7M6459 3641l23 18l-11 -1m11 1l-4 -10M2990 3698l-18 -20l10 3m-10 -3l2 10M3028 3689l24 -6M3305 3690l15 -9M3812 3692l15 0M3866 3707l-21 -14M4289 3693l-23 16l4 -10m-4 10l11 0M4447 3674l15 22l-9 -4m9 4l-1 -10M4820 3683l-7 12M5103 3714l-5 -27l7 8m-7 -8l-4 10M5205 3676l-11 13M5547 3692l13 11M6244 3704l19 -14M6577 3669l16 22l-10 -4m10 4l-1 -10M2143 3745l-11 -9M3203 3732l2 18M3334 3743l-8 -25l8 7m-8 -7l-2 10M3506 3736l1 13M4540 3733l-17 10M4728 3731l-14 15M6198 3744l-16 3M2157 3773l15 8M2355 3783l-22 -12M2892 3771l2 13M3557 3785l-18 -2M3571 3788l26 -8l-7 8m7 -8l-10 -3M3779 3781l-15 -9M4082 3759l6 27l-7 -8m7 8l4 -10M4828 3766l12 5M5384 3783l-6 -13M5977 3788l5 -15M6017 3770l19 -4M6085 3777l-18 -15M6385 3781l11 -6M2331 3827l-27 -1l9 -5m-9 5l8 5M2957 3807l5 15M3335 3838l10 -13M3792 3837l-6 -28l8 8m-8 -8l-4 10M4024 3825l16 -6M4225 3824l-28 8l7 -8m-7 8l11 3M4450 3816l-21 -2M4490 3817l-27 -6l10 -3m-10 3l7 7M4576 3826l8 -21M4797 3812l-2 21M4901 3823l-6 -13M5135 3817l-11 20M5247 3814l15 5M5542 3836l-3 -22M5972 3829l-19 2M6326 3817l-27 9l7 -8m-7 8l11 2M2054 3855l14 5M2848 3885l-17 -15M3577 3851l14 15M3724 3874l18 -1M3894 3857l17 22l-10 -4m10 4l-1 -11M4081 3877l14 -25l0 11m0 -11l-10 5M4369 3862l-22 5M4641 3846l1 25M5064 3863l-23 -10M5696 3884l8 -19M6160 3876l21 -6M6334 3865l20 9M2688 3905l-11 8M3207 3911l-5 20M3331 3909l-1 -16M3918 3933l6 -28l3 10m-3 -10l-8 8M4160 3916l13 -27l1 11m-1 -11l-9 6M4214 3920l-1 -13M4293 3921l-9 -12M4721 3911l-21 18l3 -10m-3 10l10 -2M5536 3924l-6 -18M5901 3914l-5 -22M6004 3900l-7 11M2748 3960l8 -16M2850 3948l21 1M3450 3970l-2 -17M3502 3944l-15 23l0 -10m0 10l9 -5M3772 3960l-19 -8M3833 3968l-13 -9M3927 3943l-26 4l8 -6m-8 6l9 4M3984 3948l19 -8M4274 3946l26 15l-11 0m11 0l-5 -10M4660 3956l-24 2M4927 3955l-23 -14l10 0m-10 0l5 9M5026 3958l-22 -3M5458 3953l17 -5M5611 3952l7 20M6115 3933l-2 29l-5 -10m5 10l6 -9M2362 4009l9 -12M2638 4017l3 -22M2851 4007l28 -2l-9 6m9 -6l-9 -5M2923 3997l1 -15M2963 4004l18 -10M3000 4009l23 -19l-4 11m4 -11l-11 1M3190 4013l9 -15M4533 4004l-23 5M4664 3983l19 21l-10 -3m10 3l-2 -11M4928 3999l10 18M5313 4009l-7 -18M5553 3982l-26 13l6 -10m-6 10l11 1M5645 4015l-7 -26l8 7m-8 -7l-3 10M2070 4041l-1 -13M2128 4027l-7 16M2988 4037l-18 -4M3247 4063l12 -19M3561 4042l-26 -3l9 -4m-9 4l8 6M3817 4049l-11 -6M3946 4040l3 26l-6 -8m6 8l4 -9M4417 4034l-15 -2M4597 4022l-14 21M4638 4031l12 3M4825 4039l19 -6M5078 4044l-28 4l8 -7m-8 7l10 4M5796 4026l9 22M6126 4037l-24 11l6 -9m-6 9l10 1M6204 4041l7 -10M2233 4083l-1 19M2916 4088l-15 3M3031 4098l-23 -16l10 1m-10 -1l4 10M3109 4092l-7 11M3183 4090l28 -6l-8 7m8 -7l-10 -4M3421 4065l-12 27l-2 -11m2 11l9 -6M3479 4073l-10 9M3702 4086l-22 18l3 -10m-3 10l11 -2M3796 4100l-14 -9M4650 4093l13 1M5456 4104l-5 -12M5683 4074l-12 20M6099 4104l-4 -12M6182 4083l5 14M2089 4126l-22 0M2857 4127l-4 23M3390 4140l19 -2M4102 4149l-21 -17l10 2m-10 -2l3 10M4273 4145l-3 -14M4405 4131l1 -16M4636 4126l11 -8M4684 4140l3 -19M5430 4115l-8 14M6263 4131l4 21M2238 4181l-11 6M2681 4177l5 14M2807 4170l19 -10M2867 4167l13 6M3011 4180l13 -10M3440 4172l-17 -1M4111 4167l-12 14M4299 4193l-16 -22l10 4m-10 -4l1 10M5363 4179l-20 -13M5482 4175l5 18M5632 4170l13 -6M6236 4169l6 15M6361 4167l13 0M2472 4210l12 17M4150 4219l-11 -14M4220 4205l-2 16M4573 4225l28 2l-9 5m9 -5l-9 -6M4631 4203l5 23M4895 4223l-25 8l6 -8m-6 8l10 2M5666 4232l-11 -7M5714 4205l-11 19M5852 4200l-11 25l-1 -10m1 10l8 -6M5995 4221l-14 2M6581 4205l-13 13M3043 4273l16 -5M3529 4279l-17 -24l10 4m-10 -4l1 11M4024 4273l19 -5M4056 4262l13 -4M4107 4276l-4 -26M4528 4257l14 17M4814 4269l-8 -27l8 7m-8 -7l-3 10M5092 4257l-9 10M5348 4275l22 -16l-4 10m4 -10l-10 1M5696 4269l-23 10M5966 4265l-19 0M6401 4270l26 -6l-7 7m7 -7l-9 -3M2382 4299l17 15M2644 4296l21 3M2765 4310l-14 -2M2801 4296l27 10l-11 2m11 -2l-7 -9M3177 4312l4 -18M3227 4322l-5 -27l7 8m-7 -8l-4 10M3593 4288l-10 28l-2 -11m2 11l9 -7M3816 4300l-14 26l0 -11m0 11l10 -6M3851 4299l17 22l-10 -4m10 4l-1 -10M4933 4317l-25 -10l10 -2m-10 2l6 8M5059 4308l-23 9M5323 4315l12 -11M6570 4311l10 -14M2741 4352l-19 18l2 -10m-2 10l10 -2M2850 4354l-29 -2l10 -5m-10 5l9 7M3143 4371l2 -25M4160 4359l-13 -2M4397 4337l-12 23l-1 -10m1 10l9 -5M4539 4360l-23 -11M4605 4363l27 -3l-8 6m8 -6l-9 -4M5402 4338l0 28l-6 -9m6 9l6 -9M5552 4351l-11 -8M6463 4338l4 13M2981 4372l9 28l-8 -8m8 8l3 -11M3024 4391l19 -1M3406 4375l7 20M4249 4399l-24 2M4410 4386l-13 3M4541 4395l26 7l-10 3m10 -3l-7 -8M4973 4394l-12 -12M5478 4391l-5 18M5629 4383l-18 21l2 -11m-2 11l10 -3M6124 4407l-13 -27l10 6m-10 -6l-1 11M6164 4386l5 21M2102 4430l-12 26l-1 -11m1 11l9 -6M2139 4444l-18 -8M2318 4429l14 9M2416 4446l-3 -26l6 8m-6 -8l-4 9M3591 4438l16 -4M3755 4427l-3 22M4345 4455l-3 -26l6 8m-6 -8l-4 9M4447 4449l-11 -17M5122 4435l17 8M5179 4439l8 11M5593 4441l-12 -9M6100 4442l4 -12M6376 4436l-11 -10M2300 4494l-17 -18M3033 4476l18 11M3633 4487l-16 -14M5341 4484l-8 14M5596 4499l11 -21M5874 4484l3 18M6260 4480l-11 13M6364 4482l-22 11M6380 4467l26 12l-11 1m11 -1l-6 -9M2662 4533l-19 -3M2905 4518l12 0M3172 4516l-27 12l6 -9m-6 9l11 1M4888 4517l14 0M5094 4533l-13 -5M2464 4590l23 -17l-4 10m4 -10l-11 1M2575 4566l8 17M2623 4589l5 -16M3119 4576l1 -24M3500 4559l8 18M3870 4577l-13 -25l9 5m-9 -5l-1 11M4024 4569l28 7l-10 3m10 -3l-8 -8M4230 4566l4 17M4309 4568l27 10l-11 2m11 -2l-7 -9M5681 4575l29 -1l-9 6m9 -6l-10 -6M6347 4572l-18 17M6397 4567l7 18M2190 4609l6 27l-7 -7m7 7l3 -10M2784 4605l-25 12l6 -9m-6 9l11 1M3108 4617l-9 16M4156 4607l-4 21M4311 4629l-6 -28l7 8m-7 -8l-4 10M4622 4612l-8 -14M4673 4616l-27 -13l11 -1m-11 1l6 10M6016 4612l-29 -3l10 -5m-10 5l9 7M6280 4624l13 1M6370 4627l-23 -10M2575 4649l10 12M3460 4660l-9 -10M3714 4675l12 -24l1 10m-1 -10l-9 5M3778 4663l-26 9l7 -8m-7 8l10 2M3946 4670l16 -11M4078 4646l21 6M4139 4646l-19 15M4409 4671l25 -14l-5 9m5 -9l-11 0M4632 4660l3 15M5471 4650l2 13M5508 4660l12 7M5706 4678l-1 -27l6 9m-6 -9l-5 9M5749 4662l20 3M6025 4659l-1 16M6255 4656l-16 14M2262 4692l10 10M2297 4708l27 -4l-8 7m8 -7l-10 -4M2598 4707l-5 -28l7 8m-7 -8l-4 10M2703 4683l-9 23M2980 4703l-22 5M3426 4706l9 11M3459 4701l21 -4M3731 4696l20 11M4058 4711l3 -18M4111 4686l3 29l-7 -9m7 9l5 -10M4374 4691l21 11M4758 4700l18 1M4847 4701l14 20M4906 4712l-16 -11M5131 4690l-3 19M5883 4711l-26 4l7 -7m-7 7l9 4M6590 4716l-3 -18M2287 4763l5 -18M2540 4743l-26 1M2753 4742l12 26l-9 -6m9 6l1 -11M3681 4748l-24 12l6 -9m-6 9l10 1M3769 4732l-4 16M3871 4733l-3 27l-4 -9m4 9l6 -8M4752 4743l-29 -1l9 -5m-9 5l9 6M5151 4754l-4 -19M5339 4750l-15 -9M2091 4770l-17 23l1 -11m-1 11l10 -4M2461 4787l-16 -4M2595 4785l-18 8M3429 4778l5 11M3663 4779l-25 9l6 -8m-6 8l10 2M4434 4792l14 3M4670 4793l-28 -7l11 -3m-11 3l8 8M4870 4794l-27 13l6 -9m-6 9l11 1M5075 4774l1 12M5144 4779l-19 5M5391 4794l21 -18l-3 10m3 -10l-10 2M5498 4796l-7 -17M5857 4780l-6 15M5963 4788l3 21M6146 4793l-17 -5M6500 4776l-1 29l-6 -10m6 10l6 -9M6559 4796l-17 -14M2178 4831l-15 20M2765 4823l3 22M4281 4816l4 20M4551 4828l-14 -5M4686 4839l20 7M5422 4824l27 11l-11 2m11 -2l-6 -9M5581 4851l-22 -17l10 1m-10 -1l4 10M6073 4828l0 29l-6 -9m6 9l6 -10M6443 4847l-21 -6M2139 4889l-23 -3M2654 4863l-12 21M2905 4868l14 7M3197 4881l-10 -8M3420 4868l-12 5M3454 4875l26 -14l-6 10m6 -10l-11 -1M3702 4881l8 -10M5689 4891l-27 -13l11 -1m-11 1l6 10M6154 4886l-16 -3M6335 4863l-17 13M2133 4921l-17 -10M2436 4914l10 10M2566 4925l25 14l-11 1m11 -1l-6 -9M3134 4938l2 -28l5 10m-5 -10l-6 9M3546 4926l-27 10l7 -9m-7 9l11 2M3804 4924l3 16M4234 4925l-19 -18M4596 4920l14 5M4660 4917l-11 -6M4862 4917l17 15M5507 4922l11 -4M5893 4910l-4 16M6538 4935l-7 -23M2287 4965l-20 -7M2313 4960l12 5M2773 4962l14 6M3094 4961l14 22l-9 -4m9 4l0 -10M3614 4965l-18 -6M4821 4974l-15 -3M5031 4973l-8 -27l8 7m-8 -7l-3 10M6038 4971l15 -10M6456 4959l-8 13M3117 5024l0 -12M3221 5012l3 -12M4432 5028l-15 -14M6245 5022l7 -25l3 10m-3 -10l-7 7M6308 5020l-14 -13M2259 5075l13 -19M2746 5044l-18 21l2 -10m-2 10l10 -3M2875 5039l4 18M2962 5045l18 24l-10 -4m10 4l-1 -11M3161 5053l-25 12l6 -9m-6 9l10 1M3435 5054l-9 -17M3602 5050l16 -5M3786 5064l14 -9M4708 5063l16 -2M4802 5064l12 -5M5776 5047l-18 3M5807 5060l6 -19M2111 5117l0 -21M2288 5095l19 18l-10 -2m10 2l-3 -10M2489 5098l-18 -3M2540 5108l-16 2M2756 5096l5 -12M2960 5107l-25 -6M3675 5111l-2 -28l6 9m-6 -9l-5 9M3727 5113l5 -15M4614 5105l-18 -15M5052 5097l26 2l-9 5m9 -5l-8 -6M5562 5083l10 13M5616 5093l-2 23M5707 5110l12 -24l1 10m-1 -10l-9 5M6074 5104l3 -21M6211 5101l-28 -7l10 -3m-10 3l8 8M2172 5137l17 15M2384 5144l-15 -6M2733 5137l-10 -10M4074 5123l-12 19M4334 5141l25 7l-10 3m10 -3l-7 -7M4489 5147l-12 -6M4534 5163l1 -22M4612 5147l-1 13M4897 5154l-11 -5M4934 5145l10 -8M5025 5133l20 1M5602 5148l-12 -6M5902 5157l13 -15M6052 5139l-10 27l-2 -11m2 11l9 -7M6146 5137l-19 0M6490 5148l19 11M6560 5139l-13 8M2078 5184l-18 -7M2189 5169l26 15l-11 0m11 0l-5 -10M2448 5194l-24 5M2495 5195l-19 -18M3234 5188l-16 -23l10 4m-10 -4l0 11M3822 5189l2 15M4306 5176l12 8M4708 5181l-26 12l6 -9m-6 9l11 1M5153 5195l-24 -1M5649 5184l-9 25l-2 -10m2 10l8 -6M6253 5185l5 -14M6387 5201l25 -12l-6 9m6 -9l-10 -1M6524 5188l-8 17M2176 5212l1 18M2726 5226l28 -9l-7 9m7 -9l-11 -3M3466 5231l24 -2M3520 5230l-8 -17M3751 5223l11 25l-8 -6m8 6l1 -10M4062 5245l4 -14M5158 5229l11 -5M5345 5227l19 -6M5379 5231l28 10l-11 2m11 -2l-7 -9M5617 5238l14 4M5707 5237l19 -3M5858 5248l11 -21M6511 5213l-2 28l-5 -10m5 10l6 -9M2934 5294l-6 -17M3625 5254l8 25l-8 -6m8 6l2 -10M3683 5291l-1 -28l6 9m-6 -9l-5 9M3874 5268l-7 20M4048 5265l-12 11M4095 5284l5 -20M4237 5266l6 25M4448 5277l7 -14M4557 5285l-8 -29l8 8m-8 -8l-3 11M5446 5273l-22 -2M5919 5283l11 -11M2741 5321l-10 15M3507 5328l24 -5M3651 5313l-6 15M3702 5314l-1 15M4033 5309l-3 15M4332 5323l12 -16M4381 5333l1 -14M4620 5311l7 28l-8 -8m8 8l3 -10M4897 5324l-17 -6M4982 5313l29 -4l-9 7m9 -7l-10 -5M5117 5329l2 -26M5174 5324l9 -20M5762 5332l2 -13M2253 5373l-11 -8M2296 5360l-8 21M2713 5342l9 26l-8 -7m8 7l2 -10M2751 5344l4 24M3086 5353l-17 10M3188 5358l-12 27l-1 -11m1 11l9 -6M3261 5367l11 -15M3701 5359l24 -4M4108 5379l-10 -14M4407 5367l8 -17M5229 5361l17 -12M5518 5362l-9 11M5656 5357l-16 -6M6528 5363l-15 -18M2183 5393l-18 20l2 -10m-2 10l10 -3M2281 5408l9 18M2501 5414l6 -22M2706 5397l-17 19M2841 5406l-28 -2l9 -5m-9 5l9 6M2928 5408l-12 6M3018 5397l4 18M3069 5394l-18 7M3524 5395l6 21M3765 5416l-22 -7M3899 5390l-8 20M5365 5395l-1 23M5406 5419l-12 -12M5737 5420l-15 -19M5993 5403l15 21M6195 5402l-11 -12M6457 5398l0 27l-5 -9m5 9l5 -9M6513 5411l-14 -9M2400 5444l1 20M2617 5439l-12 21M2801 5444l-2 22M2897 5446l7 21M3036 5437l-25 9l6 -8m-6 8l10 2M3072 5452l17 14M3102 5445l29 -4l-9 7m9 -7l-10 -5M3181 5428l-9 28l-2 -11m2 11l9 -7M3630 5443l18 19M3678 5436l-6 15M3718 5434l0 17M4460 5448l11 27l-9 -7m9 7l2 -11M4790 5461l-18 -12M5016 5450l-21 -1M5240 5455l21 9M6072 5449l13 7M6391 5430l-17 24l1 -11m-1 11l10 -4M2272 5502l14 -18M2656 5505l-17 -12M2822 5490l13 -5M2928 5484l-27 7l7 -8m-7 8l10 3M3470 5498l-6 -15M3662 5506l-18 -22l10 3m-10 -3l2 11M3720 5499l-20 -22l11 3m-11 -3l2 11M3896 5508l-26 -9l10 -2m-10 2l7 8M4398 5490l-24 -2M4438 5507l18 -7M4579 5498l-10 -13M4772 5482l-14 5M5027 5493l-1 22M5262 5482l-12 9M6078 5501l22 -15l-4 9m4 -9l-10 0M6116 5492l27 -9l-7 8m7 -8l-10 -2M2534 5532l-3 12M2672 5548l-10 -27l9 7m-9 -7l-2 11M2982 5528l24 3M3074 5531l9 16M3177 5540l-16 2M3671 5538l22 19l-11 -2m11 2l-3 -11M4377 5552l-2 -25M4737 5534l17 23l-10 -4m10 4l-1 -11M5023 5542l-29 7l8 -8m-8 8l11 4M5517 5543l8 -17M5562 5538l-17 -10M5592 5541l20 15M5848 5549l-13 -8M5977 5529l-10 7M6170 5536l-13 17M3188 5559l-2 27l-5 -9m5 9l6 -8M4114 5569l7 25l-7 -7m7 7l3 -10M4631 5577l-6 22M4965 5591l-27 6l8 -7m-8 7l10 4M5082 5592l11 -19M5127 5573l-18 3M5576 5594l8 -14M3215 5618l24 3M4356 5641l20 -14M4504 5644l-19 -16M4695 5629l-21 8M4862 5649l9 -23M4925 5622l-8 17M5033 5620l-22 -8M5044 5619l9 17M5287 5622l2 13M5319 5633l17 -9M5887 5615l-3 12M6161 5626l0 17M6264 5623l-9 12M6294 5628l-5 12M2449 5678l5 -19M2675 5670l19 3M2961 5671l17 -17M3156 5654l-14 25l-1 -11m1 11l10 -5M3287 5681l14 -5M3796 5691l-1 -25M4547 5678l-16 6M4590 5679l-26 -10l10 -2m-10 2l6 8M5406 5668l-25 -4M5877 5662l-21 15M2159 5711l-16 -12M2299 5732l17 -14M2587 5735l-11 -26l9 6m-9 -6l-2 10M3035 5709l-22 -5M3723 5728l-13 -6M4430 5712l-13 12M4578 5702l22 6M4884 5726l-15 -4M5149 5734l-9 -28l8 7m-8 -7l-3 11M5615 5719l0 -26l5 8m-5 -8l-5 9M5713 5716l-12 4M5841 5724l9 -14M2083 5745l9 19M2192 5751l-7 12M2656 5754l-26 5l7 -7m-7 7l9 4M3107 5758l-20 4M3149 5755l2 22M3514 5759l0 14M3657 5751l-21 1M3843 5760l13 15M4173 5767l-12 -11M4287 5763l12 5M4479 5760l25 -12l-6 9m6 -9l-11 -1M4548 5761l-18 7M4758 5767l2 -17M5123 5744l-12 15M5433 5753l12 1M5596 5760l3 -20M5990 5764l15 11M2200 5804l1 -12M2667 5785l-10 21M2698 5812l8 -14M3315 5800l8 25l-8 -6m8 6l2 -10M4200 5810l-13 -14M4262 5809l26 8l-10 3m10 -3l-7 -8M4765 5800l20 1M5011 5792l-17 20M5115 5805l-6 16M5385 5797l11 -6M5556 5799l17 9M5670 5788l-24 11l6 -9m-6 9l10 1M5739 5786l23 16l-11 -1m11 1l-4 -10M5984 5792l7 15M6055 5806l16 -10M6406 5801l-11 21M2965 5846l8 21M3006 5861l-1 -19M4722 5866l-16 -25l10 5m-10 -5l0 11M4980 5855l-2 -13M5957 5852l-13 4M6222 5857l13 -5M6274 5853l-13 -10M6326 5860l-3 -14M3370 5899l-23 6M3639 5887l-20 2M4129 5906l-3 -29l7 9m-7 -9l-5 10M4379 5880l-12 3M4503 5891l-15 -16M4652 5875l4 24M5930 5894l14 4M2224 5918l-9 16M2451 5933l15 -11M2647 5928l-28 9l7 -8m-7 8l11 3M3059 5945l11 -24l1 10m-1 -10l-8 5M3277 5927l13 10M3421 5926l4 13M4310 5932l-2 23M4329 5935l20 6M4430 5933l17 18M5686 5953l-4 -29l7 9m-7 -9l-4 10M5904 5928l7 16M2162 5979l-25 -10l10 -2m-10 2l6 8M2404 5982l-22 15l4 -9m-4 9l10 -1M2716 5992l-10 -18M2895 5983l11 -24l1 10m-1 -10l-8 6M3305 5963l5 22M3587 5974l-9 21M4004 5968l-23 7M4184 5974l17 9M4632 5979l19 14M4910 5961l4 20M6075 5974l4 13M6243 5981l5 13M2234 6009l-9 14M2421 6037l5 -29l4 10m-4 -10l-7 8M2585 6022l9 23M2723 6020l15 -14M2999 6026l28 -2l-9 6m9 -6l-10 -5M3330 6027l13 -9M3425 6022l5 12M3482 6032l-1 -18M3899 6019l-21 -4M3962 6019l13 19M4099 6022l23 1M4151 6019l24 4M4238 6018l20 13M5352 6027l-1 -15M5923 6039l-11 -19M2096 6075l23 -7M2807 6079l9 -19M2852 6056l13 18M3459 6068l-21 1M3955 6056l19 4M5334 6075l-12 -8M5373 6076l18 -12M5480 6053l-26 8l7 -8m-7 8l10 3M2283 6097l0 27l-5 -9m5 9l5 -9M2638 6126l14 -10M2747 6104l-4 16M2877 6131l9 -23M3068 6122l-24 -6M3095 6110l21 -8M3196 6109l-12 23M3268 6099l16 14M3598 6097l28 7l-11 3m11 -3l-8 -8M3704 6105l-5 15M3825 6103l20 -6M3882 6111l-11 -13M3995 6123l-17 -17M4314 6114l-28 6l8 -7m-8 7l10 4M4600 6103l23 18l-11 -1m11 1l-4 -10M4708 6095l11 14M4744 6118l25 2M5177 6123l-6 -29l8 8m-8 -8l-4 10M5266 6126l-12 -14M5470 6096l-23 18l4 -10m-4 10l11 -1M5646 6099l-21 10M5712 6107l18 20l-10 -3m10 3l-2 -10M2081 6153l-9 16M2121 6145l-18 12M2290 6152l-4 24M2374 6156l10 -13M2821 6152l-23 2M3048 6146l-12 5M3400 6150l21 3M3778 6149l-1 16M4176 6167l11 -18M4290 6148l-17 4M4404 6154l19 -4M4443 6142l16 14M5006 6154l-2 -20M5874 6168l23 -9M6036 6143l-14 26l-1 -11m1 11l10 -6M6231 6155l-27 4l8 -7m-8 7l9 4M6529 6170l-3 -26l6 8m-6 -8l-4 9M2160 6210l26 -1M3104 6186l-13 11M3176 6198l25 6l-9 3m9 -3l-7 -7M3508 6196l-1 14M3565 6192l-16 -5M3702 6214l8 -12M4066 6191l-13 -4M4316 6192l-19 2M4824 6188l-22 8M4839 6219l20 -19l-3 10m3 -10l-10 2M5583 6189l0 16M5692 6206l-20 -6M5770 6207l-18 -1M6196 6207l-10 -15M2262 6226l-7 15M2538 6250l-9 -13M2751 6246l14 -20M2800 6255l23 -15l-4 10m4 -10l-10 0M3031 6266l12 -27l2 11m-2 -11l-9 6M3446 6241l18 2M3658 6247l21 -17l-3 10m3 -10l-10 2M3865 6241l-15 1M4665 6239l-21 1M5054 6228l-2 14M5518 6244l4 -23M5555 6238l10 17M5806 6236l-12 4M5859 6240l-25 1M5943 6233l-24 10M6545 6247l-20 -11M2311 6294l6 -11M2510 6291l-14 11M2631 6282l14 24l-9 -5m9 5l0 -11M3058 6269l0 22M3610 6288l17 19M3833 6299l7 -18M4759 6276l7 12M4813 6301l-23 -13l10 0m-10 0l5 9M4844 6277l-1 26M5177 6281l-18 -10M5726 6282l-18 13M6049 6280l-21 1M6218 6281l13 -8M6507 6285l20 -7M2126 6343l-4 -23M2247 6333l11 -23M2947 6333l-18 8M3076 6349l14 -18M3226 6328l-18 11M3877 6339l-17 -10M4656 6317l-22 15l4 -9m-4 9l10 -1M5021 6339l-4 -25M5189 6341l20 -17l-3 10m3 -10l-10 2M5329 6335l-11 9M5652 6347l2 -24"/>
</g>
<rect x="767.8" y="177.5" width="32" height="519.5" fill="url(#cb)"/>
<g fill="none" stroke="#000" stroke-width="2.4" stroke-linejoin="round">
<rect x="113.8" y="177.5" width="638.6" height="519.3"/>
<rect x="767.8" y="177.5" width="32" height="519.5"/>
<path d="M204.8 697V692M204.8 177V182M296.1 697V692M296.1 177V182M387.4 697V692M387.4 177V182M478.6 697V692M478.6 177V182M569.9 697V692M569.9 177V182M661.2 697V692M661.2 177V182M114 631.6H118.5M752 631.6H747.5M114 566.8H118.5M752 566.8H747.5M114 501.9H118.5M752 501.9H747.5M114 437.0H118.5M752 437.0H747.5M114 372.1H118.5M752 372.1H747.5M114 307.2H118.5M752 307.2H747.5M114 242.4H118.5M752 242.4H747.5M768 242.4H774M799.5 242.4H793.5M768 307.2H774M799.5 307.2H793.5M768 372.1H774M799.5 372.1H793.5M768 437.0H774M799.5 437.0H793.5M768 501.9H774M799.5 501.9H793.5M768 566.8H774M799.5 566.8H793.5M768 631.6H774M799.5 631.6H793.5"/>
</g>
<path d="M703 191H737" stroke="#9000d0" stroke-width="1.3" fill="none"/><path d="M729 188.5L737 191L729 193.5L731.5 191Z" fill="#9000d0" stroke="#9000d0" stroke-width="0.8"/>
</svg>
<div class="pl" style="left:83.39px;top:689.30px"><b>−</b><b>1</b><b>0</b></div><div class="pl" style="left:98.33px;top:624.42px"><b>0</b></div><div class="pl" style="left:90.86px;top:559.55px"><b>1</b><b>0</b></div><div class="pl" style="left:90.86px;top:494.68px"><b>2</b><b>0</b></div><div class="pl" style="left:90.86px;top:429.80px"><b>3</b><b>0</b></div><div class="pl" style="left:90.86px;top:364.93px"><b>4</b><b>0</b></div><div class="pl" style="left:90.86px;top:300.05px"><b>5</b><b>0</b></div><div class="pl" style="left:90.86px;top:235.18px"><b>6</b><b>0</b></div><div class="pl" style="left:90.86px;top:170.30px"><b>7</b><b>0</b></div><div class="pl" style="left:101.39px;top:706.00px"><b>−</b><b>2</b><b>0</b></div><div class="pl" style="left:203.15px;top:706.00px"><b>0</b></div><div class="pl" style="left:290.70px;top:706.00px"><b>2</b><b>0</b></div><div class="pl" style="left:381.99px;top:706.00px"><b>4</b><b>0</b></div><div class="pl" style="left:473.27px;top:706.00px"><b>6</b><b>0</b></div><div class="pl" style="left:564.56px;top:706.00px"><b>8</b><b>0</b></div><div class="pl" style="left:652.11px;top:706.00px"><b>1</b><b>0</b><b>0</b></div><div class="pl" style="left:743.39px;top:706.00px"><b>1</b><b>2</b><b>0</b></div><div class="pl" style="left:813.50px;top:170.20px"><b>1</b></div><div class="pl" style="left:813.50px;top:235.07px"><b>0</b><b>.</b><b>8</b></div><div class="pl" style="left:813.50px;top:299.95px"><b>0</b><b>.</b><b>6</b></div><div class="pl" style="left:813.50px;top:364.82px"><b>0</b><b>.</b><b>4</b></div><div class="pl" style="left:813.50px;top:429.70px"><b>0</b><b>.</b><b>2</b></div><div class="pl" style="left:813.50px;top:494.57px"><b>0</b></div><div class="pl" style="left:806.03px;top:559.45px"><b>−</b><b>0</b><b>.</b><b>2</b></div><div class="pl" style="left:806.03px;top:624.33px"><b>−</b><b>0</b><b>.</b><b>4</b></div><div class="pl" style="left:806.03px;top:689.20px"><b>−</b><b>0</b><b>.</b><b>6</b></div><div class="pl" style="left:521.50px;top:183.50px"><b>&#39;</b><b>0</b><b>0</b><b>0</b><b>5</b><b>0</b><b>.</b><b>x</b><b>y</b><b>z</b><b>&#39;</b><b> </b><b>u</b><b> </b><b>2</b><b>:</b><b>3</b><b>:</b><b>5</b><b>:</b><b>6</b><b>:</b><b>7</b></div><div class="pl" style="left:73.00px;top:733.00px"><b>1</b><b>4</b><b>1</b><b>.</b><b>8</b><b>0</b><b>9</b><b>,</b><b> </b><b> </b><b>5</b><b>6</b><b>.</b><b>4</b><b>8</b><b>6</b><b>9</b></div>
</div>
</body></html>
